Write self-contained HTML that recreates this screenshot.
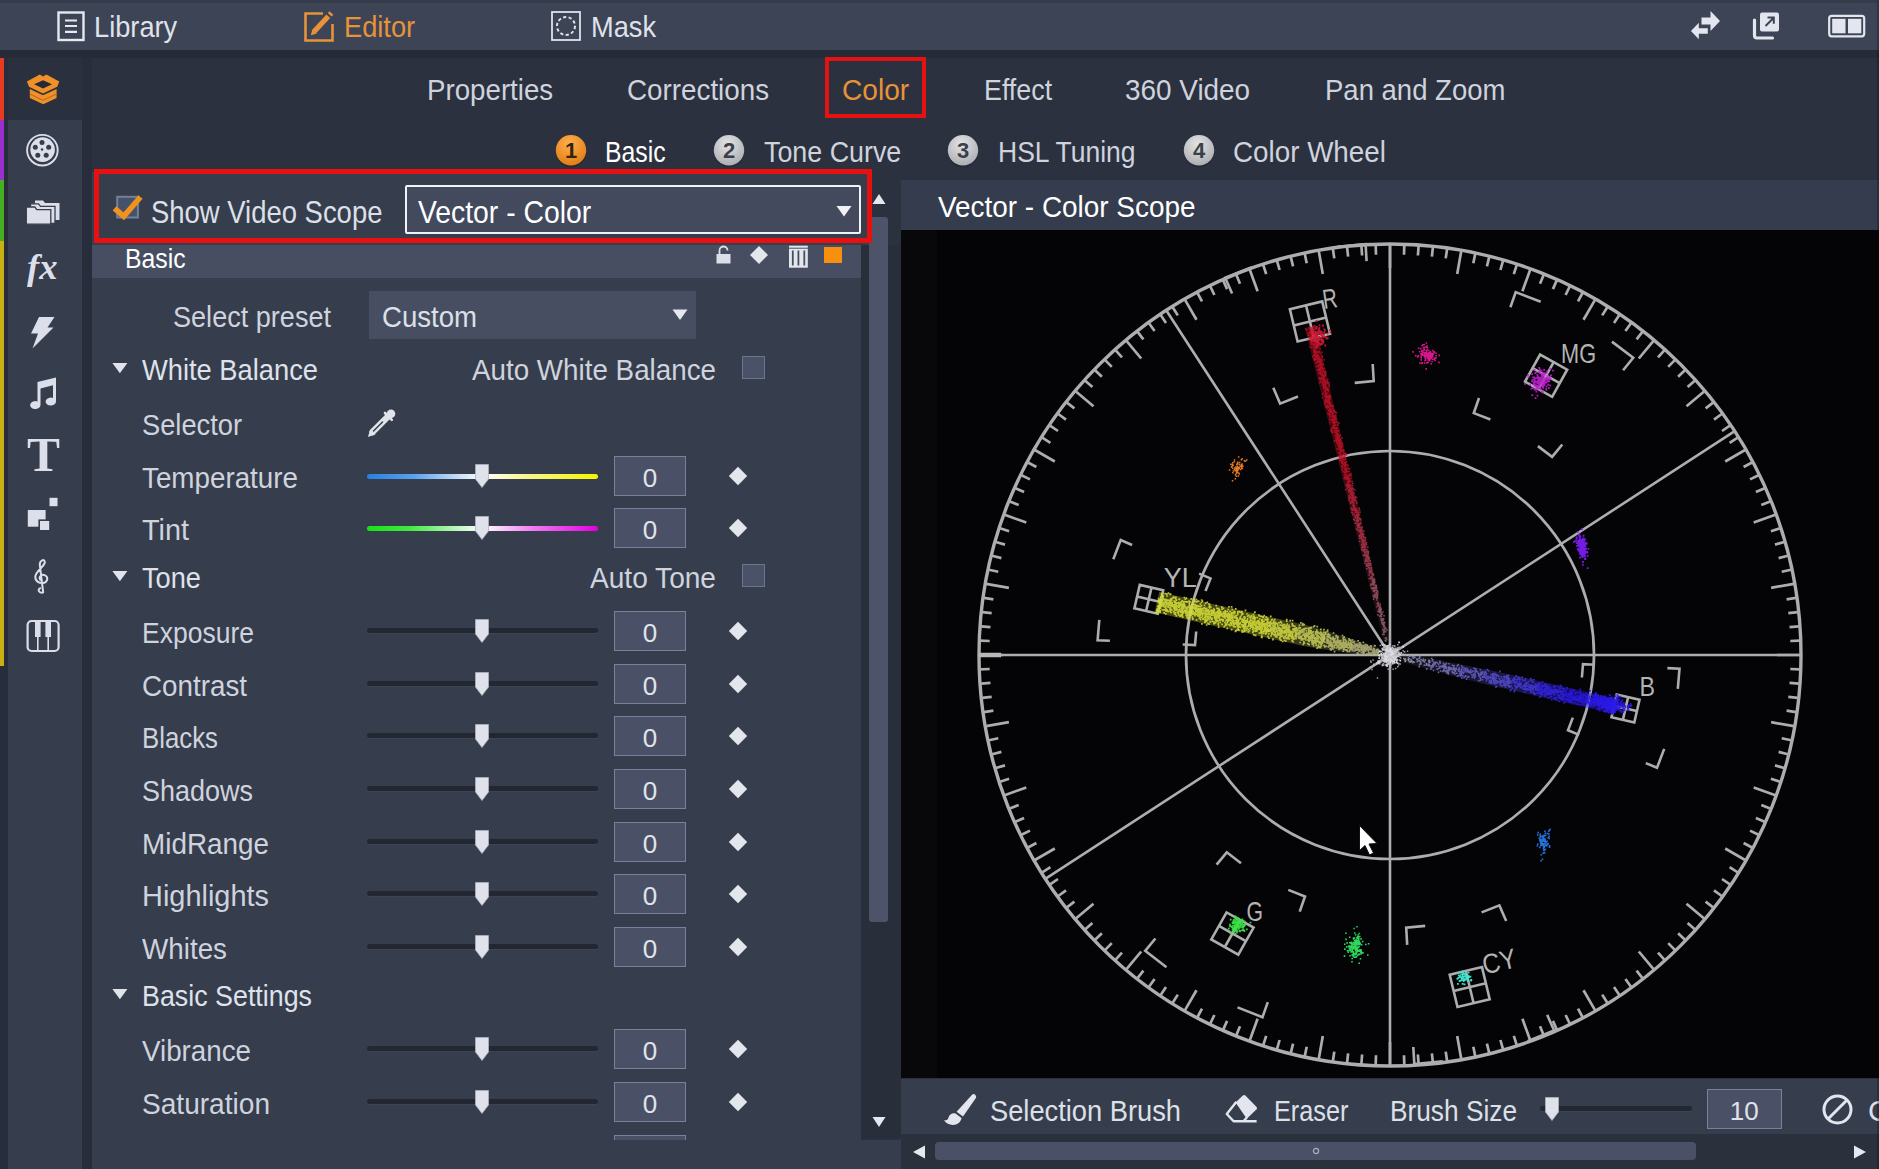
<!DOCTYPE html>
<html><head><meta charset="utf-8"><title>Color - Vector Scope</title>
<style>
html,body{margin:0;padding:0;background:#2b313e;}
#app{position:relative;width:1879px;height:1169px;overflow:hidden;background:#2b313e;font-family:"Liberation Sans",sans-serif;}
#app div,#app span,#app svg{position:absolute;display:block;}
#app span.t{white-space:nowrap;line-height:1;transform-origin:0 0;}
</style></head><body><div id="app">
<div style="left:0px;top:0px;width:1879px;height:50px;background:#3d4455;"></div>
<div style="left:0px;top:0px;width:1879px;height:2.5px;background:#343b4a;"></div>
<div style="left:0px;top:50px;width:1879px;height:8px;background:#252b37;"></div>
<svg style="left:55px;top:9px;" width="32" height="34" viewBox="0 0 32 34"><rect x="3.5" y="3.5" width="25" height="27.5" fill="none" stroke="#e6e9f0" stroke-width="2.4"/><path d="M10 11.5h12M10 17h12M10 22.8h12" stroke="#e6e9f0" stroke-width="2.2"/></svg>
<span class="t" style="left:94.3px;top:11.5px;font-size:30px;color:#dfe2ea;font-family:'Liberation Sans',sans-serif;transform:scaleX(0.9073);">Library</span>
<svg style="left:301px;top:7px;" width="36" height="36" viewBox="0 0 36 36"><path d="M22 6.5H4.5V33.5H31.5V17" fill="none" stroke="#e8923a" stroke-width="2.6"/><path d="M9.800 28.200l1.700-6.200 4.400 4.400z" fill="#e8923a"/><path d="M13.400 24.300L27.300 9.300" stroke="#e8923a" stroke-width="5.200"/><path d="M28.700 7.800l1.700-1.800" stroke="#e8923a" stroke-width="5.200"/></svg>
<span class="t" style="left:344.4px;top:11.5px;font-size:30px;color:#e8923a;font-family:'Liberation Sans',sans-serif;transform:scaleX(0.9072);">Editor</span>
<svg style="left:549px;top:9px;" width="34" height="34" viewBox="0 0 34 34"><rect x="3" y="3" width="28" height="28" fill="none" stroke="#dfe2ea" stroke-width="1.8"/><circle cx="17" cy="17" r="9" fill="none" stroke="#dfe2ea" stroke-width="2" stroke-dasharray="3.2 2.4"/></svg>
<span class="t" style="left:590.5px;top:11.5px;font-size:30px;color:#dfe2ea;font-family:'Liberation Sans',sans-serif;transform:scaleX(0.9069);">Mask</span>
<svg style="left:1686px;top:8px;" width="38" height="36" viewBox="0 0 38 36"><path d="M15.5 9.5h9V3l9.5 10-9.5 10v-6.5h-9z" fill="#e3e6ee"/><path d="M22.5 19.5h-9V13L4 23l9.5 10v-6.5h9z" fill="#e3e6ee" stroke="#3d4455" stroke-width="1.4"/></svg>
<svg style="left:1748px;top:8px;" width="36" height="36" viewBox="0 0 36 36"><path d="M6.5 12v15.5a2.5 2.5 0 0 0 2.5 2.5h15.5" fill="none" stroke="#e3e6ee" stroke-width="3.2" stroke-linecap="round"/><rect x="12" y="4.5" width="19" height="19" rx="2" fill="#e3e6ee"/><path d="M17.5 18l8-8M19.5 9.5h6.3v6.3" fill="none" stroke="#3d4455" stroke-width="2"/></svg>
<svg style="left:1826px;top:12px;" width="42" height="28" viewBox="0 0 42 28"><rect x="3.2" y="3.8" width="35" height="20.5" rx="2.5" fill="none" stroke="#e3e6ee" stroke-width="2.2"/><rect x="6.2" y="6.8" width="13.3" height="14.5" fill="#e3e6ee"/><rect x="22" y="6.8" width="13.3" height="14.5" fill="#e3e6ee"/></svg>
<div style="left:1877px;top:0px;width:2px;height:50px;background:#2f3544;"></div>
<div style="left:0px;top:58px;width:92px;height:1111px;background:#272d3a;"></div>
<div style="left:8px;top:58px;width:74px;height:1111px;background:#363d4d;"></div>
<div style="left:8px;top:58px;width:74px;height:62px;background:#2a303d;"></div>
<div style="left:0px;top:58px;width:4px;height:62px;background:#e63a22;"></div>
<div style="left:0px;top:120px;width:4px;height:60px;background:#9a30cf;"></div>
<div style="left:0px;top:180px;width:4px;height:61px;background:#45b022;"></div>
<div style="left:0px;top:241px;width:4px;height:424.5px;background:#c9b013;"></div>
<svg style="left:24px;top:71px;" width="38" height="36" viewBox="0 0 38 36"><path d="M2.900 10.400L15.800 3.400L19 5.600L22.400 3.400L35.300 10.400L33.200 15.800L19 22.400L5 15.800z" fill="#f09028"/><path d="M10.100 13.200L19 9.200L28 13.200L19 17.400z" fill="#242a36"/><path d="M5.800 18L19 24.300L32.600 18V27L19.200 33.300L5.800 27z" fill="#f09028"/><path d="M5.800 23L19 29.300L32.600 23" stroke="#b86a18" stroke-width="1" fill="none"/></svg>
<svg style="left:24px;top:132px;" width="36" height="36" viewBox="0 0 36 36"><circle cx="18.400" cy="18.200" r="15.300" fill="none" stroke="#dcdfe9" stroke-width="1.900"/><circle cx="18.600" cy="17.600" r="12.300" fill="#dcdfe9"/><g fill="#363d4d"><circle cx="18" cy="10.5" r="2.5"/><circle cx="11.3" cy="15.3" r="2.5"/><circle cx="24.7" cy="15.3" r="2.5"/><circle cx="13.8" cy="23.3" r="2.5"/><circle cx="22.2" cy="23.3" r="2.5"/><circle cx="18" cy="17.5" r="1.2"/></g></svg>
<svg style="left:24px;top:194px;" width="38" height="34" viewBox="0 0 38 34"><path d="M11 6.5h8l2 2.5h14.5v17H11z" fill="#dcdfe9"/><path d="M6.5 9.8h8l2 2.5h14.5v17H6.5z" fill="#dcdfe9" stroke="#363d4d" stroke-width="1.3"/><path d="M2.3 13h8.5l2 2.7h14v14.5H2.3z" fill="#dcdfe9" stroke="#363d4d" stroke-width="1.3"/></svg>
<span class="t" style="left:27.0px;top:248.8px;font-size:36px;color:#dcdfe9;font-family:'Liberation Serif',serif;font-weight:bold;font-style:italic;transform:scaleX(1.0171);">fx</span>
<svg style="left:26px;top:313px;" width="34" height="40" viewBox="0 0 34 40"><path d="M13 4H28.5L21.5 14.5H27.5L6.5 35.5L12 20.5H5z" fill="#dcdfe9"/></svg>
<svg style="left:24px;top:373px;" width="38" height="40" viewBox="0 0 38 40"><path d="M13.5 9L32 4.5V28.5a5.2 4 0 1 1-3-3.6V12.3L16.5 15.5V32a5.2 4 0 1 1-3-3.6z" fill="#dcdfe9"/></svg>
<span class="t" style="left:26.5px;top:430.0px;font-size:49px;color:#dcdfe9;font-family:'Liberation Serif',serif;font-weight:bold;transform:scaleX(1.0097);">T</span>
<svg style="left:24px;top:494px;" width="38" height="40" viewBox="0 0 38 40"><rect x="25.5" y="3.8" width="8" height="8.4" fill="#dcdfe9"/><rect x="3.8" y="16" width="17.8" height="16.7" fill="#dcdfe9"/><rect x="15.2" y="26.2" width="10.8" height="10.6" fill="#dcdfe9" stroke="#363d4d" stroke-width="1.6"/></svg>
<svg style="left:28px;top:556px;" width="30" height="40" viewBox="0 0 30 40"><path d="M14.8 36.5c-4 .8-5.6-3-2.5-4.3M15.2 36.3L11.8 9c-.4-4 4.5-7 5-3 .5 4-9.5 9-9.5 15 0 4.5 4 6.500 8 6 4-.5 5.500-5.500 2-7.500-3.500-2-7 1-5 4.300" fill="none" stroke="#dcdfe9" stroke-width="2" stroke-linecap="round"/></svg>
<svg style="left:24px;top:617px;" width="38" height="38" viewBox="0 0 38 38"><rect x="3.6" y="4" width="31" height="30" rx="4" fill="none" stroke="#dcdfe9" stroke-width="2.2"/><path d="M13.8 4v30M24.200 4v30" stroke="#dcdfe9" stroke-width="1.6"/><rect x="11" y="4.500" width="5.600" height="15.500" fill="#dcdfe9"/><rect x="21.400" y="4.500" width="5.600" height="15.500" fill="#dcdfe9"/></svg>
<span class="t" style="left:427.1px;top:75.3px;font-size:30px;color:#cfd3dd;font-family:'Liberation Sans',sans-serif;transform:scaleX(0.9230);">Properties</span>
<span class="t" style="left:626.7px;top:75.3px;font-size:30px;color:#cfd3dd;font-family:'Liberation Sans',sans-serif;transform:scaleX(0.9264);">Corrections</span>
<span class="t" style="left:842.2px;top:75.3px;font-size:30px;color:#e8923a;font-family:'Liberation Sans',sans-serif;transform:scaleX(0.9360);">Color</span>
<span class="t" style="left:983.7px;top:75.3px;font-size:30px;color:#cfd3dd;font-family:'Liberation Sans',sans-serif;transform:scaleX(0.8942);">Effect</span>
<span class="t" style="left:1125.2px;top:75.3px;font-size:30px;color:#cfd3dd;font-family:'Liberation Sans',sans-serif;transform:scaleX(0.9296);">360 Video</span>
<span class="t" style="left:1324.7px;top:75.3px;font-size:30px;color:#cfd3dd;font-family:'Liberation Sans',sans-serif;transform:scaleX(0.9167);">Pan and Zoom</span>
<div style="left:825px;top:57px;width:93px;height:53px;border:4.5px solid #e61212;"></div>
<svg style="left:553.8px;top:133px;" width="34" height="38" viewBox="0 0 34 38"><defs><radialGradient id="g1" cx="45%" cy="30%" r="75%"><stop offset="0" stop-color="#ffb050"/><stop offset="1" stop-color="#e07a10"/></radialGradient></defs><circle cx="17" cy="18.800" r="15.400" fill="#1f242e" opacity=".6"/><circle cx="17" cy="17.200" r="15.200" fill="url(#g1)"/><text x="17" y="25" text-anchor="middle" font-family="Liberation Sans,sans-serif" font-weight="bold" font-size="22" fill="#33240e">1</text></svg>
<span class="t" style="left:605.3px;top:136.6px;font-size:30px;color:#ffffff;font-family:'Liberation Sans',sans-serif;transform:scaleX(0.8274);">Basic</span>
<svg style="left:711.9px;top:133px;" width="34" height="38" viewBox="0 0 34 38"><defs><radialGradient id="g2" cx="45%" cy="30%" r="75%"><stop offset="0" stop-color="#e4e4e6"/><stop offset="1" stop-color="#a9abb0"/></radialGradient></defs><circle cx="17" cy="18.800" r="15.400" fill="#1f242e" opacity=".6"/><circle cx="17" cy="17.200" r="15.200" fill="url(#g2)"/><text x="17" y="25" text-anchor="middle" font-family="Liberation Sans,sans-serif" font-weight="bold" font-size="22" fill="#3b3f48">2</text></svg>
<span class="t" style="left:764.0px;top:136.6px;font-size:30px;color:#cfd3dd;font-family:'Liberation Sans',sans-serif;transform:scaleX(0.8950);">Tone Curve</span>
<svg style="left:946.4px;top:133px;" width="34" height="38" viewBox="0 0 34 38"><defs><radialGradient id="g3" cx="45%" cy="30%" r="75%"><stop offset="0" stop-color="#e4e4e6"/><stop offset="1" stop-color="#a9abb0"/></radialGradient></defs><circle cx="17" cy="18.800" r="15.400" fill="#1f242e" opacity=".6"/><circle cx="17" cy="17.200" r="15.200" fill="url(#g3)"/><text x="17" y="25" text-anchor="middle" font-family="Liberation Sans,sans-serif" font-weight="bold" font-size="22" fill="#3b3f48">3</text></svg>
<span class="t" style="left:998.1px;top:136.6px;font-size:30px;color:#cfd3dd;font-family:'Liberation Sans',sans-serif;transform:scaleX(0.8840);">HSL Tuning</span>
<svg style="left:1181.6px;top:133px;" width="34" height="38" viewBox="0 0 34 38"><defs><radialGradient id="g4" cx="45%" cy="30%" r="75%"><stop offset="0" stop-color="#e4e4e6"/><stop offset="1" stop-color="#a9abb0"/></radialGradient></defs><circle cx="17" cy="18.800" r="15.400" fill="#1f242e" opacity=".6"/><circle cx="17" cy="17.200" r="15.200" fill="url(#g4)"/><text x="17" y="25" text-anchor="middle" font-family="Liberation Sans,sans-serif" font-weight="bold" font-size="22" fill="#3b3f48">4</text></svg>
<span class="t" style="left:1233.1px;top:136.6px;font-size:30px;color:#cfd3dd;font-family:'Liberation Sans',sans-serif;transform:scaleX(0.9263);">Color Wheel</span>
<div style="left:92px;top:172px;width:777px;height:73px;background:#363d4d;"></div>
<div style="left:92px;top:245px;width:769px;height:924px;background:#363d4d;"></div>
<div style="left:92px;top:245px;width:769px;height:33px;background:#474e62;"></div>
<div style="left:861px;top:245px;width:40.5px;height:893px;background:#292e3b;"></div>
<div style="left:869px;top:172px;width:33px;height:73px;background:#2b313e;"></div>
<div style="left:869px;top:216.5px;width:18.5px;height:705px;background:#4d546a;border-radius:3px;"></div>
<svg style="left:871px;top:190.5px;" width="16" height="16" viewBox="0 0 16 16"><path d="M8 3L14.500 13H1.500z" fill="#e6e8ee"/></svg>
<svg style="left:871px;top:1114px;" width="16" height="16" viewBox="0 0 16 16"><path d="M8 13L14.500 3H1.500z" fill="#e6e8ee"/></svg>
<svg style="left:110px;top:190px;" width="34" height="32" viewBox="0 0 34 32"><rect x="7.200" y="6.800" width="20.700" height="20.700" fill="#46526a" stroke="#72809a" stroke-width="2"/><path d="M4.500 18.300L13.800 26.400L30.500 7" fill="none" stroke="#f0921e" stroke-width="5.600"/></svg>
<span class="t" style="left:150.7px;top:196.7px;font-size:30.5px;color:#dde0e8;font-family:'Liberation Sans',sans-serif;transform:scaleX(0.8998);">Show Video Scope</span>
<div style="left:404.500px;top:185px;width:452px;height:44.500px;border:2.300px solid #f2f3f6;background:#434a5e;border-radius:2px;"></div>
<span class="t" style="left:418.2px;top:196.7px;font-size:30.5px;color:#ffffff;font-family:'Liberation Sans',sans-serif;transform:scaleX(0.9284);">Vector - Color</span>
<svg style="left:834px;top:203px;" width="20" height="16" viewBox="0 0 20 16"><path d="M2.500 3H17.500L10 13.500z" fill="#f0f1f5"/></svg>
<div style="left:94.200px;top:169.200px;width:767.800px;height:64.300px;border:5.800px solid #ea1010;"></div>
<span class="t" style="left:125.1px;top:243.7px;font-size:28.5px;color:#ffffff;font-family:'Liberation Sans',sans-serif;transform:scaleX(0.8710);">Basic</span>
<svg style="left:714px;top:244px;" width="20" height="22" viewBox="0 0 20 22"><path d="M5.500 10V6.500a4 4 0 0 1 8 0" fill="none" stroke="#dcdfe9" stroke-width="1.800"/><rect x="2.500" y="10" width="14" height="9.500" fill="#dcdfe9"/></svg>
<svg style="left:749px;top:244.6px;" width="20" height="20" viewBox="0 0 20 20"><path d="M10 1L19 10L10 19L1 10z" fill="#e4e6ed"/></svg>
<svg style="left:787px;top:244px;" width="24" height="26" viewBox="0 0 24 26"><rect x="2" y="1.700" width="18.800" height="2" fill="#e4e6ed"/><rect x="2" y="4.700" width="18.800" height="19" fill="#e4e6ed"/><path d="M5.800 6.500v15M11.400 6.500v15M17.300 6.500v15" stroke="#474e62" stroke-width="1.800"/></svg>
<div style="left:823.5px;top:246.5px;width:18px;height:16.6px;background:#f6900e;"></div>
<span class="t" style="left:173.0px;top:301.5px;font-size:29.5px;color:#cfd3dd;font-family:'Liberation Sans',sans-serif;transform:scaleX(0.9177);">Select preset</span>
<div style="left:369px;top:291px;width:327px;height:48px;background:#474e61;"></div>
<span class="t" style="left:382.0px;top:301.5px;font-size:29.5px;color:#dde0e8;font-family:'Liberation Sans',sans-serif;transform:scaleX(0.9347);">Custom</span>
<svg style="left:670px;top:307px;" width="20" height="16" viewBox="0 0 20 16"><path d="M2.500 2.500H17.500L10 13z" fill="#e6e8ee"/></svg>
<svg style="left:110px;top:360px;" width="20" height="16" viewBox="0 0 20 16"><path d="M2.400 3H17.400L9.900 13.300z" fill="#e0e3ea"/></svg>
<span class="t" style="left:142.0px;top:354.5px;font-size:29.5px;color:#dfe2ea;font-family:'Liberation Sans',sans-serif;transform:scaleX(0.9253);">White Balance</span>
<span class="t" style="left:472.0px;top:354.5px;font-size:29.5px;color:#cfd3dd;font-family:'Liberation Sans',sans-serif;transform:scaleX(0.9418);">Auto White Balance</span>
<div style="left:742px;top:356.2px;width:20.500px;height:20.500px;border:1.600px solid #6c7590;background:#4a5267;"></div>
<span class="t" style="left:142.0px;top:409.5px;font-size:29.5px;color:#cfd3dd;font-family:'Liberation Sans',sans-serif;transform:scaleX(0.9240);">Selector</span>
<svg style="left:364px;top:406px;" width="36" height="34" viewBox="0 0 36 34"><path d="M3.800 31L6.500 23.500L11.500 28.500z" fill="#e0e3ea"/><path d="M8.500 26L23.500 11" stroke="#e0e3ea" stroke-width="6.400" stroke-linecap="round"/><path d="M9.500 25L18.500 16" stroke="#363d4d" stroke-width="1.500" stroke-linecap="round"/><circle cx="27" cy="7.800" r="4.300" fill="#e0e3ea"/><path d="M21 7L27.800 13.800" stroke="#e0e3ea" stroke-width="2.600" stroke-linecap="round"/></svg>
<span class="t" style="left:142.0px;top:462.5px;font-size:29.5px;color:#cfd3dd;font-family:'Liberation Sans',sans-serif;transform:scaleX(0.9420);">Temperature</span>
<div style="left:367px;top:473.5px;width:231px;height:5px;background:linear-gradient(90deg,#2a7fe0 0%,#5aa0ec 20%,#ffffff 50%,#f6f68a 70%,#f4f400 100%);border-radius:2.500px;"></div>
<svg style="left:474.2px;top:462px;" width="16" height="28" viewBox="0 0 16 28"><path d="M1.500 2.500H14.500V17L8 25.500L1.500 17z" fill="#dfe2ea" stroke="#aeb3c0" stroke-width=".8"/></svg>
<div style="left:614px;top:455.5px;width:70px;height:38.5px;border:1.800px solid #78809a;background:#4a5166;"></div>
<span class="t" style="left:642.8px;top:465.0px;font-size:26px;color:#e0e3ea;font-family:'Liberation Sans',sans-serif;transform:scaleX(1.0000);">0</span>
<svg style="left:728px;top:466px;" width="20" height="20" viewBox="0 0 20 20"><path d="M10 .8L19.200 10L10 19.200L.8 10z" fill="#e4e6ed"/></svg>
<span class="t" style="left:142.0px;top:514.5px;font-size:29.5px;color:#cfd3dd;font-family:'Liberation Sans',sans-serif;transform:scaleX(0.9775);">Tint</span>
<div style="left:367px;top:525.5px;width:231px;height:5px;background:linear-gradient(90deg,#18e018 0%,#40e840 18%,#ffffff 50%,#f27af2 72%,#e000e0 100%);border-radius:2.500px;"></div>
<svg style="left:474.2px;top:514px;" width="16" height="28" viewBox="0 0 16 28"><path d="M1.500 2.500H14.500V17L8 25.500L1.500 17z" fill="#dfe2ea" stroke="#aeb3c0" stroke-width=".8"/></svg>
<div style="left:614px;top:507.5px;width:70px;height:38.5px;border:1.800px solid #78809a;background:#4a5166;"></div>
<span class="t" style="left:642.8px;top:517.0px;font-size:26px;color:#e0e3ea;font-family:'Liberation Sans',sans-serif;transform:scaleX(1.0000);">0</span>
<svg style="left:728px;top:518px;" width="20" height="20" viewBox="0 0 20 20"><path d="M10 .8L19.200 10L10 19.200L.8 10z" fill="#e4e6ed"/></svg>
<svg style="left:110px;top:568px;" width="20" height="16" viewBox="0 0 20 16"><path d="M2.400 3H17.400L9.900 13.300z" fill="#e0e3ea"/></svg>
<span class="t" style="left:142.0px;top:562.5px;font-size:29.5px;color:#dfe2ea;font-family:'Liberation Sans',sans-serif;transform:scaleX(0.9223);">Tone</span>
<span class="t" style="left:590.0px;top:562.5px;font-size:29.5px;color:#cfd3dd;font-family:'Liberation Sans',sans-serif;transform:scaleX(0.9522);">Auto Tone</span>
<div style="left:742px;top:564.2px;width:20.500px;height:20.500px;border:1.600px solid #6c7590;background:#4a5267;"></div>
<span class="t" style="left:142.0px;top:617.5px;font-size:29.5px;color:#cfd3dd;font-family:'Liberation Sans',sans-serif;transform:scaleX(0.8987);">Exposure</span>
<div style="left:367px;top:628px;width:231px;height:5.2px;background:#222732;border-radius:2.500px;box-shadow:0 1px 0 #3d4456;"></div>
<svg style="left:474.2px;top:617px;" width="16" height="28" viewBox="0 0 16 28"><path d="M1.500 2.500H14.500V17L8 25.500L1.500 17z" fill="#dfe2ea" stroke="#aeb3c0" stroke-width=".8"/></svg>
<div style="left:614px;top:610.5px;width:70px;height:38.5px;border:1.800px solid #78809a;background:#4a5166;"></div>
<span class="t" style="left:642.8px;top:620.0px;font-size:26px;color:#e0e3ea;font-family:'Liberation Sans',sans-serif;transform:scaleX(1.0000);">0</span>
<svg style="left:728px;top:621px;" width="20" height="20" viewBox="0 0 20 20"><path d="M10 .8L19.200 10L10 19.200L.8 10z" fill="#e4e6ed"/></svg>
<span class="t" style="left:142.0px;top:670.5px;font-size:29.5px;color:#cfd3dd;font-family:'Liberation Sans',sans-serif;transform:scaleX(0.9418);">Contrast</span>
<div style="left:367px;top:681px;width:231px;height:5.2px;background:#222732;border-radius:2.500px;box-shadow:0 1px 0 #3d4456;"></div>
<svg style="left:474.2px;top:670px;" width="16" height="28" viewBox="0 0 16 28"><path d="M1.500 2.500H14.500V17L8 25.500L1.500 17z" fill="#dfe2ea" stroke="#aeb3c0" stroke-width=".8"/></svg>
<div style="left:614px;top:663.5px;width:70px;height:38.5px;border:1.800px solid #78809a;background:#4a5166;"></div>
<span class="t" style="left:642.8px;top:673.0px;font-size:26px;color:#e0e3ea;font-family:'Liberation Sans',sans-serif;transform:scaleX(1.0000);">0</span>
<svg style="left:728px;top:674px;" width="20" height="20" viewBox="0 0 20 20"><path d="M10 .8L19.200 10L10 19.200L.8 10z" fill="#e4e6ed"/></svg>
<span class="t" style="left:142.0px;top:722.5px;font-size:29.5px;color:#cfd3dd;font-family:'Liberation Sans',sans-serif;transform:scaleX(0.8747);">Blacks</span>
<div style="left:367px;top:733px;width:231px;height:5.2px;background:#222732;border-radius:2.500px;box-shadow:0 1px 0 #3d4456;"></div>
<svg style="left:474.2px;top:722px;" width="16" height="28" viewBox="0 0 16 28"><path d="M1.500 2.500H14.500V17L8 25.500L1.500 17z" fill="#dfe2ea" stroke="#aeb3c0" stroke-width=".8"/></svg>
<div style="left:614px;top:715.5px;width:70px;height:38.5px;border:1.800px solid #78809a;background:#4a5166;"></div>
<span class="t" style="left:642.8px;top:725.0px;font-size:26px;color:#e0e3ea;font-family:'Liberation Sans',sans-serif;transform:scaleX(1.0000);">0</span>
<svg style="left:728px;top:726px;" width="20" height="20" viewBox="0 0 20 20"><path d="M10 .8L19.200 10L10 19.200L.8 10z" fill="#e4e6ed"/></svg>
<span class="t" style="left:142.0px;top:775.5px;font-size:29.5px;color:#cfd3dd;font-family:'Liberation Sans',sans-serif;transform:scaleX(0.9147);">Shadows</span>
<div style="left:367px;top:786px;width:231px;height:5.2px;background:#222732;border-radius:2.500px;box-shadow:0 1px 0 #3d4456;"></div>
<svg style="left:474.2px;top:775px;" width="16" height="28" viewBox="0 0 16 28"><path d="M1.500 2.500H14.500V17L8 25.500L1.500 17z" fill="#dfe2ea" stroke="#aeb3c0" stroke-width=".8"/></svg>
<div style="left:614px;top:768.5px;width:70px;height:38.5px;border:1.800px solid #78809a;background:#4a5166;"></div>
<span class="t" style="left:642.8px;top:778.0px;font-size:26px;color:#e0e3ea;font-family:'Liberation Sans',sans-serif;transform:scaleX(1.0000);">0</span>
<svg style="left:728px;top:779px;" width="20" height="20" viewBox="0 0 20 20"><path d="M10 .8L19.200 10L10 19.200L.8 10z" fill="#e4e6ed"/></svg>
<span class="t" style="left:142.0px;top:828.5px;font-size:29.5px;color:#cfd3dd;font-family:'Liberation Sans',sans-serif;transform:scaleX(0.9445);">MidRange</span>
<div style="left:367px;top:839px;width:231px;height:5.2px;background:#222732;border-radius:2.500px;box-shadow:0 1px 0 #3d4456;"></div>
<svg style="left:474.2px;top:828px;" width="16" height="28" viewBox="0 0 16 28"><path d="M1.500 2.500H14.500V17L8 25.500L1.500 17z" fill="#dfe2ea" stroke="#aeb3c0" stroke-width=".8"/></svg>
<div style="left:614px;top:821.5px;width:70px;height:38.5px;border:1.800px solid #78809a;background:#4a5166;"></div>
<span class="t" style="left:642.8px;top:831.0px;font-size:26px;color:#e0e3ea;font-family:'Liberation Sans',sans-serif;transform:scaleX(1.0000);">0</span>
<svg style="left:728px;top:832px;" width="20" height="20" viewBox="0 0 20 20"><path d="M10 .8L19.200 10L10 19.200L.8 10z" fill="#e4e6ed"/></svg>
<span class="t" style="left:142.0px;top:880.5px;font-size:29.5px;color:#cfd3dd;font-family:'Liberation Sans',sans-serif;transform:scaleX(0.9804);">Highlights</span>
<div style="left:367px;top:891px;width:231px;height:5.2px;background:#222732;border-radius:2.500px;box-shadow:0 1px 0 #3d4456;"></div>
<svg style="left:474.2px;top:880px;" width="16" height="28" viewBox="0 0 16 28"><path d="M1.500 2.500H14.500V17L8 25.500L1.500 17z" fill="#dfe2ea" stroke="#aeb3c0" stroke-width=".8"/></svg>
<div style="left:614px;top:873.5px;width:70px;height:38.5px;border:1.800px solid #78809a;background:#4a5166;"></div>
<span class="t" style="left:642.8px;top:883.0px;font-size:26px;color:#e0e3ea;font-family:'Liberation Sans',sans-serif;transform:scaleX(1.0000);">0</span>
<svg style="left:728px;top:884px;" width="20" height="20" viewBox="0 0 20 20"><path d="M10 .8L19.200 10L10 19.200L.8 10z" fill="#e4e6ed"/></svg>
<span class="t" style="left:142.0px;top:933.5px;font-size:29.5px;color:#cfd3dd;font-family:'Liberation Sans',sans-serif;transform:scaleX(0.9428);">Whites</span>
<div style="left:367px;top:944px;width:231px;height:5.2px;background:#222732;border-radius:2.500px;box-shadow:0 1px 0 #3d4456;"></div>
<svg style="left:474.2px;top:933px;" width="16" height="28" viewBox="0 0 16 28"><path d="M1.500 2.500H14.500V17L8 25.500L1.500 17z" fill="#dfe2ea" stroke="#aeb3c0" stroke-width=".8"/></svg>
<div style="left:614px;top:926.5px;width:70px;height:38.5px;border:1.800px solid #78809a;background:#4a5166;"></div>
<span class="t" style="left:642.8px;top:936.0px;font-size:26px;color:#e0e3ea;font-family:'Liberation Sans',sans-serif;transform:scaleX(1.0000);">0</span>
<svg style="left:728px;top:937px;" width="20" height="20" viewBox="0 0 20 20"><path d="M10 .8L19.200 10L10 19.200L.8 10z" fill="#e4e6ed"/></svg>
<svg style="left:110px;top:986px;" width="20" height="16" viewBox="0 0 20 16"><path d="M2.400 3H17.400L9.900 13.300z" fill="#e0e3ea"/></svg>
<span class="t" style="left:142.0px;top:980.5px;font-size:29.5px;color:#dfe2ea;font-family:'Liberation Sans',sans-serif;transform:scaleX(0.9095);">Basic Settings</span>
<span class="t" style="left:142.0px;top:1035.5px;font-size:29.5px;color:#cfd3dd;font-family:'Liberation Sans',sans-serif;transform:scaleX(0.9405);">Vibrance</span>
<div style="left:367px;top:1046px;width:231px;height:5.2px;background:#222732;border-radius:2.500px;box-shadow:0 1px 0 #3d4456;"></div>
<svg style="left:474.2px;top:1035px;" width="16" height="28" viewBox="0 0 16 28"><path d="M1.500 2.500H14.500V17L8 25.500L1.500 17z" fill="#dfe2ea" stroke="#aeb3c0" stroke-width=".8"/></svg>
<div style="left:614px;top:1028.5px;width:70px;height:38.5px;border:1.800px solid #78809a;background:#4a5166;"></div>
<span class="t" style="left:642.8px;top:1038.0px;font-size:26px;color:#e0e3ea;font-family:'Liberation Sans',sans-serif;transform:scaleX(1.0000);">0</span>
<svg style="left:728px;top:1039px;" width="20" height="20" viewBox="0 0 20 20"><path d="M10 .8L19.200 10L10 19.200L.8 10z" fill="#e4e6ed"/></svg>
<span class="t" style="left:142.0px;top:1088.5px;font-size:29.5px;color:#cfd3dd;font-family:'Liberation Sans',sans-serif;transform:scaleX(0.9518);">Saturation</span>
<div style="left:367px;top:1099px;width:231px;height:5.2px;background:#222732;border-radius:2.500px;box-shadow:0 1px 0 #3d4456;"></div>
<svg style="left:474.2px;top:1088px;" width="16" height="28" viewBox="0 0 16 28"><path d="M1.500 2.500H14.500V17L8 25.500L1.500 17z" fill="#dfe2ea" stroke="#aeb3c0" stroke-width=".8"/></svg>
<div style="left:614px;top:1081.5px;width:70px;height:38.5px;border:1.800px solid #78809a;background:#4a5166;"></div>
<span class="t" style="left:642.8px;top:1091.0px;font-size:26px;color:#e0e3ea;font-family:'Liberation Sans',sans-serif;transform:scaleX(1.0000);">0</span>
<svg style="left:728px;top:1092px;" width="20" height="20" viewBox="0 0 20 20"><path d="M10 .8L19.200 10L10 19.200L.8 10z" fill="#e4e6ed"/></svg>
<div style="left:614px;top:1134.800px;width:69.800px;height:20px;border:1.800px solid #78809a;background:#4a5166;"></div>
<div style="left:92px;top:1139.8px;width:809px;height:30px;background:#363d4d;"></div>
<div style="left:901px;top:180px;width:978px;height:50px;background:#353c4d;"></div>
<span class="t" style="left:938.0px;top:191.5px;font-size:29.5px;color:#ffffff;font-family:'Liberation Sans',sans-serif;transform:scaleX(0.9460);">Vector - Color Scope</span>
<div style="left:901px;top:230px;width:978px;height:848px;background:#040406;"></div>
<div style="left:901px;top:1079px;width:978px;height:55px;background:#363d4d;"></div>
<div style="left:901px;top:1134px;width:978px;height:35px;background:#2a303c;"></div>
<svg style="left:942px;top:1092px;" width="36" height="36" viewBox="0 0 36 36"><path d="M30.300 2.400a2.700 2.700 0 0 1 3.600 3.600L21 24.400l-6.400-4.600z" fill="#e3e6ee"/><path d="M13.200 21.300l6.300 4.700c-.6 4-4 6.900-8.700 6.900-3.600 0-6.800-1.500-8.800-4.600 2.600.3 4-.8 4.500-2.900.8-3 3.600-4.700 6.700-4.100z" fill="#e3e6ee"/></svg>
<span class="t" style="left:990.0px;top:1096.0px;font-size:29.5px;color:#dde0e8;font-family:'Liberation Sans',sans-serif;transform:scaleX(0.9244);">Selection Brush</span>
<svg style="left:1224px;top:1092px;" width="38" height="36" viewBox="0 0 38 36"><path d="M12.400 9.700L2.800 22L9.600 29.300H32.600" fill="none" stroke="#e3e6ee" stroke-width="2.400" stroke-linejoin="round"/><path d="M11.600 10.400L18.800 3.600Q20.100 2.600 21.400 3.600L32.600 14.900Q33.500 16.100 32.600 17.300L22.800 26.700z" fill="#e3e6ee"/><path d="M22.800 25.500L19.500 29.300" stroke="#e3e6ee" stroke-width="2.400"/></svg>
<span class="t" style="left:1273.5px;top:1096.3px;font-size:29.5px;color:#dde0e8;font-family:'Liberation Sans',sans-serif;transform:scaleX(0.8574);">Eraser</span>
<span class="t" style="left:1390.0px;top:1096.0px;font-size:29.5px;color:#dde0e8;font-family:'Liberation Sans',sans-serif;transform:scaleX(0.8903);">Brush Size</span>
<div style="left:1540px;top:1106.2px;width:152px;height:5.2px;background:#222732;border-radius:2.500px;box-shadow:0 1px 0 #3d4456;"></div>
<svg style="left:1543.5px;top:1095.2px;" width="16" height="28" viewBox="0 0 16 28"><path d="M1.500 2.500H14.500V17L8 25.500L1.500 17z" fill="#dfe2ea" stroke="#aeb3c0" stroke-width=".8"/></svg>
<div style="left:1707px;top:1088.95px;width:72.5px;height:38.0px;border:1.800px solid #78809a;background:#4a5166;"></div>
<span class="t" style="left:1729.8px;top:1098.2px;font-size:26px;color:#e0e3ea;font-family:'Liberation Sans',sans-serif;transform:scaleX(1.0000);">10</span>
<svg style="left:1820px;top:1092px;" width="36" height="36" viewBox="0 0 36 36"><circle cx="17.500" cy="17.500" r="13.500" fill="none" stroke="#e3e6ee" stroke-width="3"/><path d="M8 27L27 8" stroke="#e3e6ee" stroke-width="3"/></svg>
<span class="t" style="left:1868.0px;top:1096.0px;font-size:29.5px;color:#dde0e8;font-family:'Liberation Sans',sans-serif;transform:scaleX(1.0000);">C</span>
<div style="left:935px;top:1142px;width:761px;height:18px;background:#4a5167;border-radius:4px;"></div>
<svg style="left:910px;top:1143px;" width="18" height="18" viewBox="0 0 18 18"><path d="M15 2.500V15.500L3 9z" fill="#e6e8ee"/></svg>
<svg style="left:1851px;top:1143px;" width="18" height="18" viewBox="0 0 18 18"><path d="M3 2.500V15.500L15 9z" fill="#e6e8ee"/></svg>
<svg style="left:1311px;top:1146px;" width="10" height="10" viewBox="0 0 10 10"><circle cx="5" cy="5" r="2.600" fill="none" stroke="#aab0c0" stroke-width="1.200"/></svg>
<div style="left:1877px;top:50px;width:2px;height:1119px;background:rgba(0,0,0,0.22);"></div>
<svg style="left:901px;top:230px;" width="978" height="848" viewBox="901 230 978 848"><rect x="901" y="230" width="36" height="848" fill="#08080b"/><circle cx="1390.0" cy="655.0" r="411.0" fill="none" stroke="#adadad" stroke-width="3.400"/><circle cx="1390.0" cy="655.0" r="204" fill="none" stroke="#adadad" stroke-width="2.700"/><path d="M1390.0 245.0V1065.0M980.0 655.0H1800.0" stroke="#adadad" stroke-width="2.600" fill="none"/><path d="M1734.7 431.2L1045.3 878.8M1390.0 655.0L1166.2 310.3" stroke="#adadad" stroke-width="2.600" fill="none"/><path d="M1800.0 655.0L1777.0 655.0M1799.8 640.7L1790.3 641.0M1799.0 626.4L1789.5 627.1M1797.8 612.1L1788.3 613.1M1796.0 597.9L1786.6 599.3M1793.8 583.8L1771.1 587.8M1791.0 569.8L1781.7 571.7M1787.8 555.8L1778.6 558.1M1784.1 542.0L1775.0 544.6M1779.9 528.3L1770.9 531.2M1775.3 514.8L1753.7 522.6M1770.1 501.4L1761.3 505.0M1764.6 488.2L1755.9 492.1M1758.5 475.3L1750.0 479.4M1752.0 462.5L1743.6 467.0M1745.1 450.0L1725.2 461.5M1737.7 437.7L1729.6 442.8M1729.9 425.7L1722.0 431.0M1721.7 414.0L1714.0 419.6M1713.1 402.6L1705.6 408.4M1704.1 391.5L1686.5 406.2M1694.7 380.7L1687.6 387.0M1684.9 370.2L1678.1 376.8M1674.8 360.1L1668.2 366.9M1664.3 350.3L1658.0 357.4M1653.5 340.9L1638.8 358.5M1642.4 331.9L1636.6 339.4M1631.0 323.3L1625.4 331.0M1619.3 315.1L1614.0 323.0M1607.3 307.3L1602.2 315.4M1595.0 299.9L1583.5 319.8M1582.5 293.0L1578.0 301.4M1569.7 286.5L1565.6 295.0M1556.8 280.4L1552.9 289.1M1543.6 274.9L1540.0 283.7M1530.2 269.7L1522.4 291.3M1516.7 265.1L1513.8 274.1M1503.0 260.9L1500.4 270.0M1489.2 257.2L1486.9 266.4M1475.2 254.0L1473.3 263.3M1461.2 251.2L1457.2 273.9M1447.1 249.0L1445.7 258.4M1432.9 247.2L1431.9 256.7M1418.6 246.0L1417.9 255.5M1404.3 245.2L1404.0 254.7M1390.0 245.0L1390.0 268.0M1375.7 245.2L1376.0 254.7M1361.4 246.0L1362.1 255.5M1347.1 247.2L1348.1 256.7M1332.9 249.0L1334.3 258.4M1318.8 251.2L1322.8 273.9M1304.8 254.0L1306.7 263.3M1290.8 257.2L1293.1 266.4M1277.0 260.9L1279.6 270.0M1263.3 265.1L1266.2 274.1M1249.8 269.7L1257.6 291.3M1236.4 274.9L1240.0 283.7M1223.2 280.4L1227.1 289.1M1210.3 286.5L1214.4 295.0M1197.5 293.0L1202.0 301.4M1185.0 299.9L1196.5 319.8M1172.7 307.3L1177.8 315.4M1160.7 315.1L1166.0 323.0M1149.0 323.3L1154.6 331.0M1137.6 331.9L1143.4 339.4M1126.5 340.9L1141.2 358.5M1115.7 350.3L1122.0 357.4M1105.2 360.1L1111.8 366.9M1095.1 370.2L1101.9 376.8M1085.3 380.7L1092.4 387.0M1075.9 391.5L1093.5 406.2M1066.9 402.6L1074.4 408.4M1058.3 414.0L1066.0 419.6M1050.1 425.7L1058.0 431.0M1042.3 437.7L1050.4 442.8M1034.9 450.0L1054.8 461.5M1028.0 462.5L1036.4 467.0M1021.5 475.3L1030.0 479.4M1015.4 488.2L1024.1 492.1M1009.9 501.4L1018.7 505.0M1004.7 514.8L1026.3 522.6M1000.1 528.3L1009.1 531.2M995.9 542.0L1005.0 544.6M992.2 555.8L1001.4 558.1M989.0 569.8L998.3 571.7M986.2 583.8L1008.9 587.8M984.0 597.9L993.4 599.3M982.2 612.1L991.7 613.1M981.0 626.4L990.5 627.1M980.2 640.7L989.7 641.0M980.0 655.0L1003.0 655.0M980.2 669.3L989.7 669.0M981.0 683.6L990.5 682.9M982.2 697.9L991.7 696.9M984.0 712.1L993.4 710.7M986.2 726.2L1008.9 722.2M989.0 740.2L998.3 738.3M992.2 754.2L1001.4 751.9M995.9 768.0L1005.0 765.4M1000.1 781.7L1009.1 778.8M1004.7 795.2L1026.3 787.4M1009.9 808.6L1018.7 805.0M1015.4 821.8L1024.1 817.9M1021.5 834.7L1030.0 830.6M1028.0 847.5L1036.4 843.0M1034.9 860.0L1054.8 848.5M1042.3 872.3L1050.4 867.2M1050.1 884.3L1058.0 879.0M1058.3 896.0L1066.0 890.4M1066.9 907.4L1074.4 901.6M1075.9 918.5L1093.5 903.8M1085.3 929.3L1092.4 923.0M1095.1 939.8L1101.9 933.2M1105.2 949.9L1111.8 943.1M1115.7 959.7L1122.0 952.6M1126.5 969.1L1141.2 951.5M1137.6 978.1L1143.4 970.6M1149.0 986.7L1154.6 979.0M1160.7 994.9L1166.0 987.0M1172.7 1002.7L1177.8 994.6M1185.0 1010.1L1196.5 990.2M1197.5 1017.0L1202.0 1008.6M1210.3 1023.5L1214.4 1015.0M1223.2 1029.6L1227.1 1020.9M1236.4 1035.1L1240.0 1026.3M1249.8 1040.3L1257.6 1018.7M1263.3 1044.9L1266.2 1035.9M1277.0 1049.1L1279.6 1040.0M1290.8 1052.8L1293.1 1043.6M1304.8 1056.0L1306.7 1046.7M1318.8 1058.8L1322.8 1036.1M1332.9 1061.0L1334.3 1051.6M1347.1 1062.8L1348.1 1053.3M1361.4 1064.0L1362.1 1054.5M1375.7 1064.8L1376.0 1055.3M1390.0 1065.0L1390.0 1042.0M1404.3 1064.8L1404.0 1055.3M1418.6 1064.0L1417.9 1054.5M1432.9 1062.8L1431.9 1053.3M1447.1 1061.0L1445.7 1051.6M1461.2 1058.8L1457.2 1036.1M1475.2 1056.0L1473.3 1046.7M1489.2 1052.8L1486.9 1043.6M1503.0 1049.1L1500.4 1040.0M1516.7 1044.9L1513.8 1035.9M1530.2 1040.3L1522.4 1018.7M1543.6 1035.1L1540.0 1026.3M1556.8 1029.6L1552.9 1020.9M1569.7 1023.5L1565.6 1015.0M1582.5 1017.0L1578.0 1008.6M1595.0 1010.1L1583.5 990.2M1607.3 1002.7L1602.2 994.6M1619.3 994.9L1614.0 987.0M1631.0 986.7L1625.4 979.0M1642.4 978.1L1636.6 970.6M1653.5 969.1L1638.8 951.5M1664.3 959.7L1658.0 952.6M1674.8 949.9L1668.2 943.1M1684.9 939.8L1678.1 933.2M1694.7 929.3L1687.6 923.0M1704.1 918.5L1686.5 903.8M1713.1 907.4L1705.6 901.6M1721.7 896.0L1714.0 890.4M1729.9 884.3L1722.0 879.0M1737.7 872.3L1729.6 867.2M1745.1 860.0L1725.2 848.5M1752.0 847.5L1743.6 843.0M1758.5 834.7L1750.0 830.6M1764.6 821.8L1755.9 817.9M1770.1 808.6L1761.3 805.0M1775.3 795.2L1753.7 787.4M1779.9 781.7L1770.9 778.8M1784.1 768.0L1775.0 765.4M1787.8 754.2L1778.6 751.9M1791.0 740.2L1781.7 738.3M1793.8 726.2L1771.1 722.2M1796.0 712.1L1786.6 710.7M1797.8 697.9L1788.3 696.9M1799.0 683.6L1789.5 682.9M1799.8 669.3L1790.3 669.0" stroke="#adadad" stroke-width="2.700" fill="none"/><path d="M979.0 655.0L1001.0 655.0" stroke="#b8b8b8" stroke-width="4.500"/><path d="M1330.0 333.8L1322.2 301.4L1289.9 309.2L1297.6 341.5zM1313.8 337.7L1306.0 305.3M1326.1 317.6L1293.8 325.4M1372.7 364.0L1373.7 381.1L1354.7 382.9M1273.3 387.8L1280.1 403.6L1298.0 396.5M1366.6 261.2L1365.6 244.1L1337.0 246.8M1232.1 293.5L1225.2 277.8L1251.9 267.2M1552.1 396.8L1567.2 369.7L1540.1 354.5L1525.0 381.6zM1538.5 389.2L1553.7 362.1M1559.7 383.2L1532.6 368.1M1562.3 444.5L1552.1 456.9L1537.9 446.1M1479.0 398.0L1473.8 413.1L1490.4 419.5M1623.1 370.2L1633.2 357.8L1611.9 341.6M1510.4 307.3L1515.7 292.1L1540.7 301.8M1611.5 717.3L1634.3 722.5L1639.5 699.7L1616.7 694.5zM1614.1 705.9L1636.9 711.1M1622.9 719.9L1628.1 697.1M1579.1 734.9L1568.0 730.2L1572.8 717.6M1595.0 664.7L1583.0 664.1L1581.9 677.5M1645.8 763.1L1657.0 767.8L1664.2 748.9M1667.4 668.1L1679.5 668.7L1677.8 688.8M1449.7 974.8L1457.5 1007.0L1489.7 999.3L1482.0 967.1zM1465.9 971.0L1473.6 1003.2M1453.6 990.9L1485.8 983.2M1407.2 944.8L1406.2 927.7L1425.2 925.9M1506.2 921.0L1499.4 905.4L1481.6 912.4M1413.3 1047.0L1414.3 1064.1L1442.8 1061.4M1547.2 1014.9L1554.1 1030.5L1527.5 1041.1M1226.6 912.4L1211.3 939.4L1238.3 954.7L1253.6 927.6zM1240.1 920.0L1224.8 947.0M1218.9 925.9L1245.9 941.2M1216.6 864.6L1226.8 852.3L1241.0 863.2M1299.7 911.6L1305.0 896.5L1288.3 889.9M1155.4 938.5L1145.2 950.9L1166.5 967.2M1267.8 1002.1L1262.5 1017.2L1237.5 1007.4M1163.2 590.3L1139.8 584.9L1134.4 608.3L1157.8 613.7zM1160.5 602.0L1137.1 596.6M1151.5 587.6L1146.1 611.0M1199.1 573.6L1210.5 578.4L1205.5 591.1M1182.7 644.5L1195.0 645.1L1196.2 631.5M1132.1 545.0L1120.7 540.1L1113.3 559.2M1109.9 640.8L1097.6 640.2L1099.3 619.8" stroke="#adadad" stroke-width="2.600" fill="none" stroke-linejoin="miter"/><text x="1323.9" y="309.0" font-family="Liberation Sans,sans-serif" font-size="27.500" fill="#b4b4b4" textLength="14.5" lengthAdjust="spacingAndGlyphs" transform="rotate(-8 1323.9 309.0)">R</text><text x="1561.1" y="363.2" font-family="Liberation Sans,sans-serif" font-size="27.500" fill="#b4b4b4" textLength="35" lengthAdjust="spacingAndGlyphs">MG</text><text x="1639.5" y="696.0" font-family="Liberation Sans,sans-serif" font-size="27.500" fill="#b4b4b4" textLength="15.5" lengthAdjust="spacingAndGlyphs">B</text><text x="1484.7" y="974.6" font-family="Liberation Sans,sans-serif" font-size="27.500" fill="#b4b4b4" textLength="34" lengthAdjust="spacingAndGlyphs" transform="rotate(-13 1484.7 974.6)">CY</text><text x="1246.4" y="921.0" font-family="Liberation Sans,sans-serif" font-size="27.500" fill="#b4b4b4" textLength="16.5" lengthAdjust="spacingAndGlyphs">G</text><text x="1163.8" y="586.8" font-family="Liberation Sans,sans-serif" font-size="27.500" fill="#b4b4b4" textLength="33" lengthAdjust="spacingAndGlyphs">YL</text><defs><linearGradient id="tg167" gradientUnits="userSpaceOnUse" x1="1378.3" y1="652.3" x2="1267.6" y2="627.2"><stop offset="0" stop-color="#aaaa82" stop-opacity="0.45"/><stop offset="1" stop-color="#d4dc38"/></linearGradient></defs><path d="M1379.3 648.0L1361.2 642.1L1343.1 636.3L1325.1 630.5L1306.8 625.3L1288.4 621.1L1269.9 617.0L1251.5 612.8L1233.1 608.6L1214.6 604.4L1196.2 600.2L1177.7 596.0L1159.3 591.8L1154.6 612.3L1173.1 616.5L1191.5 620.7L1210.0 624.9L1228.4 629.1L1246.8 633.2L1265.3 637.4L1283.7 641.6L1302.2 645.8L1320.9 649.0L1339.7 651.6L1358.5 654.2L1377.3 656.7z" fill="url(#tg167)" opacity="0.32"/><path d="M1353.7 650.6h1.7M1364.9 648.3h1.7M1364.7 646.9h1.7M1353.1 642.6h1.7M1360.4 645.2h1.7M1357.0 649.4h1.7M1368.6 653.2h1.7M1367.4 649.6h1.7M1367.8 649.6h1.7M1352.0 642.4h1.7M1372.4 650.6h1.7M1376.2 652.3h1.7M1354.9 644.3h1.7M1369.7 654.1h1.7M1364.0 649.5h1.7M1353.6 651.0h1.7M1351.2 647.0h1.7M1370.5 652.7h1.7M1355.0 646.9h1.7M1350.4 649.7h1.7M1375.9 651.7h1.7M1362.9 651.3h1.7M1362.1 651.8h1.7M1377.1 649.7h1.7M1354.1 646.3h1.7M1372.3 654.0h1.7M1358.0 647.2h1.7M1369.1 648.4h1.7M1377.0 649.6h1.7M1377.3 652.1h1.7M1361.2 649.5h1.7M1361.7 646.7h1.7M1357.8 646.3h1.7M1370.6 646.3h1.7M1366.7 648.2h1.7M1373.0 654.4h1.7M1370.2 648.4h1.7M1366.0 648.6h1.7M1360.5 648.0h1.7M1359.1 642.8h1.7M1366.8 648.0h1.7M1361.8 645.8h1.7M1366.0 653.9h1.7M1364.7 644.8h1.7M1364.3 654.9h1.7M1369.9 645.8h1.7M1351.7 650.7h1.7M1357.2 645.2h1.7M1366.3 647.3h1.7M1351.4 646.0h1.7M1363.9 648.7h1.7M1373.7 649.6h1.7M1356.6 649.9h1.7M1360.1 647.7h1.7M1364.6 644.8h1.7M1364.9 647.5h1.7M1369.7 648.2h1.7M1363.5 650.2h1.7M1364.8 650.0h1.7M1368.8 653.9h1.7M1377.0 651.4h1.7M1373.7 649.4h1.7M1374.2 645.9h1.7M1360.5 652.3h1.7M1374.8 653.7h1.7M1363.3 649.5h1.7M1356.9 645.0h1.7M1367.3 647.4h1.7M1377.3 653.2h1.7M1376.7 649.3h1.7M1351.9 647.6h1.7M1368.0 652.8h1.7M1373.1 648.9h1.7M1374.9 653.0h1.7M1368.2 646.9h1.7M1374.9 653.5h1.7M1364.6 650.3h1.7M1363.3 652.7h1.7M1352.2 642.1h1.7M1373.5 650.4h1.7M1372.7 648.4h1.7M1353.6 641.7h1.7M1377.4 651.9h1.7M1362.6 648.6h1.7M1364.7 648.8h1.7M1360.4 649.4h1.7M1362.5 645.6h1.7M1358.6 651.0h1.7M1364.8 651.0h1.7M1358.6 649.6h1.7M1358.2 651.4h1.7M1357.4 653.9h1.7M1377.0 653.1h1.7M1351.8 650.2h1.7M1356.6 646.4h1.7M1358.8 650.6h1.7M1376.5 649.5h1.7M1356.5 652.8h1.7M1370.2 649.9h1.7M1354.8 650.0h1.7M1366.5 645.9h1.7M1358.0 645.2h1.7M1361.8 648.4h1.7M1373.1 650.4h1.7M1358.9 651.0h1.7M1363.1 647.4h1.7M1350.1 649.1h1.7M1364.1 648.3h1.7M1364.5 647.7h1.7M1378.1 650.4h1.7M1363.6 646.7h1.7M1359.9 647.1h1.7M1362.1 652.2h1.7M1358.7 645.9h1.7M1358.0 647.3h1.7M1373.4 652.0h1.7M1373.9 654.1h1.7M1367.6 650.7h1.7M1364.0 648.9h1.7M1376.1 655.2h1.7M1350.7 647.9h1.7M1367.4 651.4h1.7M1351.4 644.5h1.7M1353.9 648.4h1.7M1372.3 649.6h1.7M1363.2 647.4h1.7M1373.7 645.7h1.7M1353.8 645.7h1.7M1375.8 649.9h1.7M1370.4 649.4h1.7M1374.6 653.3h1.7M1355.8 649.1h1.7M1352.0 648.3h1.7M1357.3 640.8h1.7M1352.8 645.5h1.7M1359.0 647.1h1.7M1374.3 651.0h1.7M1367.6 650.5h1.7M1373.8 652.5h1.7M1355.0 649.3h1.7M1363.6 646.1h1.7M1362.5 642.4h1.7M1363.7 645.5h1.7M1370.7 652.7h1.7M1355.5 644.7h1.7M1353.1 647.2h1.7M1375.0 653.5h1.7M1360.9 646.9h1.7M1359.6 644.1h1.7M1360.9 650.1h1.7M1363.1 650.1h1.7M1366.2 649.3h1.7M1361.3 647.0h1.7M1355.9 644.6h1.7M1367.3 647.3h1.7M1358.5 643.0h1.7M1364.6 644.5h1.7M1373.3 652.5h1.7M1376.1 651.4h1.7M1354.1 644.3h1.7M1366.4 645.1h1.7M1362.4 646.7h1.7M1362.5 653.6h1.7M1376.7 651.1h1.7M1359.1 644.3h1.7M1363.9 649.7h1.7M1368.2 647.2h1.7M1357.2 647.4h1.7M1357.2 647.7h1.7M1362.4 650.0h1.7M1355.4 645.1h1.7M1356.6 644.1h1.7M1361.5 647.8h1.7M1360.0 647.0h1.7M1374.3 653.7h1.7M1372.6 650.8h1.7M1367.9 649.3h1.7M1357.5 645.1h1.7M1355.4 650.1h1.7M1373.5 653.2h1.7M1356.9 646.5h1.7M1372.0 651.7h1.7M1351.7 645.6h1.7M1373.5 651.4h1.7M1365.0 650.3h1.7M1372.6 652.7h1.7M1369.6 649.3h1.7M1378.5 651.0h1.7" stroke="#afb079" stroke-width="1.7" opacity="0.88" fill="none"/><path d="M1349.4 646.3h1.7M1335.0 645.1h1.7M1327.8 635.3h1.7M1329.4 642.4h1.7M1339.4 643.6h1.7M1335.4 635.7h1.7M1327.6 641.2h1.7M1330.8 642.8h1.7M1333.8 642.3h1.7M1346.8 644.6h1.7M1346.4 645.3h1.7M1329.6 649.3h1.7M1335.3 641.1h1.7M1329.8 642.1h1.7M1329.7 639.0h1.7M1338.9 648.3h1.7M1334.0 647.6h1.7M1325.9 641.0h1.7M1338.0 640.5h1.7M1341.7 642.6h1.7M1333.3 640.8h1.7M1337.2 637.2h1.7M1332.3 637.2h1.7M1323.6 636.8h1.7M1340.0 640.6h1.7M1333.3 646.8h1.7M1348.8 650.6h1.7M1344.4 645.3h1.7M1326.8 630.1h1.7M1345.1 646.1h1.7M1339.0 644.5h1.7M1331.6 638.4h1.7M1333.0 638.9h1.7M1345.2 647.2h1.7M1338.9 641.9h1.7M1336.9 641.0h1.7M1343.4 637.1h1.7M1346.3 646.6h1.7M1323.2 645.3h1.7M1329.5 642.8h1.7M1349.1 647.5h1.7M1344.1 647.1h1.7M1339.8 643.5h1.7M1342.9 648.4h1.7M1323.9 646.9h1.7M1328.6 644.6h1.7M1325.0 633.8h1.7M1349.2 640.2h1.7M1342.5 639.6h1.7M1332.4 646.0h1.7M1324.0 642.2h1.7M1324.2 646.1h1.7M1340.2 643.2h1.7M1327.5 633.9h1.7M1341.0 644.0h1.7M1327.9 636.0h1.7M1350.1 642.0h1.7M1331.0 639.0h1.7M1344.2 639.4h1.7M1344.7 649.8h1.7M1328.6 636.3h1.7M1334.3 642.4h1.7M1338.5 644.1h1.7M1336.8 639.9h1.7M1345.5 645.6h1.7M1335.1 644.4h1.7M1342.4 651.2h1.7M1346.0 649.9h1.7M1328.2 645.3h1.7M1326.6 636.4h1.7M1333.1 640.0h1.7M1330.5 646.1h1.7M1346.2 646.7h1.7M1336.9 639.7h1.7M1348.8 640.2h1.7M1327.0 636.3h1.7M1331.0 643.6h1.7M1347.6 641.4h1.7M1335.6 644.5h1.7M1334.3 638.6h1.7M1336.2 645.7h1.7M1335.2 644.2h1.7M1333.6 642.6h1.7M1341.0 645.5h1.7M1338.1 649.4h1.7M1349.9 647.9h1.7M1324.1 638.4h1.7M1326.9 639.4h1.7M1341.2 646.8h1.7M1345.9 643.7h1.7M1340.1 646.3h1.7M1335.3 645.2h1.7M1323.0 640.4h1.7M1346.5 651.3h1.7M1348.1 643.6h1.7M1336.1 647.9h1.7M1326.5 641.5h1.7M1341.9 642.5h1.7M1345.8 647.2h1.7M1348.1 644.7h1.7M1346.4 644.3h1.7M1341.2 642.8h1.7M1341.3 643.9h1.7M1336.2 636.7h1.7M1331.3 638.5h1.7M1336.8 642.9h1.7M1338.5 644.9h1.7M1351.7 640.0h1.7M1330.3 649.3h1.7M1344.3 646.1h1.7M1333.5 640.1h1.7M1341.7 635.7h1.7M1325.9 639.6h1.7M1347.9 642.9h1.7M1345.1 640.9h1.7M1326.2 640.4h1.7M1340.6 647.4h1.7M1344.2 649.7h1.7M1346.6 647.2h1.7M1329.4 641.0h1.7M1329.0 638.0h1.7M1332.8 641.5h1.7M1338.1 647.5h1.7M1327.0 643.0h1.7M1345.4 641.6h1.7M1340.4 643.1h1.7M1338.7 643.2h1.7M1330.9 642.7h1.7M1325.6 646.3h1.7M1343.9 645.2h1.7M1350.3 643.5h1.7M1336.9 639.6h1.7M1343.4 643.5h1.7M1336.4 645.8h1.7M1326.6 634.9h1.7M1329.2 643.0h1.7M1330.1 644.6h1.7M1342.6 647.5h1.7M1343.4 646.3h1.7M1348.8 643.6h1.7M1346.1 646.8h1.7M1329.7 637.5h1.7M1338.1 640.5h1.7M1329.7 641.2h1.7M1342.5 649.2h1.7M1325.4 632.0h1.7M1343.1 646.1h1.7M1326.2 637.0h1.7M1331.5 644.7h1.7M1335.2 642.5h1.7M1337.0 646.6h1.7M1338.1 640.6h1.7M1326.7 631.6h1.7M1335.7 644.0h1.7M1348.5 651.3h1.7M1333.7 645.2h1.7M1329.6 648.6h1.7M1345.0 644.6h1.7M1331.3 647.2h1.7M1347.1 647.9h1.7M1348.7 650.2h1.7M1338.2 641.0h1.7M1334.8 642.1h1.7M1344.7 640.3h1.7M1342.2 646.6h1.7M1328.2 643.1h1.7M1342.3 638.0h1.7M1333.2 642.1h1.7M1350.4 645.5h1.7M1335.6 636.0h1.7M1327.3 640.1h1.7M1350.5 644.6h1.7M1326.2 643.1h1.7M1345.7 650.1h1.7M1332.1 646.7h1.7M1332.1 649.0h1.7M1349.9 640.4h1.7M1340.2 648.4h1.7M1336.8 642.5h1.7M1326.9 641.5h1.7M1348.0 644.3h1.7M1329.7 645.8h1.7M1328.5 644.7h1.7M1348.6 645.8h1.7M1342.9 642.1h1.7M1349.8 647.7h1.7M1335.2 636.3h1.7M1344.2 644.6h1.7M1341.7 643.6h1.7M1326.1 639.0h1.7M1329.5 648.7h1.7M1348.2 638.8h1.7M1336.5 638.3h1.7M1327.7 646.9h1.7M1344.9 644.5h1.7M1344.5 642.8h1.7M1338.5 642.5h1.7M1339.3 641.7h1.7M1348.2 647.9h1.7M1337.8 645.1h1.7M1323.4 639.4h1.7M1332.7 633.0h1.7M1345.2 645.3h1.7M1333.0 642.9h1.7M1338.8 647.3h1.7M1337.6 645.8h1.7M1339.9 644.9h1.7M1348.9 644.7h1.7M1331.8 648.8h1.7M1345.9 645.7h1.7M1331.4 639.7h1.7M1343.4 644.5h1.7M1345.4 646.3h1.7M1332.0 639.2h1.7M1349.7 646.5h1.7M1329.0 634.9h1.7M1336.0 643.1h1.7M1347.5 643.1h1.7M1330.3 650.0h1.7M1327.4 637.3h1.7M1333.7 651.7h1.7M1343.3 647.7h1.7M1342.7 645.0h1.7M1342.7 642.6h1.7M1341.5 647.3h1.7M1342.5 641.1h1.7" stroke="#babd66" stroke-width="1.7" opacity="0.88" fill="none"/><path d="M1316.9 636.1h1.7M1300.5 637.6h1.7M1320.4 639.8h1.7M1312.7 631.9h1.7M1302.3 634.7h1.7M1316.6 633.7h1.7M1315.0 640.6h1.7M1322.3 641.5h1.7M1320.7 632.8h1.7M1310.0 635.8h1.7M1308.5 634.1h1.7M1310.8 635.5h1.7M1309.8 628.2h1.7M1312.2 638.0h1.7M1306.7 635.6h1.7M1309.3 631.6h1.7M1305.1 640.0h1.7M1311.9 641.8h1.7M1321.2 640.7h1.7M1296.7 630.9h1.7M1299.3 642.5h1.7M1308.3 644.7h1.7M1302.8 635.4h1.7M1296.6 633.6h1.7M1314.0 638.3h1.7M1314.3 640.4h1.7M1308.9 640.0h1.7M1319.0 646.5h1.7M1309.0 637.9h1.7M1320.7 646.0h1.7M1306.1 634.8h1.7M1318.9 642.0h1.7M1313.5 642.3h1.7M1298.2 634.4h1.7M1303.4 624.6h1.7M1310.5 636.3h1.7M1299.5 633.5h1.7M1307.8 638.4h1.7M1319.7 632.0h1.7M1305.3 635.8h1.7M1312.9 626.7h1.7M1312.9 643.8h1.7M1298.7 630.7h1.7M1310.7 637.6h1.7M1309.5 632.0h1.7M1321.7 642.9h1.7M1321.9 633.9h1.7M1312.8 646.0h1.7M1316.8 638.6h1.7M1318.3 641.3h1.7M1318.3 647.3h1.7M1307.6 640.7h1.7M1305.6 633.1h1.7M1322.6 639.7h1.7M1315.2 631.9h1.7M1310.5 640.6h1.7M1314.6 637.6h1.7M1318.1 636.8h1.7M1320.6 641.1h1.7M1310.3 630.9h1.7M1322.0 635.5h1.7M1295.4 636.2h1.7M1296.9 629.4h1.7M1322.6 639.6h1.7M1302.5 635.1h1.7M1315.1 645.3h1.7M1318.7 634.0h1.7M1314.5 633.9h1.7M1302.4 644.3h1.7M1320.0 638.6h1.7M1308.7 639.4h1.7M1295.6 634.9h1.7M1317.4 632.8h1.7M1321.6 636.3h1.7M1311.4 638.5h1.7M1308.0 631.3h1.7M1310.2 638.1h1.7M1323.0 635.4h1.7M1297.8 638.0h1.7M1313.3 642.0h1.7M1307.9 629.7h1.7M1308.4 628.1h1.7M1320.0 629.3h1.7M1313.3 638.0h1.7M1298.4 627.6h1.7M1319.4 637.6h1.7M1320.7 638.5h1.7M1303.0 628.8h1.7M1319.8 643.6h1.7M1308.5 637.0h1.7M1302.9 634.2h1.7M1319.2 633.1h1.7M1306.9 640.0h1.7M1318.7 637.4h1.7M1320.7 638.4h1.7M1297.7 637.4h1.7M1311.4 634.2h1.7M1323.2 638.4h1.7M1320.8 637.5h1.7M1314.8 642.4h1.7M1301.2 629.5h1.7M1308.3 641.4h1.7M1303.0 635.4h1.7M1313.8 638.5h1.7M1301.0 631.6h1.7M1304.4 639.0h1.7M1298.8 633.8h1.7M1309.7 630.3h1.7M1299.1 630.4h1.7M1318.1 642.8h1.7M1311.8 638.1h1.7M1307.5 644.2h1.7M1296.3 633.3h1.7M1298.1 628.1h1.7M1303.7 629.8h1.7M1305.7 630.9h1.7M1321.8 639.5h1.7M1316.4 626.6h1.7M1321.4 634.6h1.7M1309.1 636.7h1.7M1315.9 630.1h1.7M1307.4 636.8h1.7M1321.5 640.3h1.7M1316.0 641.8h1.7M1306.9 633.6h1.7M1305.0 637.3h1.7M1320.2 634.8h1.7M1320.8 642.8h1.7M1324.3 632.8h1.7M1304.3 637.4h1.7M1309.9 637.3h1.7M1303.1 642.9h1.7M1310.7 633.7h1.7M1300.5 639.8h1.7M1297.9 632.5h1.7M1301.0 631.2h1.7M1311.2 639.4h1.7M1296.3 633.9h1.7M1301.3 639.1h1.7M1299.9 636.7h1.7M1323.1 629.6h1.7M1300.7 636.1h1.7M1297.3 633.8h1.7M1297.8 633.6h1.7M1323.5 636.3h1.7M1301.7 638.3h1.7M1311.6 644.5h1.7M1306.1 633.8h1.7M1317.5 645.1h1.7M1305.3 636.4h1.7M1298.6 638.3h1.7M1315.3 639.8h1.7M1309.8 633.3h1.7M1311.7 636.2h1.7M1311.3 632.2h1.7M1320.8 643.0h1.7M1295.2 638.7h1.7M1312.9 637.8h1.7M1319.5 643.3h1.7M1301.7 625.2h1.7M1311.3 643.5h1.7M1298.8 634.3h1.7M1303.2 632.0h1.7M1301.9 623.6h1.7M1316.1 636.0h1.7M1299.2 632.4h1.7M1309.9 633.3h1.7M1308.6 630.8h1.7M1311.6 637.6h1.7M1299.1 631.4h1.7M1304.0 636.5h1.7M1307.8 639.4h1.7M1305.9 636.3h1.7M1320.9 643.9h1.7M1323.8 634.9h1.7M1308.5 636.7h1.7M1306.8 643.5h1.7M1298.6 625.4h1.7M1303.8 634.6h1.7M1311.5 638.8h1.7M1316.2 638.2h1.7M1314.0 640.2h1.7M1298.3 637.8h1.7M1307.9 628.5h1.7M1318.9 642.2h1.7M1298.8 636.7h1.7M1314.1 639.2h1.7M1316.2 648.1h1.7M1304.5 637.3h1.7M1315.0 632.3h1.7M1317.0 635.5h1.7M1315.4 645.1h1.7M1313.2 635.9h1.7M1312.1 641.9h1.7M1322.0 638.1h1.7M1311.1 641.6h1.7M1323.1 632.4h1.7M1317.5 636.1h1.7M1307.4 635.9h1.7M1295.9 633.3h1.7M1297.6 634.8h1.7M1310.6 627.4h1.7M1320.3 644.7h1.7M1301.1 632.5h1.7M1320.1 635.5h1.7M1318.5 647.2h1.7M1315.0 634.4h1.7M1301.9 630.1h1.7M1303.6 643.1h1.7M1316.8 632.4h1.7M1320.6 641.7h1.7M1315.0 638.0h1.7M1307.5 633.3h1.7M1299.7 638.3h1.7M1313.2 640.9h1.7M1313.7 625.8h1.7M1311.5 636.4h1.7M1316.7 640.9h1.7M1309.3 638.6h1.7M1323.0 636.9h1.7M1304.9 637.8h1.7M1315.1 643.2h1.7M1304.7 628.3h1.7M1303.1 638.8h1.7M1295.2 637.5h1.7M1296.8 633.0h1.7M1294.4 638.2h1.7M1306.0 628.4h1.7M1302.0 631.9h1.7M1306.6 636.1h1.7M1303.0 641.6h1.7M1304.7 636.5h1.7M1304.8 633.6h1.7M1316.6 636.2h1.7M1317.5 639.4h1.7M1301.6 639.8h1.7M1322.7 638.8h1.7M1307.3 633.0h1.7M1300.0 622.9h1.7M1319.7 639.0h1.7M1312.3 634.7h1.7M1316.6 631.5h1.7M1311.7 640.5h1.7M1309.1 627.8h1.7M1319.2 643.7h1.7M1297.5 636.9h1.7M1299.4 630.7h1.7M1304.7 635.3h1.7M1310.4 636.0h1.7M1314.5 638.4h1.7M1309.4 632.8h1.7M1308.7 633.2h1.7M1304.7 636.0h1.7M1299.5 627.8h1.7M1315.3 639.8h1.7M1305.4 628.5h1.7M1310.7 632.8h1.7M1310.3 638.1h1.7M1316.7 641.5h1.7M1312.6 642.7h1.7M1316.8 637.7h1.7M1311.5 642.0h1.7M1317.2 646.9h1.7M1321.2 637.0h1.7M1319.6 647.7h1.7" stroke="#c4c954" stroke-width="1.7" opacity="0.88" fill="none"/><path d="M1292.5 637.2h1.7M1271.2 629.2h1.7M1277.9 627.4h1.7M1283.5 627.2h1.7M1272.8 628.5h1.7M1279.9 629.5h1.7M1274.1 625.5h1.7M1283.6 640.5h1.7M1272.5 628.8h1.7M1285.9 619.7h1.7M1278.8 627.8h1.7M1289.8 632.3h1.7M1287.5 634.9h1.7M1283.0 637.8h1.7M1289.4 631.3h1.7M1284.8 627.3h1.7M1291.8 634.3h1.7M1290.5 636.7h1.7M1274.7 636.6h1.7M1288.1 629.3h1.7M1268.0 633.9h1.7M1288.2 625.3h1.7M1271.1 633.3h1.7M1289.5 634.7h1.7M1291.6 633.0h1.7M1270.2 635.8h1.7M1270.7 630.7h1.7M1279.9 622.2h1.7M1288.4 635.9h1.7M1275.9 628.1h1.7M1280.6 630.3h1.7M1276.3 631.4h1.7M1293.7 629.6h1.7M1285.1 631.7h1.7M1280.7 629.3h1.7M1286.1 627.7h1.7M1280.3 640.3h1.7M1288.1 636.0h1.7M1276.6 635.4h1.7M1288.7 635.2h1.7M1275.2 623.4h1.7M1274.8 623.9h1.7M1290.4 631.6h1.7M1279.0 630.9h1.7M1291.7 625.9h1.7M1272.3 631.6h1.7M1278.3 628.7h1.7M1292.2 632.6h1.7M1290.9 635.9h1.7M1287.3 631.7h1.7M1285.3 635.3h1.7M1271.6 619.5h1.7M1273.7 631.9h1.7M1295.1 633.4h1.7M1279.6 629.9h1.7M1294.0 626.3h1.7M1295.6 627.8h1.7M1281.2 636.7h1.7M1293.8 628.7h1.7M1276.2 635.2h1.7M1284.0 625.0h1.7M1274.8 627.9h1.7M1273.6 626.6h1.7M1271.1 630.2h1.7M1283.7 628.0h1.7M1274.6 634.3h1.7M1279.5 633.5h1.7M1271.8 625.1h1.7M1269.5 622.9h1.7M1269.8 629.4h1.7M1281.1 632.3h1.7M1287.6 630.9h1.7M1293.2 639.1h1.7M1285.8 629.9h1.7M1278.0 629.2h1.7M1285.2 631.7h1.7M1285.6 633.2h1.7M1288.7 626.8h1.7M1275.4 629.1h1.7M1293.4 630.2h1.7M1269.0 626.4h1.7M1288.6 632.7h1.7M1294.7 632.4h1.7M1295.1 628.6h1.7M1288.7 630.2h1.7M1277.0 633.4h1.7M1280.6 632.9h1.7M1288.2 630.5h1.7M1269.1 624.4h1.7M1291.3 637.8h1.7M1280.2 629.5h1.7M1270.9 619.9h1.7M1278.1 634.6h1.7M1271.9 629.3h1.7M1280.7 622.8h1.7M1273.8 631.9h1.7M1278.3 629.8h1.7M1285.6 635.1h1.7M1276.5 630.6h1.7M1287.2 631.3h1.7M1278.3 630.3h1.7M1285.1 638.0h1.7M1271.1 628.1h1.7M1271.6 623.2h1.7M1286.1 625.7h1.7M1273.6 624.4h1.7M1290.6 638.5h1.7M1289.4 635.3h1.7M1269.9 624.2h1.7M1273.9 619.6h1.7M1292.2 631.0h1.7M1284.3 627.1h1.7M1269.7 629.8h1.7M1279.4 630.2h1.7M1272.8 634.3h1.7M1268.7 626.2h1.7M1285.7 626.9h1.7M1274.1 623.0h1.7M1279.2 632.6h1.7M1269.8 631.5h1.7M1287.1 637.2h1.7M1276.8 626.4h1.7M1287.5 637.5h1.7M1276.7 632.0h1.7M1278.6 627.6h1.7M1287.0 632.5h1.7M1294.2 635.3h1.7M1269.3 627.0h1.7M1283.3 633.3h1.7M1294.3 632.0h1.7M1274.5 633.2h1.7M1272.7 626.4h1.7M1290.2 635.6h1.7M1267.1 636.3h1.7M1272.3 626.7h1.7M1269.8 626.7h1.7M1280.5 629.4h1.7M1287.1 631.2h1.7M1267.2 631.3h1.7M1273.2 626.9h1.7M1282.2 625.5h1.7M1279.7 625.2h1.7M1294.2 631.5h1.7M1292.1 638.8h1.7M1270.9 628.6h1.7M1285.8 638.6h1.7M1291.7 620.6h1.7M1295.3 630.6h1.7M1274.3 628.6h1.7M1285.2 638.5h1.7M1278.8 634.3h1.7M1268.8 624.6h1.7M1279.2 628.6h1.7M1284.6 636.4h1.7M1278.9 633.9h1.7M1275.5 631.4h1.7M1287.3 631.8h1.7M1289.1 633.7h1.7M1281.0 633.6h1.7M1283.6 631.0h1.7M1276.9 625.2h1.7M1285.0 641.1h1.7M1280.0 634.1h1.7M1269.6 625.7h1.7M1277.2 633.4h1.7M1284.5 632.0h1.7M1268.9 629.8h1.7M1291.9 636.6h1.7M1292.3 641.6h1.7M1284.6 626.4h1.7M1267.6 630.2h1.7M1272.8 621.3h1.7M1273.3 623.2h1.7M1291.6 625.6h1.7M1274.6 622.3h1.7M1277.8 628.3h1.7M1267.3 631.4h1.7M1282.4 631.9h1.7M1283.1 628.4h1.7M1279.5 636.3h1.7M1288.5 635.5h1.7M1285.0 632.0h1.7M1287.3 629.3h1.7M1285.2 629.4h1.7M1287.6 631.3h1.7M1290.2 633.3h1.7M1292.3 638.7h1.7M1283.9 630.5h1.7M1285.9 632.2h1.7M1289.4 636.5h1.7M1292.5 625.9h1.7M1291.7 635.2h1.7M1270.6 632.9h1.7M1286.4 624.1h1.7M1281.8 641.5h1.7M1288.9 632.1h1.7M1276.1 630.3h1.7M1272.2 639.0h1.7M1268.6 631.4h1.7M1292.5 629.1h1.7M1288.4 639.0h1.7M1270.0 628.5h1.7M1294.6 635.2h1.7M1289.3 620.6h1.7M1287.7 632.0h1.7M1283.2 638.5h1.7M1295.7 628.5h1.7M1271.5 633.1h1.7M1280.1 629.2h1.7M1272.1 639.6h1.7M1281.7 630.6h1.7M1295.2 633.7h1.7M1282.6 624.5h1.7M1279.8 634.6h1.7M1285.6 633.7h1.7M1276.0 637.0h1.7M1283.6 628.1h1.7M1281.7 635.7h1.7M1283.5 632.3h1.7M1283.2 628.4h1.7M1273.0 630.7h1.7M1274.7 636.3h1.7M1281.9 632.5h1.7M1284.1 631.4h1.7M1273.5 634.4h1.7M1274.0 626.5h1.7M1281.5 628.1h1.7M1269.9 629.5h1.7M1287.3 638.7h1.7M1292.1 629.1h1.7M1288.1 626.5h1.7M1275.4 631.5h1.7M1291.3 623.8h1.7M1288.4 634.1h1.7M1286.3 638.4h1.7M1274.0 635.0h1.7M1291.7 624.6h1.7M1290.6 633.5h1.7M1287.9 628.2h1.7M1279.7 639.7h1.7M1285.8 627.5h1.7M1283.3 624.6h1.7M1284.2 632.7h1.7M1291.3 640.8h1.7M1278.4 629.5h1.7M1270.9 634.2h1.7M1279.2 637.7h1.7M1280.1 631.5h1.7M1267.6 631.5h1.7M1278.7 634.8h1.7M1283.6 636.3h1.7M1279.7 621.7h1.7M1279.3 625.2h1.7M1273.5 630.1h1.7M1276.7 625.6h1.7M1285.8 629.9h1.7M1292.2 637.1h1.7M1278.1 622.9h1.7M1289.0 634.0h1.7M1269.8 621.5h1.7M1287.1 628.7h1.7M1269.9 622.9h1.7M1279.2 639.5h1.7M1276.2 631.1h1.7M1268.1 638.1h1.7M1285.6 638.2h1.7M1276.3 623.5h1.7M1269.6 630.0h1.7M1268.0 626.2h1.7M1288.2 630.8h1.7M1273.6 635.3h1.7M1287.9 638.5h1.7M1278.6 638.1h1.7M1284.7 630.6h1.7M1281.7 626.4h1.7M1281.2 625.4h1.7M1267.4 630.4h1.7M1294.2 635.8h1.7M1285.9 621.2h1.7M1267.9 629.4h1.7M1294.7 629.4h1.7" stroke="#cfd641" stroke-width="1.7" opacity="0.88" fill="none"/><path d="M1248.3 621.6h1.7M1253.7 625.3h1.7M1245.2 623.8h1.7M1265.9 624.0h1.7M1258.4 622.2h1.7M1242.0 613.8h1.7M1261.1 624.8h1.7M1263.7 625.4h1.7M1257.8 628.7h1.7M1253.5 618.3h1.7M1263.1 624.0h1.7M1245.2 628.3h1.7M1249.5 620.1h1.7M1249.4 628.5h1.7M1261.7 622.8h1.7M1252.0 622.1h1.7M1243.9 622.3h1.7M1243.5 619.3h1.7M1252.0 632.3h1.7M1242.6 622.2h1.7M1269.9 616.4h1.7M1266.7 621.3h1.7M1241.2 630.4h1.7M1244.5 621.0h1.7M1266.0 623.4h1.7M1255.0 626.4h1.7M1244.7 622.8h1.7M1263.1 630.4h1.7M1261.5 622.4h1.7M1254.5 624.2h1.7M1251.1 620.8h1.7M1253.6 628.7h1.7M1249.5 617.0h1.7M1260.7 622.1h1.7M1261.6 631.8h1.7M1260.8 633.6h1.7M1264.2 626.0h1.7M1246.7 616.1h1.7M1265.3 629.2h1.7M1255.7 626.6h1.7M1265.6 628.9h1.7M1239.7 627.3h1.7M1256.3 617.6h1.7M1265.8 632.0h1.7M1263.4 615.7h1.7M1264.8 625.2h1.7M1256.4 622.2h1.7M1256.1 626.0h1.7M1255.7 629.9h1.7M1266.6 627.1h1.7M1259.9 629.6h1.7M1243.6 630.5h1.7M1244.4 625.0h1.7M1263.6 626.7h1.7M1244.6 622.7h1.7M1250.6 625.5h1.7M1257.7 623.8h1.7M1244.1 626.5h1.7M1260.7 627.7h1.7M1251.9 629.3h1.7M1254.8 635.3h1.7M1249.1 622.1h1.7M1264.3 619.4h1.7M1246.1 614.0h1.7M1249.9 626.7h1.7M1261.0 629.9h1.7M1252.9 634.8h1.7M1264.2 623.9h1.7M1248.9 623.2h1.7M1263.7 625.0h1.7M1263.2 626.2h1.7M1263.7 631.7h1.7M1257.3 626.3h1.7M1246.5 622.2h1.7M1254.1 612.2h1.7M1254.3 618.0h1.7M1252.6 616.4h1.7M1243.6 617.4h1.7M1244.0 628.7h1.7M1258.8 629.5h1.7M1249.2 622.7h1.7M1244.2 621.5h1.7M1255.8 629.9h1.7M1258.7 618.8h1.7M1243.6 616.9h1.7M1258.9 624.5h1.7M1261.6 622.1h1.7M1250.1 623.7h1.7M1252.6 631.2h1.7M1262.7 633.5h1.7M1241.7 620.6h1.7M1261.8 620.4h1.7M1257.4 629.4h1.7M1239.6 622.6h1.7M1241.8 620.8h1.7M1265.9 617.7h1.7M1252.3 617.3h1.7M1261.0 622.9h1.7M1243.2 617.0h1.7M1251.2 624.8h1.7M1242.8 625.5h1.7M1242.4 620.5h1.7M1264.8 633.7h1.7M1259.0 627.1h1.7M1267.0 625.2h1.7M1266.6 621.9h1.7M1258.5 633.2h1.7M1256.8 627.4h1.7M1260.4 624.7h1.7M1255.6 628.1h1.7M1254.5 635.4h1.7M1260.2 626.6h1.7M1252.4 623.0h1.7M1258.5 616.0h1.7M1254.1 617.9h1.7M1257.7 620.8h1.7M1252.2 622.3h1.7M1245.4 628.5h1.7M1253.8 612.5h1.7M1262.6 625.7h1.7M1248.1 624.3h1.7M1241.4 619.2h1.7M1265.2 619.9h1.7M1262.5 623.9h1.7M1252.1 627.3h1.7M1255.9 631.1h1.7M1253.5 616.3h1.7M1262.5 617.4h1.7M1254.5 630.7h1.7M1267.2 619.2h1.7M1268.3 622.5h1.7M1244.6 610.4h1.7M1246.2 628.5h1.7M1251.9 623.6h1.7M1250.8 620.9h1.7M1242.0 625.1h1.7M1238.1 630.1h1.7M1260.2 616.4h1.7M1249.0 624.2h1.7M1253.8 620.7h1.7M1256.8 620.9h1.7M1247.5 629.3h1.7M1255.6 628.1h1.7M1258.5 626.1h1.7M1241.7 626.1h1.7M1254.3 625.0h1.7M1245.7 626.5h1.7M1241.9 619.5h1.7M1255.8 622.7h1.7M1266.8 620.7h1.7M1254.1 619.0h1.7M1246.7 618.7h1.7M1265.7 632.9h1.7M1245.4 622.4h1.7M1265.7 630.2h1.7M1261.4 628.7h1.7M1258.0 624.1h1.7M1257.3 621.9h1.7M1267.0 629.2h1.7M1266.7 630.7h1.7M1242.8 619.6h1.7M1260.7 620.1h1.7M1265.0 633.8h1.7M1243.4 631.5h1.7M1249.1 622.9h1.7M1243.0 627.6h1.7M1253.0 622.8h1.7M1245.7 630.5h1.7M1263.2 621.7h1.7M1263.7 627.9h1.7M1254.6 628.3h1.7M1245.3 620.6h1.7M1267.8 623.2h1.7M1241.5 620.3h1.7M1243.2 629.4h1.7M1260.7 637.3h1.7M1242.0 622.4h1.7M1248.7 617.3h1.7M1250.1 625.8h1.7M1261.6 620.9h1.7M1254.8 625.6h1.7M1243.0 626.6h1.7M1242.5 620.1h1.7M1241.1 621.1h1.7M1258.0 627.4h1.7M1258.5 623.3h1.7M1243.8 621.5h1.7M1248.0 615.3h1.7M1243.9 628.4h1.7M1245.2 628.6h1.7M1261.3 624.7h1.7M1261.7 619.7h1.7M1247.5 631.8h1.7M1252.5 614.5h1.7M1266.2 626.7h1.7M1259.5 627.9h1.7M1255.3 628.7h1.7M1265.4 617.2h1.7M1260.1 629.7h1.7M1258.1 621.5h1.7M1252.3 627.2h1.7M1243.9 623.8h1.7M1250.9 627.1h1.7M1241.8 631.5h1.7M1253.5 622.5h1.7M1264.5 619.7h1.7M1241.5 632.2h1.7M1242.5 619.7h1.7M1263.9 631.5h1.7M1256.6 621.2h1.7M1246.6 619.6h1.7M1250.1 622.9h1.7M1254.7 631.2h1.7M1242.1 626.8h1.7M1252.6 624.1h1.7M1247.1 626.6h1.7M1248.0 623.4h1.7M1254.6 622.0h1.7M1255.0 625.0h1.7M1257.6 626.6h1.7M1261.7 616.9h1.7M1264.2 626.9h1.7M1263.7 629.7h1.7M1254.1 624.1h1.7M1249.1 626.2h1.7M1264.7 628.0h1.7M1253.3 620.6h1.7M1252.0 618.7h1.7M1258.0 615.0h1.7M1251.7 625.9h1.7M1265.1 630.4h1.7M1260.2 632.6h1.7M1244.2 617.8h1.7M1245.0 624.0h1.7M1250.5 615.7h1.7M1254.1 628.7h1.7M1240.5 624.9h1.7M1253.6 620.9h1.7M1265.9 623.5h1.7M1266.6 619.6h1.7M1243.9 617.7h1.7M1252.9 628.0h1.7M1260.9 636.0h1.7M1247.8 625.6h1.7M1259.2 623.1h1.7M1243.3 624.3h1.7M1246.3 621.0h1.7M1263.2 631.5h1.7M1244.0 630.8h1.7M1265.6 623.1h1.7M1267.1 629.1h1.7M1250.1 617.4h1.7M1249.9 619.4h1.7M1266.2 631.1h1.7M1260.2 631.0h1.7M1264.0 625.8h1.7M1259.4 627.0h1.7M1261.5 627.8h1.7M1248.6 630.7h1.7M1261.2 637.3h1.7M1261.7 625.8h1.7M1255.9 623.7h1.7M1260.6 624.4h1.7M1251.8 629.3h1.7M1265.7 624.3h1.7" stroke="#d4dc38" stroke-width="1.7" opacity="0.88" fill="none"/><path d="M1228.0 624.6h1.7M1219.6 612.3h1.7M1237.4 622.3h1.7M1213.2 623.5h1.7M1234.5 626.9h1.7M1241.0 611.7h1.7M1214.9 613.7h1.7M1223.3 626.7h1.7M1237.1 620.2h1.7M1217.8 610.7h1.7M1227.7 619.5h1.7M1231.6 621.3h1.7M1215.5 619.3h1.7M1236.9 623.9h1.7M1233.7 613.3h1.7M1216.3 615.3h1.7M1213.1 623.5h1.7M1230.5 616.9h1.7M1215.4 612.1h1.7M1229.1 611.5h1.7M1222.6 608.3h1.7M1239.7 612.4h1.7M1223.6 615.6h1.7M1224.7 624.1h1.7M1231.4 609.7h1.7M1236.8 626.3h1.7M1217.2 610.9h1.7M1230.5 613.1h1.7M1230.1 616.2h1.7M1221.3 624.3h1.7M1233.2 611.4h1.7M1225.7 620.2h1.7M1214.7 622.8h1.7M1220.0 614.8h1.7M1238.9 619.5h1.7M1214.3 614.5h1.7M1234.6 631.4h1.7M1226.4 628.3h1.7M1224.1 615.2h1.7M1236.4 625.2h1.7M1217.3 620.9h1.7M1213.5 622.2h1.7M1237.8 623.1h1.7M1225.2 620.7h1.7M1220.6 619.8h1.7M1221.2 619.4h1.7M1222.7 613.4h1.7M1219.2 619.8h1.7M1229.9 622.9h1.7M1226.4 620.4h1.7M1215.4 617.0h1.7M1226.3 619.7h1.7M1230.7 617.6h1.7M1229.2 625.7h1.7M1229.8 616.8h1.7M1237.4 625.3h1.7M1226.0 625.0h1.7M1218.3 618.5h1.7M1225.5 624.4h1.7M1222.2 616.2h1.7M1232.9 613.7h1.7M1230.6 616.1h1.7M1226.8 619.8h1.7M1228.1 606.9h1.7M1227.3 614.2h1.7M1214.8 619.8h1.7M1229.3 615.8h1.7M1217.4 610.5h1.7M1227.3 621.3h1.7M1231.3 618.7h1.7M1215.5 612.9h1.7M1227.5 618.1h1.7M1229.9 615.4h1.7M1227.4 609.5h1.7M1222.4 616.8h1.7M1213.8 616.6h1.7M1217.7 608.6h1.7M1221.0 607.1h1.7M1227.4 613.8h1.7M1228.9 619.7h1.7M1228.9 618.4h1.7M1231.9 612.6h1.7M1218.2 614.8h1.7M1214.6 617.8h1.7M1227.3 617.0h1.7M1228.0 619.0h1.7M1223.6 617.2h1.7M1232.9 620.8h1.7M1216.9 612.8h1.7M1221.2 619.3h1.7M1226.9 621.3h1.7M1229.4 620.2h1.7M1236.8 624.1h1.7M1227.8 618.5h1.7M1230.8 629.6h1.7M1222.6 619.7h1.7M1234.9 608.8h1.7M1232.7 613.7h1.7M1236.9 614.6h1.7M1218.2 617.8h1.7M1226.1 619.3h1.7M1238.6 626.9h1.7M1218.0 616.0h1.7M1229.4 617.1h1.7M1213.7 617.1h1.7M1234.6 615.6h1.7M1218.5 612.8h1.7M1232.9 626.7h1.7M1236.5 625.5h1.7M1234.1 617.1h1.7M1237.2 628.8h1.7M1227.9 619.9h1.7M1225.1 624.9h1.7M1219.9 614.3h1.7M1217.5 623.9h1.7M1230.1 614.4h1.7M1228.7 620.6h1.7M1211.8 621.3h1.7M1235.0 624.0h1.7M1215.0 615.6h1.7M1234.8 620.7h1.7M1241.4 613.3h1.7M1229.2 614.3h1.7M1230.8 606.9h1.7M1226.7 617.1h1.7M1236.5 618.1h1.7M1233.5 616.6h1.7M1213.4 612.1h1.7M1218.9 620.2h1.7M1230.4 624.3h1.7M1237.7 620.6h1.7M1239.3 623.5h1.7M1236.5 629.9h1.7M1218.6 612.3h1.7M1235.3 622.9h1.7M1229.6 614.8h1.7M1226.4 622.9h1.7M1225.7 616.4h1.7M1232.1 619.8h1.7M1239.2 617.5h1.7M1213.7 614.2h1.7M1235.1 630.8h1.7M1224.4 612.4h1.7M1223.0 613.4h1.7M1218.6 617.3h1.7M1222.8 613.9h1.7M1222.1 621.1h1.7M1215.0 615.3h1.7M1228.8 619.4h1.7M1215.3 620.8h1.7M1214.0 616.4h1.7M1219.4 622.3h1.7M1222.2 613.8h1.7M1237.0 611.8h1.7M1213.8 618.3h1.7M1224.3 617.3h1.7M1228.8 620.1h1.7M1237.3 627.2h1.7M1231.3 616.9h1.7M1232.4 622.0h1.7M1225.7 616.2h1.7M1239.7 616.7h1.7M1236.3 624.7h1.7M1215.4 605.7h1.7M1229.6 623.4h1.7M1218.4 617.2h1.7M1233.0 624.6h1.7M1238.0 623.7h1.7M1217.7 614.4h1.7M1215.9 619.9h1.7M1219.9 611.8h1.7M1231.3 625.4h1.7M1236.4 623.1h1.7M1220.7 616.0h1.7M1229.5 611.3h1.7M1236.2 629.8h1.7M1213.7 616.0h1.7M1233.3 624.3h1.7M1227.4 615.6h1.7M1226.4 611.4h1.7M1229.4 619.3h1.7M1224.1 613.9h1.7M1235.5 615.8h1.7M1212.4 615.4h1.7M1226.1 615.9h1.7M1230.7 612.8h1.7M1224.5 625.7h1.7M1218.7 614.1h1.7M1236.8 613.7h1.7M1215.6 621.3h1.7M1217.4 617.2h1.7M1224.1 617.8h1.7M1232.6 622.7h1.7M1233.1 617.6h1.7M1216.7 612.3h1.7M1213.5 610.0h1.7M1231.5 622.9h1.7M1220.1 613.2h1.7M1227.8 613.0h1.7M1219.7 612.1h1.7M1230.4 623.0h1.7M1212.7 613.2h1.7M1224.1 622.3h1.7M1238.4 624.6h1.7M1236.6 619.0h1.7M1218.8 615.4h1.7M1213.0 613.1h1.7M1216.6 615.8h1.7M1238.4 611.6h1.7M1220.5 614.5h1.7M1217.4 616.8h1.7M1215.4 616.8h1.7M1239.2 618.0h1.7M1217.5 623.0h1.7M1235.8 617.8h1.7M1236.1 618.7h1.7M1239.9 618.7h1.7M1218.4 609.6h1.7M1235.5 621.6h1.7M1231.9 615.7h1.7M1230.4 616.2h1.7M1217.8 627.2h1.7M1238.8 611.8h1.7M1218.0 614.7h1.7M1231.1 618.3h1.7M1216.1 608.4h1.7M1222.6 612.2h1.7M1219.2 611.0h1.7M1221.1 609.2h1.7M1217.1 613.8h1.7M1228.9 617.9h1.7M1228.7 615.2h1.7M1240.7 615.0h1.7M1221.0 614.1h1.7M1234.1 611.9h1.7M1217.6 625.0h1.7M1213.0 623.6h1.7M1229.5 616.1h1.7M1229.1 617.4h1.7M1237.8 620.7h1.7M1236.3 621.7h1.7M1236.7 625.6h1.7M1227.9 616.7h1.7M1220.4 615.6h1.7M1225.7 614.0h1.7M1217.0 612.9h1.7M1234.3 623.1h1.7M1228.1 618.1h1.7M1220.8 615.0h1.7M1232.1 613.7h1.7M1235.9 620.6h1.7M1217.4 610.7h1.7M1230.3 614.8h1.7M1216.1 618.4h1.7M1224.7 612.1h1.7M1235.7 618.5h1.7M1217.2 616.3h1.7M1224.3 610.9h1.7M1225.1 614.2h1.7M1224.5 616.3h1.7M1234.3 617.9h1.7M1234.6 623.0h1.7M1237.3 625.1h1.7M1219.4 614.3h1.7M1230.2 620.7h1.7M1220.5 619.1h1.7" stroke="#d4dc38" stroke-width="1.7" opacity="0.88" fill="none"/><path d="M1191.4 612.9h1.7M1209.7 610.7h1.7M1201.1 613.3h1.7M1190.9 612.5h1.7M1197.8 601.1h1.7M1200.6 605.7h1.7M1184.3 611.5h1.7M1208.9 605.0h1.7M1188.9 601.9h1.7M1195.0 611.7h1.7M1200.7 602.5h1.7M1205.6 609.9h1.7M1197.2 611.6h1.7M1192.0 619.1h1.7M1210.8 610.0h1.7M1188.6 610.5h1.7M1196.9 613.5h1.7M1195.5 608.1h1.7M1192.7 604.7h1.7M1187.9 611.6h1.7M1210.9 618.0h1.7M1207.9 614.7h1.7M1191.8 602.0h1.7M1195.6 610.8h1.7M1205.7 619.0h1.7M1206.8 611.1h1.7M1190.1 615.1h1.7M1193.6 599.7h1.7M1186.6 612.5h1.7M1193.5 607.5h1.7M1209.2 621.9h1.7M1205.0 610.4h1.7M1188.4 617.6h1.7M1203.6 605.4h1.7M1198.7 611.1h1.7M1195.8 610.5h1.7M1205.8 625.0h1.7M1204.7 616.6h1.7M1212.1 611.9h1.7M1203.8 613.1h1.7M1205.4 621.5h1.7M1190.5 610.7h1.7M1204.4 617.2h1.7M1187.7 607.2h1.7M1207.0 614.6h1.7M1195.5 601.8h1.7M1199.2 612.9h1.7M1209.2 614.1h1.7M1193.5 613.7h1.7M1189.4 614.2h1.7M1186.7 613.9h1.7M1202.1 613.4h1.7M1198.7 615.6h1.7M1208.2 615.0h1.7M1197.1 612.9h1.7M1202.5 618.3h1.7M1191.3 613.6h1.7M1198.5 609.6h1.7M1195.9 609.5h1.7M1204.3 621.9h1.7M1207.3 617.7h1.7M1198.9 613.4h1.7M1192.1 612.1h1.7M1213.0 609.1h1.7M1207.3 610.0h1.7M1204.8 614.0h1.7M1204.4 620.8h1.7M1208.8 607.9h1.7M1192.3 607.5h1.7M1191.1 611.3h1.7M1192.4 612.2h1.7M1199.8 614.7h1.7M1195.7 611.2h1.7M1189.0 609.5h1.7M1199.4 604.0h1.7M1186.3 611.4h1.7M1200.9 609.7h1.7M1196.7 612.2h1.7M1207.4 610.4h1.7M1204.5 615.7h1.7M1200.9 608.9h1.7M1211.3 618.7h1.7M1212.0 611.7h1.7M1205.8 616.8h1.7M1195.0 610.1h1.7M1199.2 614.3h1.7M1194.2 606.7h1.7M1191.0 612.1h1.7M1185.5 608.0h1.7M1210.4 614.6h1.7M1190.1 608.2h1.7M1189.7 606.7h1.7M1197.1 613.0h1.7M1190.9 604.8h1.7M1197.0 610.0h1.7M1210.7 612.8h1.7M1201.9 614.9h1.7M1198.8 618.0h1.7M1190.5 611.2h1.7M1208.1 614.3h1.7M1199.9 613.3h1.7M1211.0 619.4h1.7M1196.3 608.4h1.7M1200.8 600.0h1.7M1191.8 611.1h1.7M1188.9 608.3h1.7M1191.9 614.5h1.7M1184.7 611.1h1.7M1195.0 614.0h1.7M1196.8 615.0h1.7M1201.6 601.1h1.7M1200.4 617.5h1.7M1190.7 613.5h1.7M1198.2 609.6h1.7M1202.0 618.8h1.7M1212.7 612.0h1.7M1187.9 607.5h1.7M1210.4 610.4h1.7M1194.1 609.0h1.7M1189.6 606.2h1.7M1193.6 607.4h1.7M1209.8 607.2h1.7M1194.2 605.5h1.7M1188.3 612.5h1.7M1205.8 608.3h1.7M1189.1 614.1h1.7M1188.6 604.2h1.7M1200.1 609.9h1.7M1192.0 611.0h1.7M1191.7 617.9h1.7M1200.7 611.7h1.7M1207.1 617.0h1.7M1207.2 613.1h1.7M1198.8 608.6h1.7M1197.3 616.1h1.7M1196.9 614.7h1.7M1185.3 615.3h1.7M1200.3 612.1h1.7M1197.3 612.6h1.7M1188.4 602.7h1.7M1189.5 614.9h1.7M1201.7 608.6h1.7M1192.6 607.8h1.7M1211.0 615.1h1.7M1189.9 610.6h1.7M1187.6 612.9h1.7M1187.3 612.9h1.7M1193.7 613.0h1.7M1209.5 618.0h1.7M1208.2 613.3h1.7M1189.1 602.0h1.7M1188.4 609.9h1.7M1185.0 607.2h1.7M1203.6 619.4h1.7M1205.0 614.9h1.7M1206.4 616.8h1.7M1192.6 608.4h1.7M1188.7 611.4h1.7M1211.9 612.4h1.7M1208.5 604.3h1.7M1189.4 607.9h1.7M1192.0 607.0h1.7M1186.1 614.2h1.7M1189.5 612.3h1.7M1191.5 617.1h1.7M1213.0 609.9h1.7M1201.1 623.9h1.7M1208.3 624.1h1.7M1199.1 615.1h1.7M1203.3 607.9h1.7M1205.8 620.9h1.7M1193.8 614.2h1.7M1195.0 611.0h1.7M1194.4 613.7h1.7M1191.5 610.6h1.7M1188.2 601.0h1.7M1200.6 613.4h1.7M1203.2 608.6h1.7M1208.6 606.5h1.7M1206.7 620.1h1.7M1192.6 613.5h1.7M1204.1 617.2h1.7M1209.5 616.4h1.7M1199.9 619.7h1.7M1199.3 617.3h1.7M1196.0 606.5h1.7M1204.3 614.6h1.7M1199.8 608.6h1.7M1208.0 612.1h1.7M1196.6 611.8h1.7M1209.1 611.7h1.7M1186.3 611.1h1.7M1205.7 613.1h1.7M1186.3 601.9h1.7M1188.1 617.2h1.7M1195.8 605.3h1.7M1211.4 613.7h1.7M1187.2 615.1h1.7M1193.7 607.4h1.7M1204.8 608.4h1.7M1208.3 606.9h1.7M1201.1 612.4h1.7M1204.7 611.3h1.7M1193.9 601.3h1.7M1194.1 614.0h1.7M1195.2 614.4h1.7M1186.2 615.7h1.7M1194.2 615.6h1.7M1206.2 614.4h1.7M1196.7 614.8h1.7M1187.3 607.3h1.7M1195.6 599.6h1.7M1197.4 608.6h1.7M1205.2 610.8h1.7M1186.2 609.2h1.7M1211.8 612.3h1.7M1204.5 619.2h1.7M1196.9 601.4h1.7M1197.4 615.0h1.7M1195.7 619.8h1.7M1199.4 606.7h1.7M1197.5 606.3h1.7M1192.6 599.0h1.7M1187.3 612.8h1.7M1197.7 605.8h1.7M1194.1 604.4h1.7M1185.5 613.2h1.7M1193.2 613.0h1.7M1191.0 608.4h1.7M1188.5 609.0h1.7M1205.2 611.0h1.7M1202.9 610.8h1.7M1188.9 615.0h1.7M1196.8 609.5h1.7M1200.7 605.8h1.7M1191.0 605.4h1.7M1204.7 610.6h1.7M1194.7 605.9h1.7M1194.5 608.7h1.7M1186.9 607.0h1.7M1197.1 612.7h1.7M1206.5 602.4h1.7M1205.6 616.3h1.7M1189.9 612.4h1.7M1193.3 612.5h1.7M1188.3 605.8h1.7M1193.8 609.2h1.7M1199.5 611.4h1.7M1211.8 610.6h1.7M1211.1 611.6h1.7M1194.8 608.4h1.7M1192.1 604.4h1.7M1209.9 607.1h1.7M1185.8 614.8h1.7M1197.8 611.9h1.7M1208.8 619.3h1.7M1189.3 615.1h1.7M1194.5 607.4h1.7M1197.8 611.1h1.7M1185.3 608.3h1.7M1203.9 622.3h1.7M1192.6 611.6h1.7M1184.6 612.9h1.7M1185.0 612.4h1.7M1201.6 616.4h1.7M1200.8 614.0h1.7M1207.7 616.8h1.7M1190.3 598.8h1.7M1209.9 621.7h1.7M1185.2 609.9h1.7M1204.7 603.1h1.7M1186.2 617.3h1.7M1201.4 610.0h1.7M1198.5 618.5h1.7M1205.7 613.2h1.7M1207.1 623.3h1.7M1186.9 618.3h1.7M1198.1 608.6h1.7M1201.9 612.8h1.7M1187.6 611.4h1.7M1208.2 604.1h1.7M1207.5 618.6h1.7M1207.6 609.9h1.7M1195.0 608.4h1.7M1204.6 615.5h1.7M1189.3 611.6h1.7" stroke="#d4dc38" stroke-width="1.7" opacity="0.88" fill="none"/><path d="M1159.3 612.3h1.7M1181.3 604.8h1.7M1181.3 604.5h1.7M1166.8 607.0h1.7M1180.3 612.5h1.7M1178.6 609.0h1.7M1175.6 608.2h1.7M1180.6 608.3h1.7M1156.7 609.0h1.7M1160.8 604.0h1.7M1183.2 606.7h1.7M1157.8 611.5h1.7M1167.6 593.1h1.7M1158.3 606.3h1.7M1166.0 601.7h1.7M1174.4 612.9h1.7M1163.2 599.8h1.7M1170.6 600.1h1.7M1173.7 607.2h1.7M1174.7 607.8h1.7M1168.3 603.4h1.7M1178.2 599.0h1.7M1178.4 610.5h1.7M1166.1 603.4h1.7M1159.8 602.6h1.7M1183.4 606.6h1.7M1169.6 610.4h1.7M1160.3 602.5h1.7M1163.9 605.0h1.7M1162.9 599.7h1.7M1163.7 602.5h1.7M1158.8 607.3h1.7M1160.9 603.8h1.7M1171.4 602.8h1.7M1169.9 601.4h1.7M1169.9 609.0h1.7M1174.1 608.9h1.7M1155.2 612.6h1.7M1164.3 609.8h1.7M1170.8 605.2h1.7M1168.3 603.3h1.7M1179.8 603.5h1.7M1164.6 602.6h1.7M1163.4 599.9h1.7M1166.9 600.0h1.7M1177.6 613.5h1.7M1163.3 612.9h1.7M1172.0 606.3h1.7M1165.6 601.0h1.7M1174.5 597.9h1.7M1165.2 605.9h1.7M1169.7 608.7h1.7M1161.0 601.5h1.7M1178.2 610.9h1.7M1175.1 597.3h1.7M1164.3 593.5h1.7M1183.2 604.2h1.7M1166.0 609.5h1.7M1164.8 608.1h1.7M1181.7 612.6h1.7M1175.5 606.8h1.7M1180.2 602.6h1.7M1166.4 610.0h1.7M1172.7 597.2h1.7M1174.6 614.3h1.7M1164.8 610.5h1.7M1156.0 609.5h1.7M1161.0 599.9h1.7M1171.1 610.0h1.7M1168.4 607.4h1.7M1182.5 601.5h1.7M1179.7 604.9h1.7M1176.2 609.0h1.7M1168.8 605.2h1.7M1181.2 608.6h1.7M1178.9 611.0h1.7M1180.1 605.5h1.7M1173.7 609.2h1.7M1162.4 596.2h1.7M1185.5 601.8h1.7M1174.2 604.5h1.7M1170.3 605.5h1.7M1182.3 606.6h1.7M1172.7 607.9h1.7M1165.9 594.1h1.7M1181.4 615.6h1.7M1159.3 610.9h1.7M1175.7 615.5h1.7M1178.7 607.2h1.7M1159.5 604.9h1.7M1175.7 600.2h1.7M1178.0 615.0h1.7M1169.2 609.0h1.7M1160.4 600.2h1.7M1169.1 601.3h1.7M1170.2 606.1h1.7M1174.7 606.7h1.7M1166.0 604.2h1.7M1174.9 606.9h1.7M1178.2 603.9h1.7M1178.7 599.5h1.7M1180.4 601.9h1.7M1183.0 608.0h1.7M1163.0 609.9h1.7M1171.0 600.3h1.7M1174.6 614.0h1.7M1179.0 605.5h1.7M1172.5 604.8h1.7M1181.8 607.2h1.7M1170.9 599.7h1.7M1184.0 605.1h1.7M1161.5 604.8h1.7M1160.5 606.2h1.7M1174.9 598.8h1.7M1157.8 600.5h1.7M1158.7 602.6h1.7M1183.8 601.5h1.7M1167.8 600.4h1.7M1172.6 612.0h1.7M1156.1 613.1h1.7M1173.6 613.9h1.7M1161.2 595.9h1.7M1166.9 611.1h1.7M1169.8 603.4h1.7M1181.8 609.9h1.7M1181.7 606.7h1.7M1161.3 601.6h1.7M1171.3 604.3h1.7M1173.3 607.1h1.7M1180.9 616.0h1.7M1181.3 607.3h1.7M1184.5 599.1h1.7M1163.0 604.0h1.7M1181.8 607.4h1.7M1182.2 613.0h1.7M1168.2 603.8h1.7M1173.7 604.8h1.7M1164.1 607.2h1.7M1162.2 605.3h1.7M1166.1 600.1h1.7M1183.1 608.5h1.7M1179.6 615.9h1.7M1160.4 605.7h1.7M1177.7 603.3h1.7M1160.7 594.1h1.7M1178.7 604.4h1.7M1158.7 599.6h1.7M1174.7 608.4h1.7M1165.5 599.7h1.7M1169.4 607.6h1.7M1176.9 603.1h1.7M1163.1 610.0h1.7M1179.7 611.6h1.7M1166.4 603.3h1.7M1180.2 611.8h1.7M1173.8 607.5h1.7M1185.6 598.1h1.7M1173.0 608.0h1.7M1173.9 602.5h1.7M1169.3 594.4h1.7M1169.2 610.9h1.7M1163.6 599.4h1.7M1169.6 602.4h1.7M1178.1 610.3h1.7M1158.4 602.4h1.7M1161.2 600.7h1.7M1173.1 601.3h1.7M1170.4 599.4h1.7M1172.4 598.0h1.7M1169.7 594.2h1.7M1174.7 608.3h1.7M1173.5 609.2h1.7M1177.8 611.3h1.7M1166.2 596.0h1.7M1183.5 597.5h1.7M1182.5 603.4h1.7M1180.0 612.2h1.7M1176.4 609.6h1.7M1165.6 601.4h1.7M1157.0 608.5h1.7M1181.0 608.6h1.7M1179.2 616.1h1.7M1168.9 602.9h1.7M1170.1 598.8h1.7M1158.0 608.4h1.7M1183.1 602.6h1.7M1171.3 606.4h1.7M1157.9 608.9h1.7M1158.7 603.6h1.7M1170.2 612.6h1.7M1161.8 595.9h1.7M1175.0 607.3h1.7M1178.8 609.0h1.7M1182.0 612.0h1.7M1155.9 611.1h1.7M1161.7 603.5h1.7M1180.2 603.4h1.7M1160.0 606.4h1.7M1158.5 603.0h1.7M1160.8 600.6h1.7M1181.1 606.5h1.7M1158.0 601.9h1.7M1174.8 603.5h1.7M1182.9 611.9h1.7M1170.1 609.9h1.7M1175.6 606.4h1.7M1180.7 610.3h1.7M1181.6 610.9h1.7M1180.6 605.2h1.7M1181.7 613.9h1.7M1173.5 597.3h1.7M1165.1 609.0h1.7M1175.5 602.9h1.7M1174.6 601.6h1.7M1169.1 609.7h1.7M1182.1 611.0h1.7M1169.7 611.7h1.7M1162.8 604.8h1.7M1181.6 604.8h1.7M1178.9 611.5h1.7M1180.8 610.2h1.7M1167.8 603.9h1.7M1176.5 612.3h1.7M1169.2 600.4h1.7M1174.3 606.1h1.7M1167.3 611.6h1.7M1175.1 605.9h1.7M1182.3 603.9h1.7M1165.0 613.9h1.7M1173.1 611.7h1.7M1178.0 602.4h1.7M1158.3 606.0h1.7M1167.3 604.4h1.7M1165.7 600.1h1.7M1177.8 605.7h1.7M1175.5 615.9h1.7M1162.2 597.8h1.7M1179.3 611.5h1.7M1162.5 606.5h1.7M1167.3 605.9h1.7M1163.9 603.3h1.7M1173.5 609.3h1.7M1168.7 602.8h1.7M1161.6 610.0h1.7M1168.3 604.4h1.7M1180.8 610.1h1.7M1175.8 605.3h1.7M1176.1 606.4h1.7M1181.4 600.9h1.7M1182.5 605.9h1.7M1156.8 606.4h1.7M1158.4 607.6h1.7M1165.2 611.1h1.7M1182.7 608.7h1.7M1175.2 610.5h1.7M1159.9 597.0h1.7M1173.3 607.4h1.7M1174.0 607.0h1.7M1177.3 613.1h1.7M1175.2 604.4h1.7M1174.1 606.4h1.7M1159.1 604.0h1.7M1161.3 603.5h1.7M1171.7 598.0h1.7M1162.2 602.4h1.7M1177.8 607.1h1.7M1159.8 608.3h1.7M1173.8 601.1h1.7M1168.2 602.4h1.7M1162.0 596.5h1.7M1177.7 610.8h1.7M1169.8 599.8h1.7M1164.0 599.6h1.7M1173.8 610.0h1.7M1157.1 610.2h1.7M1164.6 599.5h1.7M1184.0 610.7h1.7M1164.4 601.6h1.7M1180.2 614.5h1.7M1169.3 603.0h1.7M1164.9 599.9h1.7M1181.9 617.2h1.7M1160.6 599.7h1.7M1167.4 603.8h1.7M1175.1 607.7h1.7M1174.9 609.3h1.7M1158.9 600.6h1.7M1157.8 598.7h1.7M1164.0 604.7h1.7" stroke="#d4dc38" stroke-width="1.7" opacity="0.88" fill="none"/><defs><linearGradient id="tg103" gradientUnits="userSpaceOnUse" x1="1386.7" y1="641.4" x2="1344.5" y2="468.3"><stop offset="0" stop-color="#a06e80" stop-opacity="0.25"/><stop offset="1" stop-color="#c41228"/></linearGradient></defs><path d="M1389.6 640.7L1383.4 614.4L1377.2 588.1L1371.0 561.9L1364.7 535.6L1358.5 509.3L1352.3 483.0L1346.1 456.8L1339.9 430.5L1333.7 404.2L1327.5 377.9L1321.3 351.6L1315.0 325.4L1304.8 327.9L1311.4 354.0L1318.0 380.2L1324.6 406.4L1331.2 432.6L1337.7 458.8L1344.3 485.0L1350.9 511.2L1357.5 537.4L1364.0 563.5L1370.6 589.7L1377.2 615.9L1383.8 642.1z" fill="url(#tg103)" opacity="0.34"/><path d="M1378.9 612.2h1.5M1384.0 628.9h1.5M1382.2 629.3h1.5M1386.3 629.9h1.5M1385.6 637.7h1.5M1378.4 610.7h1.5M1379.6 610.1h1.5M1380.2 613.1h1.5M1380.2 612.0h1.5M1381.8 624.6h1.5M1383.3 625.7h1.5M1383.2 623.8h1.5M1380.4 618.5h1.5M1382.8 626.7h1.5M1377.5 611.6h1.5M1382.3 620.6h1.5M1382.0 623.1h1.5M1383.2 634.6h1.5M1384.0 631.7h1.5M1382.6 630.7h1.5M1378.4 611.2h1.5M1384.6 638.2h1.5M1384.2 627.2h1.5M1381.8 619.0h1.5M1380.0 610.6h1.5M1381.5 623.2h1.5M1382.8 624.3h1.5M1382.4 624.1h1.5M1385.9 639.4h1.5M1382.2 611.9h1.5M1381.2 619.1h1.5M1383.4 615.7h1.5M1382.1 620.3h1.5M1377.2 614.9h1.5M1383.0 632.5h1.5M1385.1 628.5h1.5M1383.2 632.5h1.5M1380.4 614.7h1.5M1384.0 622.4h1.5M1381.0 622.1h1.5M1384.6 640.6h1.5M1378.5 611.2h1.5M1381.7 620.2h1.5M1381.9 634.2h1.5M1382.9 618.7h1.5M1385.0 641.0h1.5M1384.9 631.4h1.5M1381.9 620.5h1.5M1379.1 616.2h1.5M1383.2 624.7h1.5M1383.2 622.5h1.5M1380.4 620.3h1.5M1384.0 629.3h1.5M1383.2 630.4h1.5M1379.7 615.4h1.5M1381.5 614.3h1.5M1380.5 616.5h1.5" stroke="#a36678" stroke-width="1.5" opacity="0.8" fill="none"/><path d="M1371.7 583.7h1.5M1380.5 609.2h1.5M1377.3 602.4h1.5M1376.6 604.1h1.5M1374.9 595.1h1.5M1371.8 588.9h1.5M1373.9 579.7h1.5M1377.7 604.5h1.5M1376.5 597.2h1.5M1373.0 589.1h1.5M1373.3 588.9h1.5M1372.3 587.8h1.5M1377.2 605.0h1.5M1375.4 588.8h1.5M1371.8 581.9h1.5M1376.9 594.2h1.5M1373.4 597.6h1.5M1378.4 608.5h1.5M1379.1 609.3h1.5M1374.1 596.1h1.5M1376.4 594.0h1.5M1372.8 599.3h1.5M1372.8 590.7h1.5M1377.2 591.9h1.5M1373.3 584.1h1.5M1372.2 579.3h1.5M1370.4 584.2h1.5M1376.2 606.8h1.5M1373.2 591.1h1.5M1373.5 587.4h1.5M1376.8 594.1h1.5M1376.6 595.8h1.5M1372.0 582.8h1.5M1380.1 608.6h1.5M1374.3 590.5h1.5M1374.4 595.2h1.5M1376.3 591.1h1.5M1379.6 607.6h1.5M1371.3 584.3h1.5M1372.1 582.9h1.5M1375.4 595.1h1.5M1376.5 597.7h1.5M1375.9 588.4h1.5M1376.8 603.1h1.5M1373.6 595.4h1.5M1375.4 593.7h1.5M1373.4 581.3h1.5M1372.7 591.5h1.5M1375.3 597.2h1.5M1375.6 585.4h1.5M1373.7 588.3h1.5M1372.7 580.4h1.5M1377.4 604.8h1.5M1374.9 587.4h1.5M1372.3 588.2h1.5M1372.3 581.1h1.5M1378.7 606.4h1.5M1375.4 597.5h1.5M1374.9 585.2h1.5M1375.9 600.0h1.5M1375.3 593.0h1.5M1372.0 582.0h1.5M1375.5 590.4h1.5M1375.7 587.1h1.5M1373.6 594.4h1.5M1379.2 606.1h1.5M1376.9 592.0h1.5M1375.8 588.5h1.5M1377.2 602.4h1.5M1376.1 598.2h1.5M1374.0 581.9h1.5M1374.9 588.3h1.5M1379.6 603.9h1.5M1378.0 605.5h1.5M1372.9 584.9h1.5M1375.7 592.7h1.5M1371.6 584.1h1.5M1371.7 584.8h1.5M1371.5 581.3h1.5M1376.6 591.0h1.5M1373.4 579.0h1.5M1378.2 609.7h1.5M1373.2 589.1h1.5M1372.5 596.1h1.5M1378.6 608.0h1.5M1373.6 582.7h1.5M1371.9 582.1h1.5M1371.2 579.3h1.5M1377.7 604.3h1.5M1374.7 585.8h1.5M1369.8 585.5h1.5M1373.6 591.4h1.5M1375.4 597.0h1.5M1370.6 587.9h1.5M1373.5 579.9h1.5M1375.6 587.7h1.5M1374.2 596.8h1.5M1372.9 584.6h1.5M1373.4 591.4h1.5" stroke="#aa5568" stroke-width="1.5" opacity="0.8" fill="none"/><path d="M1371.3 577.1h1.5M1369.5 560.9h1.5M1364.3 549.4h1.5M1370.7 577.7h1.5M1367.2 554.7h1.5M1364.9 559.0h1.5M1369.7 570.9h1.5M1367.0 557.4h1.5M1370.2 576.9h1.5M1364.4 547.2h1.5M1361.1 547.6h1.5M1368.6 578.6h1.5M1369.0 573.2h1.5M1366.5 551.4h1.5M1367.0 547.2h1.5M1368.0 560.1h1.5M1371.3 574.5h1.5M1367.6 553.3h1.5M1372.8 574.8h1.5M1366.9 554.6h1.5M1370.8 567.8h1.5M1368.7 568.1h1.5M1365.4 557.1h1.5M1368.3 574.9h1.5M1365.9 566.0h1.5M1364.4 561.3h1.5M1369.1 568.6h1.5M1366.4 556.8h1.5M1366.9 556.8h1.5M1369.4 567.9h1.5M1369.1 560.8h1.5M1368.8 571.8h1.5M1368.0 563.2h1.5M1364.2 549.6h1.5M1364.8 560.2h1.5M1368.2 559.1h1.5M1368.6 567.4h1.5M1369.8 568.4h1.5M1367.1 566.2h1.5M1364.9 552.6h1.5M1371.3 572.8h1.5M1370.5 567.9h1.5M1369.2 572.8h1.5M1366.5 561.4h1.5M1369.9 570.6h1.5M1370.2 565.3h1.5M1363.5 555.6h1.5M1370.9 569.9h1.5M1366.0 556.6h1.5M1372.3 575.2h1.5M1365.6 559.9h1.5M1365.9 549.7h1.5M1367.6 551.3h1.5M1366.2 560.5h1.5M1368.6 558.1h1.5M1363.2 555.0h1.5M1363.7 550.4h1.5M1368.6 565.3h1.5M1363.6 551.5h1.5M1365.7 555.4h1.5M1369.4 563.7h1.5M1366.2 565.0h1.5M1369.5 578.8h1.5M1364.3 563.3h1.5M1363.3 548.8h1.5M1368.4 571.2h1.5M1366.0 555.2h1.5M1368.4 557.5h1.5M1362.8 555.5h1.5M1364.2 553.7h1.5M1370.9 571.1h1.5M1369.7 572.0h1.5M1365.6 556.5h1.5M1367.3 552.6h1.5M1366.7 557.5h1.5M1366.9 565.3h1.5M1362.7 550.8h1.5M1370.7 570.5h1.5M1366.8 557.4h1.5M1371.7 577.6h1.5M1370.0 563.3h1.5M1361.2 549.5h1.5M1369.1 578.4h1.5M1368.4 569.0h1.5M1366.1 568.7h1.5M1361.6 550.3h1.5M1370.3 576.6h1.5M1361.2 547.8h1.5M1365.9 565.0h1.5M1365.2 552.0h1.5M1366.0 561.3h1.5M1367.5 551.9h1.5M1367.3 554.9h1.5M1364.3 555.4h1.5M1363.3 550.6h1.5M1367.2 561.7h1.5M1367.4 556.9h1.5M1366.7 558.8h1.5M1366.1 563.9h1.5M1366.2 554.3h1.5M1370.6 577.5h1.5M1371.3 573.4h1.5M1367.1 551.9h1.5M1370.0 565.5h1.5M1372.0 573.8h1.5M1366.7 557.1h1.5M1364.3 552.3h1.5M1367.6 563.7h1.5M1372.7 574.4h1.5M1371.0 570.1h1.5M1367.8 567.2h1.5" stroke="#b04458" stroke-width="1.5" opacity="0.8" fill="none"/><path d="M1363.1 540.5h1.5M1361.5 543.1h1.5M1359.3 524.3h1.5M1361.9 539.6h1.5M1358.5 536.3h1.5M1363.9 541.7h1.5M1364.5 546.6h1.5M1357.5 521.0h1.5M1360.2 530.0h1.5M1359.7 535.0h1.5M1361.3 544.9h1.5M1360.8 544.4h1.5M1357.2 517.5h1.5M1362.3 545.8h1.5M1356.9 521.4h1.5M1361.2 540.1h1.5M1363.0 537.9h1.5M1361.8 545.6h1.5M1360.2 538.1h1.5M1354.9 518.0h1.5M1363.7 546.8h1.5M1357.8 520.6h1.5M1360.9 534.5h1.5M1362.2 535.4h1.5M1355.8 520.6h1.5M1357.3 515.9h1.5M1362.5 533.6h1.5M1364.1 544.7h1.5M1360.6 536.6h1.5M1358.3 531.7h1.5M1361.2 533.3h1.5M1356.5 529.5h1.5M1360.9 537.6h1.5M1365.4 542.9h1.5M1361.4 531.3h1.5M1354.8 517.2h1.5M1357.8 526.5h1.5M1356.1 521.5h1.5M1360.3 536.0h1.5M1361.8 542.1h1.5M1358.9 541.2h1.5M1358.2 518.2h1.5M1358.7 519.1h1.5M1361.1 547.4h1.5M1357.9 523.9h1.5M1356.4 519.3h1.5M1362.2 543.1h1.5M1363.7 544.3h1.5M1360.1 522.7h1.5M1365.7 542.4h1.5M1361.4 541.0h1.5M1359.5 531.3h1.5M1357.4 524.9h1.5M1362.8 534.2h1.5M1357.4 518.3h1.5M1357.3 523.8h1.5M1355.7 528.9h1.5M1357.7 527.7h1.5M1365.8 544.4h1.5M1359.0 527.3h1.5M1364.8 537.5h1.5M1353.8 520.0h1.5M1360.4 538.4h1.5M1362.0 546.8h1.5M1357.2 521.2h1.5M1353.9 520.2h1.5M1355.9 521.6h1.5M1361.9 545.2h1.5M1364.0 541.1h1.5M1357.4 520.7h1.5M1363.0 547.0h1.5M1361.0 537.0h1.5M1360.6 528.1h1.5M1357.1 527.6h1.5M1365.0 544.2h1.5M1357.5 530.2h1.5M1359.8 535.4h1.5M1361.5 534.3h1.5M1363.1 531.0h1.5M1362.7 546.6h1.5M1357.4 520.4h1.5M1363.1 544.8h1.5M1360.3 536.8h1.5M1358.5 525.5h1.5M1355.3 515.8h1.5M1363.7 537.6h1.5M1363.0 541.5h1.5M1360.3 533.7h1.5M1363.9 545.3h1.5M1359.8 530.7h1.5M1356.3 520.3h1.5M1364.2 544.3h1.5M1357.5 516.7h1.5M1364.8 539.5h1.5M1358.1 527.3h1.5M1361.4 540.4h1.5M1358.5 523.4h1.5M1362.3 535.1h1.5M1359.0 535.1h1.5M1356.4 525.7h1.5M1361.5 527.4h1.5M1362.8 544.1h1.5M1360.1 520.1h1.5M1363.2 543.4h1.5M1362.1 534.2h1.5M1357.0 517.7h1.5M1362.6 536.7h1.5M1352.9 519.3h1.5M1359.3 530.3h1.5M1360.1 518.9h1.5M1359.9 529.5h1.5M1356.8 515.5h1.5M1359.9 532.3h1.5M1355.0 517.4h1.5M1362.2 540.5h1.5M1358.9 538.3h1.5M1364.3 544.3h1.5M1359.1 529.2h1.5M1361.4 533.3h1.5M1359.2 537.9h1.5M1356.9 524.4h1.5M1360.7 527.2h1.5M1362.9 540.0h1.5M1354.7 522.9h1.5M1360.9 529.8h1.5M1360.3 538.6h1.5M1356.3 515.4h1.5M1356.2 523.5h1.5M1354.2 516.2h1.5" stroke="#b73348" stroke-width="1.5" opacity="0.8" fill="none"/><path d="M1347.0 488.0h1.5M1352.0 483.2h1.5M1349.8 503.2h1.5M1350.0 488.1h1.5M1357.6 514.4h1.5M1350.3 494.2h1.5M1358.8 514.8h1.5M1355.9 497.8h1.5M1353.5 508.3h1.5M1357.9 512.0h1.5M1353.7 500.3h1.5M1352.8 497.6h1.5M1348.5 496.7h1.5M1352.9 510.1h1.5M1355.2 508.2h1.5M1347.7 490.1h1.5M1346.6 485.7h1.5M1355.7 500.9h1.5M1356.0 502.7h1.5M1351.3 496.0h1.5M1355.3 512.0h1.5M1351.5 502.1h1.5M1354.2 508.6h1.5M1354.5 509.9h1.5M1350.8 488.8h1.5M1351.9 505.2h1.5M1356.1 503.4h1.5M1352.8 488.9h1.5M1352.7 500.5h1.5M1352.1 509.1h1.5M1350.4 489.2h1.5M1351.2 501.7h1.5M1356.5 510.5h1.5M1353.3 493.4h1.5M1353.4 498.8h1.5M1350.8 502.7h1.5M1350.8 492.9h1.5M1353.5 505.2h1.5M1358.0 508.7h1.5M1351.1 495.2h1.5M1350.0 485.6h1.5M1347.7 490.3h1.5M1351.6 488.1h1.5M1348.9 500.8h1.5M1350.1 502.3h1.5M1346.6 485.9h1.5M1345.0 489.7h1.5M1354.9 500.5h1.5M1354.4 510.1h1.5M1354.6 511.3h1.5M1349.9 490.7h1.5M1355.0 510.1h1.5M1350.5 489.7h1.5M1352.6 500.2h1.5M1348.6 489.8h1.5M1352.7 502.6h1.5M1352.0 510.2h1.5M1348.7 498.6h1.5M1351.2 490.6h1.5M1350.2 493.3h1.5M1349.6 496.9h1.5M1355.9 510.5h1.5M1356.9 512.8h1.5M1347.0 485.6h1.5M1351.8 501.6h1.5M1348.3 497.9h1.5M1352.7 493.6h1.5M1354.1 499.1h1.5M1355.8 509.7h1.5M1358.4 508.1h1.5M1350.4 502.7h1.5M1348.2 489.9h1.5M1350.7 509.9h1.5M1352.6 503.4h1.5M1352.7 496.9h1.5M1348.1 486.8h1.5M1350.0 494.0h1.5M1352.6 498.6h1.5M1351.2 499.0h1.5M1350.7 492.4h1.5M1349.2 488.3h1.5M1356.8 513.0h1.5M1351.3 499.9h1.5M1347.1 486.1h1.5M1350.3 492.2h1.5M1352.0 497.5h1.5M1345.9 485.7h1.5M1346.6 488.3h1.5M1355.1 497.3h1.5M1350.5 498.2h1.5M1352.4 488.8h1.5M1351.9 499.8h1.5M1353.7 509.9h1.5M1350.2 490.3h1.5M1348.2 499.9h1.5M1346.9 486.5h1.5M1348.1 492.2h1.5M1350.7 497.8h1.5M1352.3 496.4h1.5M1359.0 510.2h1.5M1355.9 514.7h1.5M1352.5 495.6h1.5M1359.3 512.2h1.5M1348.6 495.1h1.5M1353.5 506.8h1.5M1354.2 490.0h1.5M1354.6 512.0h1.5M1349.6 487.3h1.5M1354.1 508.4h1.5M1351.9 494.5h1.5M1356.2 513.0h1.5M1349.0 496.0h1.5M1354.9 496.6h1.5M1351.8 485.4h1.5M1351.1 498.2h1.5M1353.8 497.2h1.5M1347.6 484.9h1.5M1352.9 506.4h1.5M1351.9 492.0h1.5M1355.4 510.2h1.5M1353.4 505.5h1.5M1350.2 493.8h1.5M1353.0 506.1h1.5M1351.2 508.2h1.5M1350.2 508.3h1.5M1348.7 486.2h1.5M1348.5 484.4h1.5M1345.5 484.9h1.5M1354.9 512.3h1.5M1351.1 492.7h1.5M1352.0 514.5h1.5M1353.5 513.9h1.5M1350.8 512.6h1.5M1356.8 512.2h1.5M1348.5 492.0h1.5M1348.9 491.5h1.5M1351.3 495.8h1.5M1353.5 502.4h1.5M1352.8 505.7h1.5M1348.3 489.7h1.5M1351.8 512.6h1.5M1357.6 513.8h1.5M1352.5 498.7h1.5" stroke="#bd2338" stroke-width="1.5" opacity="0.8" fill="none"/><path d="M1344.7 453.3h1.5M1343.8 475.0h1.5M1347.4 468.2h1.5M1344.6 467.7h1.5M1348.9 480.6h1.5M1346.1 479.2h1.5M1339.6 454.5h1.5M1346.6 483.5h1.5M1339.0 457.3h1.5M1345.0 471.8h1.5M1341.2 458.9h1.5M1343.2 454.0h1.5M1343.8 465.4h1.5M1350.4 478.2h1.5M1348.4 482.3h1.5M1345.8 464.7h1.5M1347.9 480.3h1.5M1339.4 454.2h1.5M1343.1 460.4h1.5M1339.0 460.7h1.5M1339.5 458.1h1.5M1339.6 457.3h1.5M1344.7 469.9h1.5M1340.2 456.1h1.5M1345.2 477.8h1.5M1344.1 466.5h1.5M1344.7 478.8h1.5M1343.8 469.1h1.5M1348.2 480.2h1.5M1340.9 462.3h1.5M1344.1 463.7h1.5M1349.2 481.6h1.5M1344.2 478.3h1.5M1344.3 469.7h1.5M1343.0 471.8h1.5M1341.4 463.0h1.5M1339.3 459.1h1.5M1347.9 482.2h1.5M1343.8 455.5h1.5M1343.5 459.5h1.5M1350.4 473.4h1.5M1340.4 457.4h1.5M1347.4 481.6h1.5M1341.7 465.9h1.5M1346.2 479.0h1.5M1341.8 455.1h1.5M1344.8 465.3h1.5M1340.2 458.0h1.5M1340.8 460.2h1.5M1344.9 458.9h1.5M1343.0 457.2h1.5M1339.8 453.7h1.5M1344.5 463.9h1.5M1342.4 464.6h1.5M1348.4 478.0h1.5M1346.7 482.3h1.5M1344.0 457.2h1.5M1346.0 478.3h1.5M1345.4 471.7h1.5M1343.8 457.1h1.5M1347.6 476.0h1.5M1344.7 473.3h1.5M1342.9 457.6h1.5M1344.6 465.2h1.5M1348.1 475.2h1.5M1345.5 478.5h1.5M1342.8 471.7h1.5M1340.8 460.7h1.5M1341.1 466.4h1.5M1347.7 478.8h1.5M1341.1 458.0h1.5M1346.5 478.4h1.5M1342.2 459.6h1.5M1343.4 463.7h1.5M1343.7 472.2h1.5M1343.8 456.6h1.5M1346.7 471.6h1.5M1347.1 477.6h1.5M1340.7 460.7h1.5M1346.7 478.1h1.5M1345.5 454.0h1.5M1345.2 477.2h1.5M1338.9 456.1h1.5M1342.0 461.7h1.5M1345.1 467.5h1.5M1347.4 479.4h1.5M1349.7 475.8h1.5M1345.5 462.0h1.5M1345.8 476.7h1.5M1345.3 474.6h1.5M1343.9 462.7h1.5M1348.4 471.6h1.5M1342.0 462.9h1.5M1339.8 459.1h1.5M1347.2 465.4h1.5M1349.7 474.5h1.5M1341.5 466.7h1.5M1350.6 475.4h1.5M1345.9 469.5h1.5M1346.7 476.0h1.5M1347.9 482.4h1.5M1341.3 462.9h1.5M1344.0 476.9h1.5M1343.4 478.5h1.5M1342.9 464.5h1.5M1346.4 476.5h1.5M1346.8 476.7h1.5M1347.0 477.1h1.5M1347.3 481.2h1.5M1343.9 477.0h1.5M1344.8 467.6h1.5M1341.5 470.1h1.5M1344.0 469.0h1.5M1346.6 478.7h1.5M1344.2 462.4h1.5M1341.7 457.1h1.5M1343.2 456.6h1.5M1345.7 455.0h1.5M1346.8 484.1h1.5M1349.1 480.1h1.5M1351.4 481.2h1.5M1348.2 475.1h1.5M1345.7 470.6h1.5M1345.8 469.2h1.5M1346.8 484.2h1.5M1346.5 478.4h1.5M1346.0 478.8h1.5M1342.9 452.4h1.5M1347.3 480.2h1.5M1340.1 458.0h1.5M1341.9 468.0h1.5M1349.0 468.8h1.5" stroke="#c41228" stroke-width="1.5" opacity="0.8" fill="none"/><path d="M1338.6 442.9h1.5M1336.4 440.9h1.5M1336.5 437.2h1.5M1336.0 422.0h1.5M1331.8 432.8h1.5M1334.6 425.4h1.5M1337.5 435.9h1.5M1336.4 442.4h1.5M1333.3 422.8h1.5M1340.4 451.1h1.5M1333.5 428.4h1.5M1338.1 452.8h1.5M1332.6 427.4h1.5M1331.8 422.4h1.5M1339.9 451.6h1.5M1336.0 430.9h1.5M1331.1 431.4h1.5M1334.4 422.0h1.5M1341.1 446.5h1.5M1334.0 423.1h1.5M1335.3 436.0h1.5M1336.6 434.7h1.5M1340.6 446.9h1.5M1332.9 423.8h1.5M1337.6 431.1h1.5M1333.6 440.9h1.5M1341.5 451.1h1.5M1340.2 449.4h1.5M1341.2 451.7h1.5M1341.4 438.0h1.5M1334.3 432.2h1.5M1335.5 427.8h1.5M1335.2 440.2h1.5M1337.6 440.1h1.5M1334.3 421.7h1.5M1330.3 429.7h1.5M1343.1 450.4h1.5M1334.2 435.7h1.5M1337.0 437.1h1.5M1338.4 422.9h1.5M1340.5 448.0h1.5M1337.1 430.5h1.5M1336.1 435.5h1.5M1339.4 438.9h1.5M1340.3 447.9h1.5M1335.5 431.1h1.5M1335.0 425.0h1.5M1336.6 438.5h1.5M1337.2 436.9h1.5M1336.2 435.6h1.5M1340.9 451.3h1.5M1333.9 422.3h1.5M1336.0 433.5h1.5M1338.3 435.7h1.5M1337.8 435.5h1.5M1333.0 425.5h1.5M1336.3 427.7h1.5M1341.2 451.2h1.5M1337.3 440.3h1.5M1337.9 441.6h1.5M1330.1 430.1h1.5M1343.0 450.5h1.5M1333.2 425.7h1.5M1336.1 428.5h1.5M1341.3 445.1h1.5M1336.2 438.8h1.5M1336.9 440.8h1.5M1339.2 449.9h1.5M1336.8 443.9h1.5M1339.3 444.0h1.5M1333.3 423.4h1.5M1339.0 447.5h1.5M1337.5 435.9h1.5M1335.2 433.0h1.5M1337.2 436.1h1.5M1341.5 443.3h1.5M1333.8 427.9h1.5M1339.1 440.4h1.5M1338.5 436.9h1.5M1337.6 423.4h1.5M1340.1 441.0h1.5M1339.5 435.3h1.5M1335.3 430.3h1.5M1337.5 436.0h1.5M1335.0 438.2h1.5M1331.9 427.0h1.5M1336.3 432.3h1.5M1338.2 438.4h1.5M1331.2 428.4h1.5M1339.2 441.2h1.5M1337.1 425.0h1.5M1339.9 451.1h1.5M1337.8 430.1h1.5M1339.7 443.6h1.5M1338.2 441.4h1.5M1338.1 448.7h1.5M1340.7 451.4h1.5M1329.0 422.6h1.5M1340.6 448.1h1.5M1340.6 449.7h1.5M1338.2 445.5h1.5M1336.3 443.4h1.5M1340.9 451.1h1.5M1339.0 446.2h1.5M1336.3 421.4h1.5M1342.8 449.9h1.5M1338.5 443.1h1.5M1340.1 442.5h1.5M1331.3 430.8h1.5M1341.5 450.0h1.5M1338.5 447.7h1.5M1341.0 447.3h1.5M1330.6 431.7h1.5M1335.4 433.8h1.5M1335.9 441.1h1.5M1336.1 440.3h1.5M1337.3 434.2h1.5M1336.9 433.8h1.5M1332.3 428.1h1.5M1333.6 430.9h1.5M1332.7 426.1h1.5M1333.4 421.6h1.5M1337.6 443.5h1.5M1332.9 427.5h1.5M1336.8 436.1h1.5M1336.4 448.9h1.5M1339.8 446.1h1.5M1339.3 452.8h1.5M1334.9 428.7h1.5M1339.5 445.1h1.5M1337.6 446.2h1.5M1342.0 444.9h1.5M1338.4 439.7h1.5" stroke="#c41228" stroke-width="1.5" opacity="0.8" fill="none"/><path d="M1333.1 417.2h1.5M1335.1 415.4h1.5M1328.5 411.4h1.5M1330.8 412.4h1.5M1331.2 410.6h1.5M1331.3 414.8h1.5M1329.7 403.3h1.5M1329.5 411.5h1.5M1327.3 403.8h1.5M1329.2 405.9h1.5M1326.6 402.2h1.5M1328.5 396.7h1.5M1332.1 406.1h1.5M1327.9 398.1h1.5M1326.6 407.9h1.5M1331.6 414.9h1.5M1325.8 399.5h1.5M1325.2 394.1h1.5M1325.6 401.0h1.5M1325.8 395.9h1.5M1324.8 393.0h1.5M1325.6 390.0h1.5M1322.1 393.8h1.5M1330.9 410.9h1.5M1325.5 393.9h1.5M1325.9 395.9h1.5M1325.1 406.9h1.5M1327.0 402.4h1.5M1327.9 400.2h1.5M1327.6 391.1h1.5M1328.6 401.4h1.5M1328.9 411.2h1.5M1330.6 407.0h1.5M1327.0 397.1h1.5M1328.9 415.5h1.5M1325.5 395.6h1.5M1333.3 410.3h1.5M1324.1 400.2h1.5M1324.5 392.2h1.5M1329.2 402.3h1.5M1328.0 403.3h1.5M1328.0 410.5h1.5M1329.6 396.5h1.5M1327.4 397.6h1.5M1329.0 419.6h1.5M1332.4 417.1h1.5M1323.7 392.1h1.5M1328.0 399.7h1.5M1332.0 408.2h1.5M1328.3 413.8h1.5M1333.4 409.9h1.5M1327.4 401.4h1.5M1325.4 406.4h1.5M1329.2 397.3h1.5M1324.3 404.1h1.5M1326.8 393.2h1.5M1333.9 412.3h1.5M1334.9 412.0h1.5M1326.8 406.0h1.5M1328.1 400.6h1.5M1331.3 405.5h1.5M1327.3 397.7h1.5M1326.3 400.6h1.5M1329.5 412.8h1.5M1335.7 419.3h1.5M1325.1 404.7h1.5M1327.4 402.7h1.5M1329.2 395.8h1.5M1333.6 410.5h1.5M1327.2 413.8h1.5M1324.1 395.4h1.5M1324.8 402.3h1.5M1324.5 390.9h1.5M1331.1 416.8h1.5M1328.6 415.0h1.5M1328.7 395.3h1.5M1333.0 410.8h1.5M1330.8 420.3h1.5M1333.3 409.9h1.5M1327.6 397.1h1.5M1330.6 405.8h1.5M1324.9 396.6h1.5M1333.9 415.7h1.5M1329.5 410.9h1.5M1332.9 411.5h1.5M1326.8 397.6h1.5M1329.7 419.5h1.5M1332.7 420.2h1.5M1328.0 407.5h1.5M1324.5 396.4h1.5M1327.8 405.9h1.5M1328.4 401.3h1.5M1334.2 420.1h1.5M1332.1 416.5h1.5M1331.8 412.6h1.5M1328.0 396.1h1.5M1327.6 398.2h1.5M1323.8 403.1h1.5M1321.9 394.5h1.5M1332.4 405.8h1.5M1331.2 420.8h1.5M1327.9 399.5h1.5M1325.8 401.6h1.5M1332.6 418.5h1.5M1329.4 405.7h1.5M1324.4 401.6h1.5M1334.5 412.2h1.5M1327.1 400.3h1.5M1328.2 402.2h1.5M1328.6 401.7h1.5M1335.2 418.9h1.5M1329.2 409.4h1.5M1334.5 419.1h1.5M1325.1 406.4h1.5M1326.4 396.4h1.5M1328.3 403.5h1.5M1332.0 419.0h1.5M1329.9 404.3h1.5M1329.7 405.4h1.5M1332.1 413.3h1.5M1332.6 415.4h1.5M1326.9 390.3h1.5M1321.8 397.7h1.5M1331.9 413.4h1.5M1331.9 417.2h1.5M1329.3 398.1h1.5M1328.3 396.5h1.5M1327.6 396.1h1.5M1325.8 406.8h1.5M1328.0 398.1h1.5M1329.3 414.7h1.5M1325.2 399.1h1.5M1327.8 390.6h1.5M1325.5 397.8h1.5M1329.9 405.8h1.5M1330.1 419.6h1.5M1328.7 405.5h1.5M1326.9 396.7h1.5M1328.9 396.5h1.5M1327.5 398.3h1.5M1334.3 418.4h1.5M1334.0 416.2h1.5M1335.7 413.0h1.5M1329.0 399.0h1.5M1330.6 409.6h1.5M1328.5 410.2h1.5M1326.8 405.8h1.5M1334.9 416.9h1.5M1333.5 420.1h1.5M1329.3 417.1h1.5M1329.3 408.6h1.5M1332.2 415.8h1.5M1327.5 403.5h1.5M1326.5 407.3h1.5" stroke="#c41228" stroke-width="1.5" opacity="0.8" fill="none"/><path d="M1320.9 361.8h1.5M1322.9 376.0h1.5M1323.0 387.3h1.5M1325.0 386.9h1.5M1317.2 365.6h1.5M1324.7 379.9h1.5M1322.4 378.9h1.5M1327.0 379.4h1.5M1322.7 386.1h1.5M1323.6 379.4h1.5M1323.4 384.7h1.5M1323.9 386.0h1.5M1319.7 369.6h1.5M1323.6 387.6h1.5M1319.6 363.7h1.5M1318.9 372.9h1.5M1318.8 361.5h1.5M1325.0 387.7h1.5M1318.6 365.6h1.5M1318.6 377.9h1.5M1321.7 374.6h1.5M1318.1 368.1h1.5M1323.6 372.1h1.5M1315.8 366.4h1.5M1318.6 359.6h1.5M1323.0 382.7h1.5M1322.6 383.0h1.5M1322.6 379.0h1.5M1320.5 377.9h1.5M1319.4 359.9h1.5M1321.8 367.6h1.5M1317.6 361.5h1.5M1318.4 364.8h1.5M1319.3 378.7h1.5M1319.1 372.9h1.5M1317.8 359.1h1.5M1322.6 380.6h1.5M1315.3 363.4h1.5M1322.6 377.5h1.5M1323.6 381.7h1.5M1322.6 378.6h1.5M1325.0 371.6h1.5M1327.0 388.9h1.5M1319.7 362.8h1.5M1326.3 388.1h1.5M1321.8 375.9h1.5M1321.0 360.8h1.5M1320.3 374.4h1.5M1319.1 364.7h1.5M1320.0 363.5h1.5M1323.7 376.2h1.5M1322.9 388.7h1.5M1319.6 361.5h1.5M1322.7 371.3h1.5M1319.1 369.9h1.5M1325.1 389.6h1.5M1324.2 387.4h1.5M1316.9 369.8h1.5M1320.3 365.5h1.5M1320.9 378.2h1.5M1319.3 361.0h1.5M1318.9 359.0h1.5M1317.2 358.7h1.5M1318.9 382.8h1.5M1323.5 359.8h1.5M1325.4 382.7h1.5M1320.9 359.7h1.5M1321.3 363.7h1.5M1324.8 388.4h1.5M1320.9 375.6h1.5M1322.4 384.3h1.5M1321.1 378.5h1.5M1318.5 362.1h1.5M1317.8 366.7h1.5M1322.2 380.9h1.5M1324.7 383.2h1.5M1318.1 370.8h1.5M1321.1 370.7h1.5M1317.1 362.1h1.5M1320.5 359.2h1.5M1316.3 362.4h1.5M1324.8 381.4h1.5M1321.5 357.3h1.5M1322.9 381.6h1.5M1323.8 374.3h1.5M1322.2 369.6h1.5M1325.1 383.8h1.5M1319.0 382.7h1.5M1316.9 361.0h1.5M1323.6 386.6h1.5M1321.9 369.6h1.5M1316.4 361.6h1.5M1320.9 366.5h1.5M1317.4 370.3h1.5M1319.8 367.9h1.5M1325.2 380.9h1.5M1320.2 379.0h1.5M1321.1 364.9h1.5M1318.3 362.1h1.5M1322.8 375.3h1.5M1324.4 374.0h1.5M1326.7 382.9h1.5M1324.7 374.1h1.5M1328.4 382.8h1.5M1319.3 368.7h1.5M1323.4 377.8h1.5M1314.1 360.5h1.5M1319.5 371.6h1.5M1313.8 359.1h1.5M1326.7 382.9h1.5M1323.8 385.0h1.5M1320.4 367.3h1.5M1323.0 377.6h1.5M1317.9 373.4h1.5M1324.2 387.1h1.5M1323.6 368.8h1.5M1322.6 364.5h1.5M1324.9 383.5h1.5M1325.0 386.9h1.5M1328.3 384.6h1.5M1314.4 359.7h1.5M1326.9 381.4h1.5M1322.9 386.8h1.5M1320.6 373.1h1.5M1321.7 378.3h1.5M1321.9 383.1h1.5M1321.5 372.8h1.5M1324.9 373.1h1.5M1324.8 375.6h1.5M1317.4 360.4h1.5M1324.5 373.3h1.5M1325.0 385.9h1.5M1322.1 382.6h1.5M1323.8 385.8h1.5M1320.5 368.6h1.5M1321.9 368.7h1.5M1320.2 380.1h1.5M1316.8 362.6h1.5M1319.8 365.2h1.5M1324.2 384.9h1.5M1323.2 377.0h1.5M1318.7 362.6h1.5M1319.9 367.3h1.5M1319.2 378.3h1.5M1325.1 384.3h1.5M1318.7 377.7h1.5M1327.0 382.7h1.5M1326.7 389.2h1.5M1316.0 359.2h1.5M1318.4 368.9h1.5M1319.2 379.8h1.5M1321.5 378.8h1.5M1317.7 361.7h1.5M1322.8 375.5h1.5M1327.2 388.3h1.5M1322.2 385.4h1.5M1319.5 372.5h1.5M1320.0 381.9h1.5M1323.2 371.8h1.5M1328.6 386.3h1.5M1316.7 358.7h1.5M1319.4 370.0h1.5" stroke="#c41228" stroke-width="1.5" opacity="0.8" fill="none"/><path d="M1313.3 337.3h1.5M1318.4 351.8h1.5M1311.9 336.2h1.5M1315.4 352.9h1.5M1312.1 337.2h1.5M1311.9 337.4h1.5M1309.9 336.9h1.5M1315.7 352.1h1.5M1315.5 340.7h1.5M1310.3 336.6h1.5M1309.6 330.1h1.5M1313.8 343.2h1.5M1310.5 334.5h1.5M1315.1 344.5h1.5M1315.9 336.2h1.5M1313.2 359.0h1.5M1312.3 343.8h1.5M1314.0 350.0h1.5M1311.5 336.0h1.5M1310.3 334.1h1.5M1314.5 354.7h1.5M1314.2 337.3h1.5M1311.4 337.5h1.5M1316.9 355.3h1.5M1316.7 346.6h1.5M1314.0 358.4h1.5M1321.4 352.2h1.5M1314.7 357.0h1.5M1313.8 337.3h1.5M1314.0 325.6h1.5M1319.3 348.5h1.5M1315.8 337.3h1.5M1313.0 351.7h1.5M1309.2 346.9h1.5M1309.2 327.4h1.5M1313.8 340.5h1.5M1310.3 335.4h1.5M1316.0 344.1h1.5M1313.9 349.1h1.5M1312.7 350.1h1.5M1315.8 346.2h1.5M1314.6 331.7h1.5M1314.1 333.8h1.5M1316.4 348.0h1.5M1315.8 344.3h1.5M1314.8 351.4h1.5M1311.3 328.7h1.5M1314.2 344.3h1.5M1310.6 344.4h1.5M1312.7 347.5h1.5M1311.0 341.6h1.5M1314.5 328.6h1.5M1314.0 354.4h1.5M1316.3 343.1h1.5M1318.4 343.4h1.5M1314.4 349.0h1.5M1311.3 334.0h1.5M1314.9 348.6h1.5M1320.1 344.8h1.5M1311.1 337.1h1.5M1314.3 334.4h1.5M1312.0 333.4h1.5M1313.1 334.1h1.5M1318.1 356.9h1.5M1309.2 331.8h1.5M1315.4 326.9h1.5M1312.9 327.6h1.5M1316.8 351.9h1.5M1314.3 351.8h1.5M1308.4 328.6h1.5M1316.8 346.5h1.5M1313.0 343.6h1.5M1313.2 331.7h1.5M1312.4 327.0h1.5M1314.6 339.5h1.5M1314.7 345.4h1.5M1310.5 333.4h1.5M1313.2 346.8h1.5M1312.8 355.4h1.5M1311.5 329.9h1.5M1313.5 329.2h1.5M1313.5 337.7h1.5M1310.3 334.6h1.5M1310.5 334.0h1.5M1316.8 354.6h1.5M1314.6 328.2h1.5M1313.1 345.6h1.5M1312.2 337.8h1.5M1314.7 337.8h1.5M1317.8 346.6h1.5M1312.4 338.7h1.5M1314.7 344.3h1.5M1316.6 343.5h1.5M1312.3 340.0h1.5M1319.6 353.6h1.5M1316.3 357.3h1.5M1307.9 332.9h1.5M1313.9 334.4h1.5M1313.4 334.1h1.5M1313.8 353.3h1.5M1318.0 339.9h1.5M1312.8 326.6h1.5M1314.4 336.2h1.5M1313.2 339.4h1.5M1310.8 335.8h1.5M1311.3 342.8h1.5M1316.8 332.9h1.5M1311.9 356.7h1.5M1311.0 344.8h1.5M1305.0 328.7h1.5M1311.2 333.8h1.5M1312.5 338.2h1.5M1309.5 327.6h1.5M1318.5 357.4h1.5M1316.5 346.5h1.5M1313.1 334.2h1.5M1312.9 338.8h1.5M1313.0 329.9h1.5M1310.9 347.6h1.5M1310.0 342.9h1.5M1317.6 345.4h1.5M1314.7 350.8h1.5M1317.9 345.9h1.5M1305.9 330.0h1.5M1315.2 354.9h1.5M1314.9 340.1h1.5M1313.0 330.6h1.5M1316.5 354.9h1.5M1317.1 346.6h1.5M1316.0 329.0h1.5M1314.7 358.6h1.5M1317.3 356.1h1.5M1314.6 342.0h1.5M1316.0 356.1h1.5M1313.9 356.1h1.5M1312.8 330.6h1.5M1315.4 343.5h1.5M1310.5 337.9h1.5M1309.2 338.0h1.5M1310.3 340.8h1.5M1309.4 338.4h1.5M1314.8 346.0h1.5M1310.4 327.9h1.5M1317.9 352.3h1.5M1312.8 338.3h1.5M1310.5 329.4h1.5M1319.7 345.5h1.5M1310.1 332.5h1.5M1311.4 330.2h1.5M1313.3 343.9h1.5M1317.9 351.4h1.5M1316.2 346.3h1.5M1315.8 356.1h1.5M1311.0 331.2h1.5M1311.2 331.1h1.5M1307.1 333.0h1.5M1311.9 344.7h1.5M1316.8 346.3h1.5M1321.3 356.0h1.5" stroke="#c41228" stroke-width="1.5" opacity="0.8" fill="none"/><defs><linearGradient id="tg347" gradientUnits="userSpaceOnUse" x1="1403.7" y1="658.1" x2="1563.1" y2="694.3"><stop offset="0" stop-color="#9696ba" stop-opacity="0.2"/><stop offset="1" stop-color="#2c1aec"/></linearGradient></defs><path d="M1402.7 662.5L1420.2 667.1L1437.8 671.8L1455.4 676.4L1473.0 681.0L1490.6 685.5L1508.3 689.6L1526.0 693.6L1543.7 697.6L1561.4 701.6L1579.1 705.7L1596.9 709.7L1614.6 713.7L1617.9 699.1L1600.2 695.1L1582.5 691.0L1564.8 687.0L1547.0 683.0L1529.3 679.0L1511.6 674.9L1493.9 670.9L1476.1 667.4L1458.2 664.0L1440.4 660.5L1422.5 657.1L1404.6 653.7z" fill="url(#tg347)" opacity="0.42"/><path d="M1422.5 660.6h1.6M1411.2 661.1h1.6M1418.4 666.6h1.6M1409.1 656.3h1.6M1428.3 664.3h1.6M1427.9 665.7h1.6M1427.5 664.9h1.6M1419.9 663.3h1.6M1407.6 657.6h1.6M1404.9 660.5h1.6M1420.1 662.9h1.6M1420.4 659.8h1.6M1408.5 658.7h1.6M1424.4 660.1h1.6M1423.6 661.9h1.6M1428.8 660.7h1.6M1428.1 660.4h1.6M1410.9 661.0h1.6M1420.0 664.0h1.6M1425.6 665.2h1.6M1407.4 659.9h1.6M1411.9 662.7h1.6M1430.9 658.5h1.6M1416.0 659.0h1.6M1429.1 662.2h1.6M1427.6 664.0h1.6M1412.8 656.9h1.6M1418.9 657.7h1.6M1414.1 657.4h1.6M1418.3 658.6h1.6M1410.3 659.8h1.6M1412.5 658.1h1.6M1428.9 665.8h1.6M1422.5 659.3h1.6M1425.5 663.6h1.6M1418.2 660.9h1.6M1428.0 662.0h1.6M1416.5 661.7h1.6M1416.5 659.9h1.6M1419.8 661.6h1.6M1412.4 661.7h1.6M1418.8 664.4h1.6M1423.5 665.2h1.6M1411.6 656.6h1.6M1422.2 660.9h1.6M1408.0 661.0h1.6M1411.6 662.1h1.6M1404.8 658.7h1.6M1419.1 656.3h1.6M1425.9 668.9h1.6M1410.2 659.6h1.6M1414.1 657.3h1.6M1413.6 662.3h1.6M1429.1 662.3h1.6" stroke="#8d8cbe" stroke-width="1.6" opacity="0.82" fill="none"/><path d="M1448.4 667.0h1.6M1443.1 669.4h1.6M1455.3 668.3h1.6M1452.3 669.9h1.6M1442.7 663.4h1.6M1444.4 666.1h1.6M1443.1 667.3h1.6M1441.8 666.9h1.6M1453.2 672.9h1.6M1454.6 670.5h1.6M1449.1 668.1h1.6M1450.2 669.2h1.6M1454.5 671.2h1.6M1443.0 670.6h1.6M1447.5 667.3h1.6M1445.0 667.2h1.6M1452.7 669.8h1.6M1440.2 666.5h1.6M1442.2 671.2h1.6M1434.5 662.5h1.6M1453.7 669.1h1.6M1434.4 663.9h1.6M1451.9 672.6h1.6M1433.3 663.9h1.6M1455.6 669.1h1.6M1445.6 663.5h1.6M1453.3 669.4h1.6M1441.7 667.2h1.6M1448.2 663.7h1.6M1446.2 673.0h1.6M1437.7 672.4h1.6M1433.0 662.3h1.6M1443.8 664.8h1.6M1440.3 666.0h1.6M1444.1 665.8h1.6M1453.4 665.8h1.6M1435.7 662.3h1.6M1440.0 671.0h1.6M1438.3 666.5h1.6M1437.8 664.5h1.6M1431.9 665.4h1.6M1446.2 670.3h1.6M1455.2 668.6h1.6M1447.6 672.8h1.6M1444.1 670.8h1.6M1445.4 668.1h1.6M1450.6 668.1h1.6M1450.4 669.5h1.6M1447.6 674.0h1.6M1430.2 666.7h1.6M1454.2 674.0h1.6M1447.6 668.6h1.6M1446.7 670.3h1.6M1442.6 666.3h1.6M1454.7 671.5h1.6M1444.7 664.3h1.6M1453.2 668.3h1.6M1431.9 664.4h1.6M1440.2 666.4h1.6M1452.6 667.3h1.6M1429.9 669.3h1.6M1432.2 666.9h1.6M1449.3 669.5h1.6M1438.9 662.5h1.6M1444.7 664.4h1.6M1445.3 666.9h1.6M1451.6 665.3h1.6M1431.5 661.0h1.6M1430.8 665.9h1.6M1448.2 669.3h1.6M1447.9 668.1h1.6M1457.5 664.6h1.6M1456.5 666.0h1.6M1454.1 671.0h1.6M1448.2 670.9h1.6M1448.8 667.6h1.6M1445.1 671.5h1.6M1443.1 666.8h1.6M1439.4 662.9h1.6M1432.0 659.8h1.6M1451.3 671.8h1.6M1432.7 670.5h1.6M1452.5 668.2h1.6M1444.2 668.5h1.6M1437.2 668.7h1.6M1436.3 669.0h1.6M1435.5 666.2h1.6M1442.2 665.5h1.6M1438.9 667.9h1.6M1455.9 673.2h1.6M1439.1 661.2h1.6M1430.7 668.0h1.6M1433.1 665.3h1.6M1436.7 663.2h1.6M1446.6 671.5h1.6" stroke="#7c77c6" stroke-width="1.6" opacity="0.82" fill="none"/><path d="M1477.4 673.5h1.6M1462.4 672.2h1.6M1465.8 679.2h1.6M1465.4 671.7h1.6M1458.0 671.2h1.6M1471.5 677.1h1.6M1478.2 674.6h1.6M1473.8 677.9h1.6M1461.2 668.4h1.6M1473.2 668.3h1.6M1467.9 676.9h1.6M1477.9 680.7h1.6M1480.2 672.8h1.6M1480.3 672.4h1.6M1456.6 676.1h1.6M1471.0 674.7h1.6M1475.2 670.8h1.6M1461.6 672.1h1.6M1479.7 680.1h1.6M1465.2 670.0h1.6M1482.0 677.0h1.6M1462.0 667.3h1.6M1460.8 671.4h1.6M1479.3 677.7h1.6M1470.0 670.1h1.6M1465.0 675.7h1.6M1461.1 675.4h1.6M1461.0 678.1h1.6M1474.5 676.0h1.6M1457.5 669.5h1.6M1458.8 669.2h1.6M1481.9 676.9h1.6M1459.3 674.1h1.6M1473.6 674.4h1.6M1467.5 676.5h1.6M1458.4 671.1h1.6M1464.7 668.6h1.6M1474.4 671.4h1.6M1472.2 671.1h1.6M1466.6 677.2h1.6M1473.4 677.5h1.6M1468.1 671.1h1.6M1477.5 673.3h1.6M1467.7 672.1h1.6M1472.6 675.4h1.6M1463.1 672.2h1.6M1463.3 677.5h1.6M1476.6 671.8h1.6M1474.6 672.5h1.6M1481.5 672.1h1.6M1458.4 667.7h1.6M1479.9 678.1h1.6M1479.3 674.1h1.6M1479.6 669.8h1.6M1469.2 671.9h1.6M1469.4 673.0h1.6M1482.1 677.1h1.6M1482.7 676.7h1.6M1474.2 674.2h1.6M1479.9 674.2h1.6M1466.9 670.1h1.6M1474.5 675.6h1.6M1470.7 672.3h1.6M1458.2 671.3h1.6M1483.5 674.6h1.6M1462.6 673.2h1.6M1480.0 674.6h1.6M1458.9 673.3h1.6M1460.5 675.1h1.6M1460.8 666.1h1.6M1475.1 668.9h1.6M1467.0 671.7h1.6M1458.0 671.1h1.6M1458.1 669.3h1.6M1482.1 671.9h1.6M1479.7 679.5h1.6M1464.3 670.7h1.6M1478.2 676.2h1.6M1460.2 672.8h1.6M1473.3 673.9h1.6M1462.1 675.7h1.6M1481.7 673.1h1.6M1457.7 675.6h1.6M1480.8 674.1h1.6M1474.3 670.3h1.6M1464.4 676.4h1.6M1461.3 672.2h1.6M1462.8 670.0h1.6M1483.0 674.8h1.6M1457.8 670.2h1.6M1460.2 671.2h1.6M1479.9 675.5h1.6M1463.6 668.8h1.6M1459.8 671.3h1.6M1471.5 671.8h1.6M1460.6 673.8h1.6M1459.6 675.9h1.6M1463.7 668.2h1.6M1484.1 672.6h1.6M1481.7 679.8h1.6M1475.4 671.2h1.6M1473.9 677.0h1.6M1460.9 669.6h1.6M1466.5 668.5h1.6M1460.6 673.5h1.6" stroke="#6a62cf" stroke-width="1.6" opacity="0.82" fill="none"/><path d="M1504.6 684.1h1.6M1487.1 676.9h1.6M1508.3 683.4h1.6M1492.2 679.6h1.6M1496.1 674.9h1.6M1501.3 678.7h1.6M1500.4 681.9h1.6M1494.5 679.6h1.6M1506.7 682.3h1.6M1493.4 677.1h1.6M1492.0 673.8h1.6M1495.1 680.9h1.6M1491.8 675.5h1.6M1487.2 676.6h1.6M1506.5 678.2h1.6M1507.0 680.7h1.6M1488.4 682.4h1.6M1500.9 686.2h1.6M1492.9 678.3h1.6M1489.8 678.0h1.6M1505.9 678.1h1.6M1499.5 685.0h1.6M1502.5 685.1h1.6M1494.6 674.8h1.6M1509.0 682.8h1.6M1485.7 680.6h1.6M1485.2 673.7h1.6M1504.7 687.0h1.6M1508.2 682.6h1.6M1503.5 677.3h1.6M1503.4 679.9h1.6M1492.9 679.3h1.6M1483.4 677.3h1.6M1488.6 677.4h1.6M1505.2 684.2h1.6M1506.2 679.6h1.6M1504.7 681.8h1.6M1491.2 682.9h1.6M1485.8 679.2h1.6M1483.1 677.2h1.6M1496.5 681.1h1.6M1507.1 685.5h1.6M1498.0 676.5h1.6M1495.3 680.6h1.6M1492.3 675.7h1.6M1494.1 673.5h1.6M1487.4 678.7h1.6M1503.7 676.5h1.6M1491.4 678.3h1.6M1486.4 669.6h1.6M1493.1 677.7h1.6M1492.8 677.8h1.6M1493.4 677.3h1.6M1487.2 678.2h1.6M1498.7 678.6h1.6M1490.4 682.3h1.6M1483.8 676.6h1.6M1490.8 677.9h1.6M1488.5 682.4h1.6M1491.8 676.6h1.6M1495.1 687.3h1.6M1509.7 680.7h1.6M1508.0 679.4h1.6M1505.7 684.3h1.6M1494.5 683.8h1.6M1485.7 674.0h1.6M1495.4 676.1h1.6M1502.8 677.0h1.6M1493.0 682.1h1.6M1490.4 680.7h1.6M1483.8 676.3h1.6M1507.7 675.4h1.6M1495.1 683.0h1.6M1491.9 679.8h1.6M1505.3 677.5h1.6M1487.8 670.6h1.6M1489.2 676.7h1.6M1491.2 674.8h1.6M1496.2 675.5h1.6M1499.0 682.4h1.6M1505.4 684.9h1.6M1485.8 677.4h1.6M1485.1 672.6h1.6M1494.3 681.0h1.6M1502.2 680.6h1.6M1495.6 686.3h1.6M1503.2 682.6h1.6M1505.1 681.5h1.6M1507.0 676.8h1.6M1487.3 677.4h1.6M1506.5 683.1h1.6M1493.1 673.6h1.6M1498.6 679.5h1.6M1490.3 674.8h1.6M1491.2 677.6h1.6M1493.3 678.2h1.6M1505.8 675.9h1.6M1506.0 681.7h1.6M1487.8 677.8h1.6M1492.8 675.3h1.6M1503.2 685.1h1.6M1493.5 681.4h1.6M1496.2 683.2h1.6M1495.6 678.3h1.6M1501.3 681.8h1.6M1489.6 683.1h1.6M1499.9 684.4h1.6M1484.5 671.3h1.6M1495.5 681.5h1.6M1491.6 679.8h1.6M1503.1 683.3h1.6M1500.4 676.7h1.6M1504.0 685.5h1.6M1488.6 680.5h1.6M1492.6 680.4h1.6M1508.0 683.6h1.6M1507.7 683.8h1.6M1503.7 679.2h1.6M1489.9 683.1h1.6M1508.4 687.3h1.6M1499.8 684.4h1.6M1490.4 682.6h1.6M1489.8 681.7h1.6M1497.3 675.8h1.6M1503.4 680.3h1.6M1508.0 685.8h1.6M1485.3 675.6h1.6M1508.9 678.7h1.6M1493.8 677.7h1.6M1503.0 685.0h1.6M1508.4 683.0h1.6M1493.2 679.0h1.6M1500.3 680.7h1.6M1494.9 680.9h1.6M1499.5 680.7h1.6M1484.6 678.0h1.6M1506.2 675.7h1.6M1508.5 686.6h1.6M1497.4 681.9h1.6M1489.3 677.3h1.6M1508.2 683.2h1.6M1493.5 683.6h1.6M1499.0 671.4h1.6M1498.8 682.8h1.6M1503.0 680.4h1.6M1507.6 678.1h1.6M1502.8 682.3h1.6M1508.2 681.3h1.6M1500.5 682.4h1.6M1490.1 677.7h1.6M1492.6 679.2h1.6M1489.7 680.3h1.6" stroke="#584ed7" stroke-width="1.6" opacity="0.82" fill="none"/><path d="M1532.4 686.1h1.6M1510.1 689.9h1.6M1519.8 687.4h1.6M1514.2 689.9h1.6M1531.3 680.0h1.6M1510.4 681.5h1.6M1532.8 692.8h1.6M1532.6 687.6h1.6M1533.3 686.5h1.6M1516.7 679.2h1.6M1514.0 685.5h1.6M1529.6 680.1h1.6M1526.9 683.5h1.6M1514.8 679.5h1.6M1528.5 684.8h1.6M1535.3 685.2h1.6M1531.0 685.5h1.6M1532.9 686.4h1.6M1524.9 678.8h1.6M1525.4 682.9h1.6M1529.8 678.6h1.6M1524.1 685.8h1.6M1523.3 685.5h1.6M1522.1 686.3h1.6M1519.8 684.7h1.6M1536.8 684.3h1.6M1517.4 683.8h1.6M1533.2 679.7h1.6M1516.7 683.2h1.6M1518.5 678.9h1.6M1521.6 677.4h1.6M1523.7 692.2h1.6M1525.0 689.8h1.6M1533.1 690.6h1.6M1536.7 686.3h1.6M1529.3 685.7h1.6M1509.8 686.7h1.6M1518.6 684.2h1.6M1518.6 681.5h1.6M1513.6 677.9h1.6M1535.5 686.7h1.6M1531.9 687.6h1.6M1534.6 684.2h1.6M1530.5 685.4h1.6M1530.0 688.4h1.6M1526.0 682.5h1.6M1518.8 683.5h1.6M1528.7 689.7h1.6M1533.0 693.5h1.6M1513.5 678.3h1.6M1526.7 688.8h1.6M1530.5 686.9h1.6M1530.9 691.9h1.6M1535.5 690.3h1.6M1517.6 684.7h1.6M1511.3 682.8h1.6M1513.8 679.3h1.6M1525.0 688.6h1.6M1511.6 688.1h1.6M1526.8 686.4h1.6M1524.9 685.5h1.6M1523.4 689.2h1.6M1520.7 687.6h1.6M1512.1 679.3h1.6M1514.2 681.9h1.6M1524.2 680.1h1.6M1525.3 689.9h1.6M1527.8 689.7h1.6M1517.2 677.2h1.6M1515.0 686.4h1.6M1526.9 689.5h1.6M1526.1 683.1h1.6M1534.3 687.8h1.6M1525.3 682.8h1.6M1510.4 682.9h1.6M1535.2 686.2h1.6M1529.8 692.3h1.6M1520.2 683.1h1.6M1532.9 687.3h1.6M1522.0 688.8h1.6M1522.9 686.2h1.6M1534.1 694.4h1.6M1518.8 686.5h1.6M1536.4 687.0h1.6M1523.8 686.6h1.6M1515.1 687.9h1.6M1534.3 686.6h1.6M1510.2 682.6h1.6M1533.7 693.7h1.6M1515.5 675.8h1.6M1528.9 686.9h1.6M1513.5 691.6h1.6M1531.2 682.0h1.6M1524.7 686.5h1.6M1535.0 689.1h1.6M1530.7 689.3h1.6M1531.5 689.6h1.6M1517.1 679.1h1.6M1510.4 685.9h1.6M1532.4 688.4h1.6M1535.3 686.1h1.6M1525.4 684.8h1.6M1523.7 684.4h1.6M1519.4 679.8h1.6M1522.6 681.0h1.6M1524.8 683.6h1.6M1525.9 685.9h1.6M1524.3 685.6h1.6M1513.3 680.1h1.6M1526.9 689.6h1.6M1521.8 679.8h1.6M1517.1 684.5h1.6M1512.0 680.6h1.6M1528.1 687.7h1.6M1523.9 687.3h1.6M1515.0 676.4h1.6M1531.7 687.8h1.6M1525.6 682.4h1.6M1521.6 686.6h1.6M1527.8 681.6h1.6M1529.6 690.3h1.6M1526.0 689.9h1.6M1515.6 687.9h1.6M1520.3 684.2h1.6M1516.5 687.4h1.6M1536.6 686.8h1.6M1519.1 685.6h1.6M1517.8 685.5h1.6M1536.1 690.0h1.6M1536.4 687.8h1.6M1509.6 690.8h1.6M1515.7 682.8h1.6M1528.9 687.7h1.6M1514.3 683.3h1.6M1528.7 686.6h1.6M1518.2 685.4h1.6M1513.3 681.9h1.6M1533.9 693.8h1.6M1533.5 693.6h1.6M1518.0 677.1h1.6M1516.7 686.1h1.6M1532.6 682.3h1.6M1518.4 678.5h1.6M1520.5 677.6h1.6M1523.9 688.5h1.6M1513.9 685.2h1.6M1516.8 686.4h1.6M1517.6 677.1h1.6M1522.0 686.0h1.6M1516.2 681.0h1.6" stroke="#4639e0" stroke-width="1.6" opacity="0.82" fill="none"/><path d="M1541.4 689.6h1.6M1548.3 692.9h1.6M1544.5 688.5h1.6M1547.7 694.5h1.6M1548.8 692.0h1.6M1537.0 687.4h1.6M1544.3 689.6h1.6M1548.6 694.0h1.6M1556.9 691.8h1.6M1559.5 690.7h1.6M1556.4 690.1h1.6M1554.6 691.8h1.6M1546.3 691.7h1.6M1548.9 694.2h1.6M1543.6 684.0h1.6M1545.4 690.9h1.6M1553.1 687.0h1.6M1556.0 692.5h1.6M1554.7 689.9h1.6M1561.0 692.3h1.6M1558.4 691.9h1.6M1557.3 695.1h1.6M1547.4 698.0h1.6M1561.4 693.0h1.6M1543.7 689.6h1.6M1562.0 691.9h1.6M1547.3 686.8h1.6M1554.4 686.0h1.6M1550.7 696.4h1.6M1549.9 693.1h1.6M1561.9 692.0h1.6M1541.4 686.5h1.6M1546.3 689.4h1.6M1561.7 696.6h1.6M1553.9 691.5h1.6M1538.7 686.0h1.6M1536.8 693.5h1.6M1538.9 690.5h1.6M1558.7 695.7h1.6M1558.5 697.9h1.6M1563.4 689.2h1.6M1544.2 686.3h1.6M1545.4 689.0h1.6M1545.4 685.5h1.6M1556.9 690.3h1.6M1553.8 694.9h1.6M1543.3 694.6h1.6M1562.1 695.5h1.6M1550.4 693.9h1.6M1539.5 683.5h1.6M1538.0 688.5h1.6M1561.8 699.7h1.6M1552.9 693.2h1.6M1537.4 685.6h1.6M1540.1 691.9h1.6M1559.0 687.6h1.6M1553.8 699.2h1.6M1546.6 686.1h1.6M1541.8 682.0h1.6M1559.1 688.4h1.6M1541.6 691.0h1.6M1552.7 692.4h1.6M1556.2 697.5h1.6M1541.3 693.5h1.6M1548.6 684.5h1.6M1550.9 689.4h1.6M1553.5 686.9h1.6M1552.8 693.8h1.6M1556.0 692.9h1.6M1554.2 690.3h1.6M1549.3 687.6h1.6M1541.8 691.5h1.6M1537.4 686.6h1.6M1560.5 691.8h1.6M1539.0 697.1h1.6M1555.9 691.6h1.6M1558.4 696.5h1.6M1538.8 683.8h1.6M1537.4 690.4h1.6M1560.0 691.9h1.6M1549.6 697.0h1.6M1537.7 689.0h1.6M1546.1 694.4h1.6M1544.5 692.9h1.6M1556.0 700.0h1.6M1562.9 689.9h1.6M1547.0 692.5h1.6M1545.9 685.8h1.6M1560.3 697.5h1.6M1544.7 691.2h1.6M1549.8 687.4h1.6M1552.6 692.0h1.6M1563.7 689.1h1.6M1541.6 685.4h1.6M1541.7 682.1h1.6M1553.2 690.0h1.6M1549.0 687.7h1.6M1550.5 690.7h1.6M1537.3 687.7h1.6M1553.2 691.3h1.6M1558.6 695.4h1.6M1544.9 695.3h1.6M1539.6 692.9h1.6M1542.3 686.5h1.6M1538.8 684.7h1.6M1546.9 691.4h1.6M1556.0 691.8h1.6M1547.1 692.9h1.6M1560.0 688.0h1.6M1549.8 689.8h1.6M1558.6 696.2h1.6M1549.8 693.5h1.6M1554.3 689.1h1.6M1560.2 699.2h1.6M1540.9 689.6h1.6M1547.8 693.7h1.6M1541.3 694.8h1.6M1551.6 692.1h1.6M1538.2 691.9h1.6M1540.6 688.6h1.6M1539.8 694.3h1.6M1551.7 691.9h1.6M1547.4 688.0h1.6M1545.2 684.1h1.6M1552.7 693.2h1.6M1545.8 693.5h1.6M1540.1 689.5h1.6M1544.3 696.6h1.6M1558.8 697.5h1.6M1540.8 693.4h1.6M1553.3 698.2h1.6M1545.0 689.9h1.6M1543.6 685.9h1.6M1539.7 693.2h1.6M1540.2 692.0h1.6M1540.4 696.2h1.6M1548.1 688.1h1.6M1548.2 689.9h1.6M1541.1 685.9h1.6M1562.7 694.4h1.6M1538.3 684.2h1.6M1559.5 685.4h1.6M1551.6 690.2h1.6M1551.1 691.6h1.6M1552.6 693.9h1.6M1536.9 687.8h1.6M1560.2 694.3h1.6M1545.8 687.0h1.6M1550.1 692.0h1.6M1540.2 689.0h1.6M1558.5 695.6h1.6M1550.4 690.6h1.6M1562.0 695.0h1.6M1543.2 692.0h1.6M1536.7 687.7h1.6M1558.3 701.5h1.6M1557.4 692.5h1.6M1535.8 692.8h1.6M1543.3 689.6h1.6M1538.1 692.8h1.6M1543.3 686.1h1.6M1553.3 686.1h1.6M1561.3 691.5h1.6M1554.0 698.5h1.6M1544.1 690.7h1.6M1537.5 684.6h1.6M1551.0 699.7h1.6M1556.9 686.4h1.6M1555.7 700.2h1.6M1549.4 690.7h1.6M1560.8 686.3h1.6M1543.8 688.9h1.6M1541.1 687.1h1.6M1546.4 687.7h1.6M1543.3 691.8h1.6M1539.6 689.4h1.6M1553.8 693.1h1.6M1541.8 691.7h1.6M1539.0 687.5h1.6M1561.8 688.5h1.6M1538.3 682.9h1.6M1537.6 691.0h1.6M1557.6 689.9h1.6M1538.3 692.2h1.6M1537.2 688.8h1.6M1554.5 697.9h1.6M1539.0 684.2h1.6M1549.3 691.6h1.6M1562.7 696.1h1.6M1562.1 697.2h1.6M1552.1 691.7h1.6M1548.3 689.6h1.6M1552.5 693.7h1.6M1559.1 697.5h1.6M1544.6 688.3h1.6M1562.0 697.4h1.6M1540.2 692.8h1.6" stroke="#3524e8" stroke-width="1.6" opacity="0.82" fill="none"/><path d="M1569.9 701.9h1.6M1582.4 694.6h1.6M1587.6 700.4h1.6M1567.0 699.4h1.6M1570.0 701.0h1.6M1584.9 696.7h1.6M1583.9 695.4h1.6M1579.3 699.4h1.6M1584.6 700.5h1.6M1576.6 700.2h1.6M1568.9 700.1h1.6M1588.6 698.7h1.6M1572.9 703.7h1.6M1576.1 698.7h1.6M1567.1 699.8h1.6M1577.2 699.7h1.6M1579.2 689.4h1.6M1573.3 698.0h1.6M1566.2 688.2h1.6M1571.4 697.4h1.6M1585.9 703.4h1.6M1567.3 696.0h1.6M1571.8 694.3h1.6M1587.1 699.1h1.6M1579.2 698.8h1.6M1567.2 696.6h1.6M1580.4 702.3h1.6M1570.2 695.2h1.6M1579.3 692.9h1.6M1583.7 702.5h1.6M1577.7 698.3h1.6M1584.5 705.8h1.6M1586.4 699.2h1.6M1588.5 696.9h1.6M1571.2 702.4h1.6M1575.0 696.2h1.6M1576.7 699.3h1.6M1575.3 698.8h1.6M1582.7 699.6h1.6M1566.6 689.0h1.6M1581.7 704.2h1.6M1585.0 698.3h1.6M1572.9 698.3h1.6M1587.4 700.3h1.6M1579.4 695.4h1.6M1562.4 697.7h1.6M1587.3 698.1h1.6M1574.9 693.7h1.6M1587.7 694.2h1.6M1588.0 707.6h1.6M1585.6 698.3h1.6M1572.2 690.3h1.6M1586.2 700.9h1.6M1575.1 693.3h1.6M1581.5 701.9h1.6M1568.5 697.6h1.6M1570.3 692.6h1.6M1570.3 691.1h1.6M1582.2 697.4h1.6M1564.5 695.6h1.6M1573.2 697.2h1.6M1587.8 703.9h1.6M1564.3 699.4h1.6M1581.4 704.8h1.6M1583.2 699.4h1.6M1585.3 693.9h1.6M1572.0 694.2h1.6M1564.9 694.9h1.6M1587.7 702.3h1.6M1563.5 699.2h1.6M1570.4 694.5h1.6M1566.5 699.8h1.6M1581.5 700.4h1.6M1564.0 694.2h1.6M1565.4 693.6h1.6M1578.6 696.1h1.6M1587.3 694.3h1.6M1566.3 699.9h1.6M1584.1 702.1h1.6M1576.7 692.1h1.6M1573.3 697.7h1.6M1574.6 699.2h1.6M1565.3 699.2h1.6M1569.8 694.0h1.6M1569.9 689.2h1.6M1588.5 697.2h1.6M1573.2 698.4h1.6M1563.0 702.9h1.6M1564.4 701.9h1.6M1570.2 698.1h1.6M1568.2 701.7h1.6M1581.6 700.8h1.6M1569.7 692.3h1.6M1569.7 691.3h1.6M1571.6 692.0h1.6M1581.0 701.7h1.6M1575.8 700.2h1.6M1572.5 699.9h1.6M1572.9 696.1h1.6M1579.2 697.7h1.6M1567.2 694.5h1.6M1582.5 695.5h1.6M1581.3 704.6h1.6M1570.6 700.9h1.6M1587.5 701.5h1.6M1577.3 699.3h1.6M1587.2 700.6h1.6M1587.6 698.0h1.6M1569.3 695.5h1.6M1569.3 693.7h1.6M1586.3 696.4h1.6M1580.1 697.3h1.6M1569.2 701.9h1.6M1586.1 696.5h1.6M1583.9 699.7h1.6M1588.8 697.2h1.6M1566.5 696.7h1.6M1568.0 695.0h1.6M1585.0 700.1h1.6M1571.5 699.7h1.6M1582.8 697.2h1.6M1569.9 696.3h1.6M1581.1 696.2h1.6M1572.9 690.8h1.6M1566.5 687.5h1.6M1578.4 704.5h1.6M1585.5 701.6h1.6M1584.5 705.5h1.6M1582.3 697.7h1.6M1575.8 699.2h1.6M1582.3 698.1h1.6M1574.9 698.0h1.6M1565.2 691.4h1.6M1582.1 702.2h1.6M1580.2 695.2h1.6M1584.6 699.8h1.6M1564.6 695.7h1.6M1580.1 701.6h1.6M1572.9 697.4h1.6M1567.6 693.6h1.6M1587.3 697.8h1.6M1574.3 692.5h1.6M1584.9 695.8h1.6M1576.4 704.1h1.6M1579.8 690.7h1.6M1583.8 702.8h1.6M1570.1 696.6h1.6M1573.4 699.3h1.6M1585.7 700.4h1.6M1571.1 698.0h1.6M1589.4 699.1h1.6M1580.5 698.2h1.6M1589.3 696.3h1.6M1578.9 700.1h1.6M1578.5 699.6h1.6M1580.0 696.6h1.6M1570.0 695.4h1.6M1574.6 699.6h1.6M1570.6 700.3h1.6M1569.7 694.3h1.6M1580.0 701.6h1.6M1585.5 696.6h1.6M1574.8 698.1h1.6M1570.0 693.0h1.6M1579.8 699.2h1.6M1565.2 695.9h1.6M1576.8 696.0h1.6M1563.1 694.9h1.6M1573.3 689.8h1.6M1582.9 694.2h1.6M1578.1 696.9h1.6M1578.5 692.7h1.6M1588.3 697.8h1.6M1566.8 700.5h1.6M1582.5 695.0h1.6M1577.9 697.1h1.6M1567.3 698.8h1.6M1583.1 704.0h1.6M1574.6 702.5h1.6M1575.2 697.0h1.6M1567.8 699.8h1.6M1563.9 691.5h1.6M1576.8 695.7h1.6M1577.6 701.5h1.6M1580.9 693.7h1.6M1571.2 694.2h1.6M1579.8 701.3h1.6M1564.5 698.3h1.6" stroke="#2c1aec" stroke-width="1.6" opacity="0.82" fill="none"/><path d="M1600.5 700.6h1.6M1612.7 699.1h1.6M1606.6 703.7h1.6M1610.8 704.8h1.6M1598.8 705.8h1.6M1601.7 703.2h1.6M1615.3 706.8h1.6M1594.0 697.6h1.6M1591.8 699.2h1.6M1593.7 696.3h1.6M1610.6 704.7h1.6M1600.6 696.2h1.6M1595.8 700.0h1.6M1602.8 706.1h1.6M1611.9 703.3h1.6M1610.2 705.1h1.6M1607.8 700.8h1.6M1609.3 702.8h1.6M1590.2 702.5h1.6M1616.2 705.1h1.6M1612.9 701.6h1.6M1593.0 705.1h1.6M1595.3 699.1h1.6M1598.0 709.1h1.6M1614.0 707.3h1.6M1606.6 709.1h1.6M1597.8 700.1h1.6M1606.4 704.3h1.6M1610.0 708.2h1.6M1604.6 704.2h1.6M1591.6 703.2h1.6M1613.4 704.6h1.6M1602.6 703.2h1.6M1594.3 699.3h1.6M1596.5 699.5h1.6M1612.7 711.0h1.6M1605.9 704.6h1.6M1612.3 700.2h1.6M1599.2 708.2h1.6M1591.0 702.6h1.6M1597.5 700.1h1.6M1613.6 705.3h1.6M1593.2 700.9h1.6M1597.3 700.9h1.6M1596.8 700.0h1.6M1590.8 698.8h1.6M1606.6 707.3h1.6M1614.1 707.7h1.6M1611.9 699.3h1.6M1607.2 707.6h1.6M1612.2 704.9h1.6M1610.5 709.5h1.6M1611.5 703.5h1.6M1601.4 702.5h1.6M1614.0 704.0h1.6M1596.1 705.2h1.6M1603.7 711.1h1.6M1614.9 702.8h1.6M1606.1 702.8h1.6M1611.6 708.9h1.6M1596.6 703.8h1.6M1615.3 707.7h1.6M1595.4 704.9h1.6M1600.7 707.5h1.6M1589.5 705.4h1.6M1594.5 694.4h1.6M1595.7 702.3h1.6M1604.8 707.5h1.6M1592.6 701.9h1.6M1602.4 705.4h1.6M1606.4 700.7h1.6M1599.5 698.8h1.6M1606.6 707.6h1.6M1612.4 713.2h1.6M1598.2 700.1h1.6M1595.6 699.4h1.6M1591.3 706.7h1.6M1593.1 702.8h1.6M1598.3 704.0h1.6M1599.9 699.6h1.6M1604.0 696.4h1.6M1611.9 706.2h1.6M1610.7 703.2h1.6M1607.1 702.1h1.6M1608.9 706.9h1.6M1601.2 704.2h1.6M1602.1 702.5h1.6M1591.5 699.0h1.6M1596.8 699.2h1.6M1609.5 703.6h1.6M1610.6 703.6h1.6M1599.7 703.4h1.6M1609.6 705.3h1.6M1605.8 705.2h1.6M1597.7 698.9h1.6M1611.7 698.1h1.6M1608.1 706.3h1.6M1593.6 699.4h1.6M1613.0 705.4h1.6M1597.6 706.0h1.6M1598.0 705.7h1.6M1591.8 702.2h1.6M1590.3 700.1h1.6M1607.1 708.0h1.6M1607.5 702.1h1.6M1592.8 704.7h1.6M1597.5 695.4h1.6M1592.3 696.3h1.6M1602.9 705.1h1.6M1612.6 702.4h1.6M1590.6 701.6h1.6M1598.5 701.8h1.6M1599.3 703.9h1.6M1608.5 707.3h1.6M1607.0 700.7h1.6M1596.9 703.8h1.6M1596.4 700.6h1.6M1597.6 701.2h1.6M1610.6 704.8h1.6M1602.3 705.7h1.6M1603.1 705.2h1.6M1595.6 698.2h1.6M1609.5 705.2h1.6M1610.5 709.4h1.6M1594.8 697.6h1.6M1603.0 696.2h1.6M1593.4 706.4h1.6M1599.3 702.8h1.6M1603.3 704.5h1.6M1590.1 701.5h1.6M1599.5 704.5h1.6M1597.6 696.7h1.6M1600.9 696.6h1.6M1601.6 706.9h1.6M1594.7 698.7h1.6M1594.0 703.2h1.6M1612.3 704.4h1.6M1606.2 706.2h1.6M1609.8 707.4h1.6M1614.6 708.7h1.6M1612.4 708.0h1.6M1595.7 697.9h1.6M1595.2 700.0h1.6M1605.5 701.5h1.6M1603.3 701.0h1.6M1590.7 699.6h1.6M1610.0 704.4h1.6M1597.2 705.9h1.6M1615.9 706.7h1.6M1606.3 701.4h1.6M1611.4 701.0h1.6M1602.9 711.1h1.6M1593.4 700.5h1.6M1614.2 702.9h1.6M1612.2 705.6h1.6M1605.5 701.9h1.6M1594.9 702.2h1.6M1593.1 701.6h1.6M1601.2 705.8h1.6M1605.3 706.5h1.6M1593.7 703.9h1.6M1615.3 708.1h1.6M1602.4 708.5h1.6M1598.3 698.5h1.6M1609.3 706.6h1.6M1611.2 703.2h1.6M1612.8 706.9h1.6M1610.4 700.3h1.6M1593.2 702.8h1.6M1606.5 711.0h1.6M1591.6 695.5h1.6M1597.1 709.3h1.6M1601.0 706.0h1.6M1614.3 703.7h1.6M1614.1 711.7h1.6M1611.6 698.2h1.6M1606.9 699.2h1.6M1594.3 701.5h1.6M1594.4 699.5h1.6M1607.1 701.7h1.6M1605.6 707.2h1.6M1595.3 698.5h1.6M1611.2 712.0h1.6M1606.2 702.8h1.6M1613.5 704.2h1.6M1592.3 705.5h1.6M1605.4 704.6h1.6M1605.9 708.8h1.6M1601.0 698.0h1.6M1614.8 709.3h1.6M1595.2 696.0h1.6M1611.0 705.2h1.6M1601.2 698.1h1.6M1607.0 708.7h1.6M1590.6 701.5h1.6M1610.9 708.3h1.6M1612.9 707.4h1.6M1613.3 706.4h1.6M1595.1 700.9h1.6M1590.4 704.3h1.6M1608.6 706.3h1.6M1614.2 704.1h1.6M1601.2 697.6h1.6M1612.5 701.8h1.6M1599.0 707.3h1.6M1595.0 704.7h1.6M1612.2 705.3h1.6M1590.3 706.2h1.6M1605.8 699.7h1.6M1614.6 709.0h1.6M1596.5 697.7h1.6M1612.8 706.2h1.6M1604.0 700.8h1.6M1600.4 708.0h1.6M1591.9 701.7h1.6M1599.0 710.6h1.6M1595.3 698.5h1.6M1599.7 696.7h1.6M1594.7 704.0h1.6M1602.3 707.5h1.6M1604.1 699.7h1.6M1592.6 698.5h1.6M1608.1 703.1h1.6M1605.6 705.2h1.6M1604.8 697.8h1.6M1593.0 701.0h1.6" stroke="#2c1aec" stroke-width="1.6" opacity="0.82" fill="none"/><path d="M1387.6 659.9h1.7M1384.0 645.0h1.7M1386.3 659.5h1.7M1386.5 657.3h1.7M1384.1 661.8h1.7M1391.0 660.2h1.7M1387.7 661.3h1.7M1389.3 653.3h1.7M1386.1 655.7h1.7M1384.9 650.1h1.7M1389.6 658.7h1.7M1387.7 659.3h1.7M1396.2 649.8h1.7M1390.2 651.1h1.7M1386.1 656.3h1.7M1378.3 658.2h1.7M1392.8 657.9h1.7M1391.9 663.7h1.7M1387.3 660.4h1.7M1395.5 657.7h1.7M1380.9 654.8h1.7M1387.7 648.2h1.7M1388.7 658.9h1.7M1387.8 654.7h1.7M1395.6 652.7h1.7M1384.7 655.7h1.7M1394.1 658.2h1.7M1389.3 653.3h1.7M1394.6 659.5h1.7M1381.2 657.0h1.7M1378.1 662.2h1.7M1391.8 652.7h1.7M1383.2 654.1h1.7M1381.1 658.0h1.7M1386.7 647.5h1.7M1388.9 660.8h1.7M1383.3 653.9h1.7M1397.2 656.3h1.7M1386.5 656.3h1.7M1392.5 651.0h1.7M1388.6 648.1h1.7M1381.8 648.6h1.7M1392.8 656.9h1.7M1392.3 661.0h1.7M1389.2 656.6h1.7M1390.8 657.6h1.7M1384.2 654.3h1.7M1388.3 655.7h1.7M1385.6 654.9h1.7M1390.3 656.3h1.7M1391.7 659.2h1.7M1391.5 659.9h1.7M1392.8 661.8h1.7M1391.8 652.7h1.7M1399.5 660.6h1.7M1394.6 658.8h1.7M1389.2 650.3h1.7M1391.0 653.9h1.7M1387.2 645.9h1.7M1396.0 650.2h1.7M1384.0 657.6h1.7M1391.6 651.9h1.7M1389.0 656.6h1.7M1389.7 657.9h1.7M1392.5 653.8h1.7M1381.7 665.3h1.7M1387.3 651.0h1.7M1392.4 658.1h1.7M1386.2 666.1h1.7M1378.4 661.3h1.7M1388.8 656.9h1.7M1390.4 654.4h1.7M1390.4 649.6h1.7M1387.2 663.8h1.7M1377.4 661.1h1.7M1378.9 651.6h1.7M1393.0 653.7h1.7M1386.4 648.7h1.7M1388.5 654.7h1.7M1386.1 648.4h1.7M1389.7 657.4h1.7M1394.1 657.8h1.7M1395.9 660.9h1.7M1376.2 663.0h1.7M1388.5 650.8h1.7M1391.0 659.8h1.7M1382.0 649.9h1.7M1392.1 653.0h1.7M1395.6 656.5h1.7M1386.5 649.5h1.7M1391.7 647.7h1.7M1383.1 649.6h1.7M1396.7 663.2h1.7M1388.0 653.8h1.7M1392.2 661.1h1.7M1385.3 665.4h1.7M1388.1 660.6h1.7M1378.3 655.3h1.7M1385.8 664.5h1.7M1388.0 649.7h1.7M1397.8 652.4h1.7M1389.0 649.8h1.7M1392.1 656.4h1.7M1387.7 653.7h1.7M1386.4 652.2h1.7M1382.6 660.9h1.7M1393.0 649.2h1.7M1383.7 657.3h1.7M1399.2 654.6h1.7M1387.6 654.4h1.7M1390.1 654.7h1.7M1393.9 659.9h1.7M1391.5 662.6h1.7M1387.9 653.0h1.7M1402.4 646.8h1.7M1381.9 644.9h1.7M1390.6 650.7h1.7M1393.8 646.0h1.7M1388.4 653.7h1.7M1384.1 660.5h1.7M1387.2 657.5h1.7M1386.6 656.2h1.7M1387.0 655.8h1.7M1388.5 652.4h1.7M1391.0 654.7h1.7M1384.6 650.8h1.7M1391.0 661.5h1.7M1383.1 653.6h1.7M1391.0 660.2h1.7M1392.2 650.1h1.7M1389.2 659.6h1.7M1390.1 654.5h1.7M1383.7 656.2h1.7M1388.7 655.6h1.7M1395.8 660.9h1.7M1385.4 656.5h1.7M1387.6 655.9h1.7M1396.4 659.6h1.7M1389.2 652.5h1.7M1388.3 657.1h1.7M1386.7 660.5h1.7M1389.1 650.2h1.7M1398.2 642.4h1.7M1387.8 654.9h1.7M1393.5 660.5h1.7M1395.6 662.5h1.7M1390.4 656.0h1.7M1393.6 655.4h1.7M1383.3 653.4h1.7M1392.0 658.3h1.7M1384.0 660.9h1.7M1390.4 648.7h1.7M1391.1 660.0h1.7M1391.4 654.1h1.7M1385.4 660.6h1.7M1390.0 655.5h1.7M1387.2 650.8h1.7M1380.5 653.9h1.7M1394.0 658.9h1.7M1385.9 662.4h1.7M1388.0 651.0h1.7M1393.4 661.7h1.7M1387.2 650.0h1.7M1388.7 644.5h1.7M1389.2 662.4h1.7M1390.2 652.2h1.7M1392.2 653.3h1.7M1394.7 653.9h1.7M1398.2 653.9h1.7M1389.9 651.3h1.7M1383.2 657.1h1.7M1390.6 651.1h1.7M1391.5 653.6h1.7M1386.5 655.2h1.7M1390.8 658.8h1.7M1394.6 657.2h1.7M1385.7 652.4h1.7M1390.7 650.1h1.7M1388.2 653.8h1.7M1388.6 656.3h1.7M1393.7 662.9h1.7M1393.0 660.1h1.7M1384.2 660.2h1.7M1394.9 649.4h1.7M1400.4 652.9h1.7M1378.2 663.5h1.7M1389.3 651.9h1.7M1386.4 660.3h1.7M1390.2 653.8h1.7M1394.2 651.3h1.7M1385.2 653.0h1.7M1385.6 658.6h1.7M1388.0 650.7h1.7M1386.9 646.5h1.7M1389.7 656.0h1.7M1391.8 654.4h1.7M1390.8 651.3h1.7M1389.1 656.2h1.7M1383.5 658.1h1.7M1389.6 655.7h1.7M1386.8 664.5h1.7M1389.0 652.0h1.7M1385.2 658.2h1.7M1388.1 651.9h1.7M1385.7 659.7h1.7M1389.4 660.2h1.7M1388.9 650.2h1.7M1392.9 656.9h1.7M1386.0 654.1h1.7M1384.6 659.2h1.7M1387.1 657.7h1.7M1390.2 654.3h1.7M1390.7 654.4h1.7M1383.7 653.6h1.7M1383.7 658.9h1.7M1391.9 652.9h1.7M1391.8 656.6h1.7M1393.4 651.3h1.7M1389.1 651.0h1.7M1385.9 661.7h1.7M1379.9 651.4h1.7M1391.2 659.0h1.7M1385.5 646.4h1.7M1381.3 657.1h1.7M1394.0 659.6h1.7M1385.7 661.6h1.7M1388.2 658.3h1.7M1388.1 662.7h1.7M1386.7 645.8h1.7M1387.6 656.4h1.7" stroke="#e0e0e6" stroke-width="1.7" opacity="0.95" fill="none"/><path d="M1392.8 651.6h1.5M1387.7 648.5h1.5M1387.7 657.6h1.5M1392.4 669.3h1.5M1370.0 660.9h1.5M1394.3 648.3h1.5M1390.7 656.9h1.5M1380.0 662.4h1.5M1409.1 662.0h1.5M1397.8 665.0h1.5M1388.7 664.3h1.5M1381.9 658.3h1.5M1397.0 666.8h1.5M1387.1 654.8h1.5M1394.7 656.4h1.5M1391.4 663.0h1.5M1382.4 663.6h1.5M1393.8 655.0h1.5M1377.5 652.3h1.5M1389.6 664.0h1.5M1370.4 662.3h1.5M1391.9 648.5h1.5M1398.5 660.0h1.5M1394.3 649.7h1.5M1379.0 663.8h1.5M1404.0 659.7h1.5M1388.1 653.6h1.5M1372.9 664.3h1.5M1389.0 666.2h1.5M1382.8 664.8h1.5M1382.9 661.4h1.5M1403.7 651.7h1.5M1399.0 656.9h1.5M1380.7 658.5h1.5M1396.4 651.7h1.5M1387.3 652.8h1.5M1382.4 655.4h1.5M1398.2 653.3h1.5M1402.4 654.2h1.5M1383.1 665.0h1.5M1404.0 652.1h1.5M1395.8 648.3h1.5M1386.0 654.2h1.5M1397.0 647.7h1.5M1384.9 651.9h1.5M1391.0 647.9h1.5M1376.7 678.0h1.5M1392.1 645.8h1.5M1398.3 647.2h1.5M1371.3 669.4h1.5M1402.4 650.8h1.5M1379.2 660.5h1.5M1410.1 661.5h1.5M1396.5 648.2h1.5M1372.4 659.9h1.5M1400.0 658.0h1.5M1389.9 667.3h1.5M1381.7 665.1h1.5M1398.2 652.4h1.5M1391.2 657.8h1.5M1395.7 649.8h1.5M1387.7 657.7h1.5M1390.3 657.2h1.5M1392.5 655.6h1.5M1385.1 664.6h1.5M1383.6 654.6h1.5M1381.3 648.5h1.5M1394.4 656.7h1.5M1388.7 660.3h1.5M1388.3 662.0h1.5M1407.8 659.6h1.5M1387.4 669.2h1.5M1397.0 644.7h1.5M1403.1 658.6h1.5M1398.4 648.5h1.5M1381.6 652.2h1.5M1395.4 648.7h1.5M1383.0 664.0h1.5M1383.7 657.9h1.5M1381.1 644.4h1.5M1389.2 656.1h1.5M1375.9 664.2h1.5M1398.1 663.5h1.5M1385.0 648.5h1.5M1389.1 658.2h1.5M1388.3 652.7h1.5M1380.2 651.6h1.5M1389.2 653.4h1.5M1406.4 655.0h1.5M1394.4 653.6h1.5M1388.2 649.8h1.5M1385.2 646.0h1.5M1369.6 666.9h1.5M1379.6 660.2h1.5M1388.8 652.8h1.5M1397.1 652.9h1.5M1394.3 654.3h1.5M1399.5 664.0h1.5M1390.6 665.1h1.5M1394.9 668.5h1.5M1388.8 645.6h1.5M1392.1 658.7h1.5M1386.4 655.5h1.5M1387.3 647.8h1.5M1406.8 651.3h1.5M1379.5 645.4h1.5M1381.7 656.7h1.5M1404.5 661.4h1.5M1382.9 647.8h1.5M1379.0 656.4h1.5" stroke="#bcbcc6" stroke-width="1.5" opacity="0.8" fill="none"/><path d="M1321.4 333.6h1.8M1324.3 345.5h1.8M1318.6 325.4h1.8M1322.3 335.5h1.8M1320.6 340.8h1.8M1314.0 336.3h1.8M1318.7 332.3h1.8M1320.7 335.4h1.8M1316.4 345.2h1.8M1318.6 344.0h1.8M1317.4 341.1h1.8M1315.0 336.7h1.8M1322.2 325.3h1.8M1320.1 334.7h1.8M1322.3 336.9h1.8M1317.7 329.7h1.8M1329.5 332.4h1.8M1316.7 332.5h1.8M1316.8 337.1h1.8M1312.8 341.2h1.8M1317.0 338.9h1.8M1309.7 333.4h1.8M1316.8 334.1h1.8M1315.4 337.5h1.8M1319.6 331.2h1.8M1310.3 339.6h1.8M1316.7 341.2h1.8M1321.4 335.5h1.8M1312.4 334.2h1.8M1315.1 342.1h1.8M1311.4 340.5h1.8M1312.0 333.2h1.8M1312.5 332.6h1.8M1316.3 337.8h1.8M1315.7 339.4h1.8M1324.8 336.8h1.8M1313.5 335.1h1.8M1317.6 334.2h1.8M1322.5 341.6h1.8M1325.8 338.6h1.8M1307.6 335.3h1.8M1320.6 332.0h1.8M1315.6 340.4h1.8M1318.5 330.5h1.8M1315.7 320.9h1.8M1318.0 330.0h1.8M1317.8 330.2h1.8M1314.4 333.5h1.8M1328.8 330.2h1.8M1313.3 333.3h1.8M1322.1 339.9h1.8M1320.7 334.4h1.8M1318.5 332.2h1.8M1317.3 332.0h1.8M1312.3 331.1h1.8M1325.5 337.9h1.8M1315.0 335.4h1.8M1316.2 342.0h1.8M1317.9 332.9h1.8M1320.6 337.5h1.8M1315.3 332.2h1.8M1318.5 328.0h1.8M1314.4 340.9h1.8M1321.3 341.4h1.8M1316.2 333.1h1.8M1316.9 333.6h1.8M1323.0 334.9h1.8M1323.2 332.5h1.8M1319.4 343.9h1.8M1315.1 332.8h1.8M1315.6 328.1h1.8M1316.8 332.8h1.8M1326.6 333.6h1.8M1309.6 340.6h1.8M1321.7 335.8h1.8M1319.1 339.5h1.8M1315.8 336.2h1.8M1318.5 344.1h1.8M1323.5 336.8h1.8M1312.7 340.3h1.8M1317.7 341.7h1.8M1318.2 336.9h1.8M1320.5 332.4h1.8M1315.4 347.2h1.8M1314.6 340.5h1.8M1320.6 340.0h1.8M1323.3 329.4h1.8M1321.7 325.9h1.8M1318.2 337.6h1.8M1322.0 341.3h1.8M1314.3 334.6h1.8M1317.3 332.6h1.8M1314.8 332.7h1.8M1322.4 342.6h1.8M1320.9 344.2h1.8M1318.3 330.7h1.8M1315.4 337.0h1.8M1322.0 341.9h1.8M1314.5 340.7h1.8M1315.9 338.9h1.8M1321.5 343.2h1.8M1315.9 337.2h1.8M1319.6 333.9h1.8M1318.3 338.9h1.8M1311.5 332.8h1.8M1326.9 338.2h1.8M1315.8 327.0h1.8M1314.2 338.5h1.8M1320.6 338.2h1.8M1320.3 333.0h1.8M1324.2 330.5h1.8M1319.9 334.7h1.8M1311.3 340.4h1.8M1316.9 339.5h1.8M1322.9 336.8h1.8M1315.4 334.9h1.8M1317.7 343.1h1.8M1321.3 343.8h1.8M1320.9 332.2h1.8M1321.6 340.7h1.8" stroke="#d01838" stroke-width="1.8" opacity="0.9" fill="none"/><path d="M1608.6 705.4h1.9M1608.5 698.8h1.9M1608.6 706.6h1.9M1609.0 695.2h1.9M1602.9 706.5h1.9M1610.7 708.4h1.9M1604.5 701.1h1.9M1603.0 699.4h1.9M1613.7 705.4h1.9M1606.0 704.2h1.9M1600.3 700.3h1.9M1599.8 695.9h1.9M1600.5 697.6h1.9M1620.7 711.7h1.9M1619.9 704.1h1.9M1615.6 700.9h1.9M1605.6 703.9h1.9M1597.6 701.9h1.9M1616.3 697.5h1.9M1591.6 698.7h1.9M1608.8 704.3h1.9M1600.8 704.1h1.9M1611.4 701.5h1.9M1622.1 707.8h1.9M1613.9 712.0h1.9M1606.3 702.3h1.9M1596.9 700.1h1.9M1611.1 713.9h1.9M1614.0 705.7h1.9M1601.0 698.6h1.9M1597.0 695.7h1.9M1610.5 705.3h1.9M1603.1 701.6h1.9M1603.3 704.8h1.9M1615.2 703.0h1.9M1607.4 698.7h1.9M1604.5 711.1h1.9M1609.0 707.1h1.9M1613.0 710.4h1.9M1608.2 700.1h1.9M1617.0 709.1h1.9M1603.9 706.8h1.9M1609.8 703.8h1.9M1623.4 709.1h1.9M1612.5 703.4h1.9M1610.5 708.2h1.9M1614.0 702.0h1.9M1613.4 704.3h1.9M1612.4 703.8h1.9M1594.7 694.2h1.9M1608.8 695.2h1.9M1596.7 708.7h1.9M1615.5 703.5h1.9M1614.2 696.3h1.9M1610.9 708.0h1.9M1612.4 699.5h1.9M1617.7 703.7h1.9M1605.4 703.7h1.9M1605.9 710.9h1.9M1607.0 711.6h1.9M1614.4 700.2h1.9M1609.8 704.2h1.9M1619.7 711.2h1.9M1629.9 706.0h1.9M1604.6 711.7h1.9M1602.8 703.7h1.9M1623.0 703.1h1.9M1607.9 700.6h1.9M1613.5 706.4h1.9M1609.0 706.3h1.9M1604.2 701.2h1.9M1611.7 712.2h1.9M1609.5 704.1h1.9M1619.8 706.6h1.9M1619.6 707.1h1.9M1618.5 706.7h1.9M1603.6 699.2h1.9M1611.5 711.6h1.9M1624.3 706.1h1.9M1629.9 704.3h1.9M1602.6 705.9h1.9M1597.5 704.6h1.9M1612.2 706.9h1.9M1600.4 703.3h1.9M1617.1 705.4h1.9M1617.7 705.9h1.9M1612.8 703.4h1.9M1599.7 701.0h1.9M1614.3 702.1h1.9M1596.3 694.8h1.9M1620.1 705.5h1.9M1603.0 707.2h1.9M1609.8 698.1h1.9M1607.3 699.9h1.9M1609.2 700.3h1.9M1610.0 705.8h1.9M1605.7 702.2h1.9M1608.0 706.7h1.9M1603.8 705.5h1.9M1619.6 705.5h1.9M1602.8 701.1h1.9M1596.8 698.8h1.9M1600.9 701.2h1.9M1606.6 705.2h1.9M1610.4 705.7h1.9M1609.3 704.9h1.9M1600.7 704.4h1.9M1618.9 710.4h1.9M1599.2 703.1h1.9M1596.8 703.9h1.9M1608.7 701.9h1.9M1604.4 701.8h1.9M1610.7 700.4h1.9M1610.1 705.0h1.9M1613.9 704.7h1.9M1607.9 712.5h1.9M1617.3 707.0h1.9M1598.7 703.8h1.9M1616.5 695.2h1.9M1608.3 705.1h1.9M1610.1 704.4h1.9M1607.5 708.8h1.9M1613.0 703.6h1.9M1606.4 711.3h1.9M1603.7 700.5h1.9M1612.3 705.1h1.9M1611.0 709.5h1.9M1618.2 707.5h1.9M1610.3 703.8h1.9M1607.3 707.3h1.9M1601.1 697.9h1.9M1607.2 699.6h1.9M1603.2 707.1h1.9M1592.1 702.1h1.9M1600.0 700.8h1.9M1606.3 699.3h1.9M1598.4 701.6h1.9M1589.0 690.9h1.9M1606.0 707.4h1.9M1624.4 706.2h1.9M1604.0 701.5h1.9M1612.7 708.3h1.9M1602.2 704.0h1.9M1608.7 708.2h1.9M1606.9 702.5h1.9M1604.5 697.6h1.9M1611.4 707.1h1.9M1618.3 707.0h1.9M1607.1 699.8h1.9M1601.6 699.2h1.9M1612.4 704.9h1.9M1592.4 699.5h1.9M1608.6 699.6h1.9M1609.3 705.9h1.9M1603.1 697.1h1.9M1607.2 704.4h1.9M1606.6 709.2h1.9M1611.9 700.5h1.9M1616.4 703.0h1.9M1615.1 705.6h1.9M1620.2 702.5h1.9M1615.1 706.8h1.9M1602.3 705.0h1.9M1627.1 709.3h1.9M1604.1 702.1h1.9M1619.7 707.2h1.9M1621.9 704.2h1.9M1621.4 700.5h1.9M1608.9 702.6h1.9M1605.1 707.6h1.9M1605.0 704.2h1.9M1623.5 710.3h1.9M1607.4 700.5h1.9M1594.1 701.8h1.9M1615.8 709.7h1.9M1610.0 712.4h1.9M1617.9 696.8h1.9M1602.4 705.4h1.9M1606.1 706.4h1.9M1630.4 705.7h1.9M1627.1 707.6h1.9M1598.5 701.7h1.9M1617.4 703.5h1.9M1622.9 703.6h1.9M1607.7 707.1h1.9M1608.8 701.5h1.9M1609.2 706.4h1.9M1622.2 712.1h1.9M1624.5 707.2h1.9M1597.1 700.9h1.9M1607.6 699.6h1.9M1606.0 702.8h1.9M1609.6 707.5h1.9M1601.9 706.6h1.9M1609.7 706.8h1.9M1620.7 701.6h1.9M1622.9 704.2h1.9M1612.1 708.7h1.9M1618.4 699.8h1.9M1610.3 708.5h1.9M1609.1 703.5h1.9M1609.1 710.2h1.9M1606.6 699.5h1.9M1601.8 700.1h1.9M1607.8 704.9h1.9M1610.8 697.5h1.9M1597.2 703.7h1.9M1616.8 700.3h1.9M1619.3 696.7h1.9M1627.5 710.3h1.9M1596.6 702.9h1.9M1610.1 702.3h1.9M1607.3 702.5h1.9M1610.0 700.5h1.9M1605.1 705.0h1.9M1615.2 700.0h1.9M1604.8 708.9h1.9M1614.1 711.4h1.9M1600.4 697.7h1.9M1594.8 692.9h1.9M1608.0 699.4h1.9M1602.1 699.5h1.9M1607.8 706.7h1.9M1615.9 698.5h1.9M1621.9 705.5h1.9M1602.2 702.1h1.9M1608.1 698.1h1.9M1622.6 704.7h1.9M1604.8 704.9h1.9M1622.6 708.8h1.9M1602.6 704.0h1.9M1618.3 707.4h1.9M1615.5 703.4h1.9M1610.9 697.6h1.9M1605.4 698.5h1.9M1608.8 709.6h1.9M1593.6 695.1h1.9M1602.8 702.0h1.9M1619.7 703.2h1.9M1602.8 707.1h1.9M1612.4 706.6h1.9M1617.1 702.8h1.9M1612.3 702.0h1.9M1604.2 703.2h1.9M1614.5 700.1h1.9M1603.5 704.9h1.9M1610.7 706.8h1.9M1608.2 700.4h1.9M1615.6 707.6h1.9M1587.1 702.1h1.9M1603.5 705.1h1.9M1622.5 705.8h1.9M1602.2 703.2h1.9M1610.2 706.3h1.9M1598.8 702.4h1.9M1616.4 708.2h1.9M1613.9 709.6h1.9M1602.5 707.1h1.9M1612.5 700.7h1.9M1607.4 704.5h1.9M1611.4 709.6h1.9M1611.9 702.4h1.9M1627.4 706.7h1.9M1602.8 706.0h1.9M1607.4 700.3h1.9M1600.7 706.5h1.9M1601.6 702.5h1.9M1606.6 702.5h1.9M1603.5 703.1h1.9M1613.8 709.0h1.9M1608.2 699.0h1.9M1598.4 701.4h1.9M1589.4 704.5h1.9M1610.1 704.5h1.9M1599.6 699.1h1.9M1603.6 705.2h1.9M1606.3 705.6h1.9M1615.7 697.8h1.9M1607.1 708.3h1.9M1605.9 703.6h1.9M1610.1 699.2h1.9M1627.2 707.5h1.9M1615.4 703.5h1.9M1620.0 710.8h1.9M1618.4 709.7h1.9M1614.3 710.4h1.9M1613.0 705.3h1.9M1617.1 702.2h1.9M1589.4 702.4h1.9M1611.8 701.7h1.9M1608.7 700.0h1.9M1603.3 703.2h1.9M1610.2 707.3h1.9M1608.7 706.2h1.9M1615.9 702.7h1.9M1597.4 698.4h1.9M1608.5 701.6h1.9M1627.9 705.5h1.9M1614.4 702.1h1.9M1616.5 700.6h1.9" stroke="#2a18e8" stroke-width="1.9" opacity="0.9" fill="none"/><path d="M1543.4 383.8h1.8M1541.4 373.8h1.8M1548.3 381.1h1.8M1552.0 370.7h1.8M1530.5 388.6h1.8M1547.2 384.6h1.8M1542.5 386.3h1.8M1538.2 381.1h1.8M1538.7 371.6h1.8M1538.6 385.3h1.8M1543.7 374.7h1.8M1543.2 383.2h1.8M1543.8 380.9h1.8M1536.2 386.3h1.8M1548.6 377.1h1.8M1533.0 384.2h1.8M1541.3 382.0h1.8M1533.4 384.7h1.8M1540.2 382.6h1.8M1542.9 379.0h1.8M1541.3 382.5h1.8M1542.0 384.5h1.8M1536.5 374.8h1.8M1535.9 386.9h1.8M1534.4 386.0h1.8M1542.2 387.9h1.8M1549.2 385.3h1.8M1538.2 388.3h1.8M1539.1 387.2h1.8M1535.9 388.5h1.8M1546.2 371.4h1.8M1544.9 382.1h1.8M1537.1 377.8h1.8M1535.9 386.8h1.8M1541.5 381.3h1.8M1542.2 376.2h1.8M1538.5 377.3h1.8M1542.0 374.3h1.8M1535.8 385.7h1.8M1541.8 381.9h1.8M1542.0 380.4h1.8M1532.9 383.6h1.8M1547.9 388.1h1.8M1536.6 395.7h1.8M1533.7 381.6h1.8M1539.3 378.9h1.8M1533.4 377.5h1.8M1545.6 373.2h1.8M1540.3 378.0h1.8M1534.3 382.6h1.8M1545.6 386.5h1.8M1542.3 387.2h1.8M1538.2 384.1h1.8M1546.5 381.3h1.8M1542.8 373.3h1.8M1534.4 373.1h1.8M1542.7 384.8h1.8M1537.7 388.7h1.8M1529.2 385.2h1.8M1538.3 385.4h1.8M1547.7 379.3h1.8M1535.4 381.6h1.8M1541.2 377.8h1.8M1541.3 376.9h1.8M1541.5 379.3h1.8M1549.6 378.7h1.8M1542.2 382.6h1.8M1548.9 378.9h1.8M1533.7 389.5h1.8M1538.2 377.8h1.8M1540.8 375.0h1.8M1541.1 391.6h1.8M1541.2 376.7h1.8M1532.8 382.1h1.8M1536.4 383.0h1.8M1531.2 374.2h1.8M1541.5 384.5h1.8M1527.5 377.2h1.8M1540.5 381.2h1.8M1539.7 378.0h1.8M1539.3 384.1h1.8M1527.0 375.0h1.8M1544.3 381.7h1.8M1547.3 378.4h1.8M1545.4 389.9h1.8M1531.4 395.1h1.8M1541.9 392.4h1.8M1535.4 378.2h1.8M1539.3 387.6h1.8M1543.5 374.2h1.8M1545.4 382.5h1.8M1542.6 380.2h1.8M1543.0 373.5h1.8M1544.3 379.0h1.8M1531.7 379.9h1.8M1537.4 386.2h1.8M1546.4 376.1h1.8M1539.2 380.7h1.8M1543.0 375.6h1.8M1537.8 386.5h1.8M1541.4 391.3h1.8M1549.4 368.9h1.8M1540.2 377.6h1.8M1524.2 383.8h1.8M1543.7 382.8h1.8M1540.2 384.4h1.8M1535.6 388.0h1.8M1545.4 389.0h1.8M1537.1 381.4h1.8M1542.2 386.8h1.8M1534.8 384.9h1.8M1541.5 385.6h1.8M1538.3 380.1h1.8M1532.2 377.3h1.8M1538.9 378.6h1.8M1539.6 378.8h1.8M1540.1 381.8h1.8M1537.8 379.2h1.8M1538.4 383.5h1.8M1542.7 380.0h1.8M1540.7 370.7h1.8M1533.8 380.9h1.8M1532.2 388.0h1.8M1540.3 378.7h1.8M1540.7 377.8h1.8M1537.2 380.2h1.8M1533.7 379.0h1.8M1541.9 376.0h1.8M1543.3 385.0h1.8M1546.1 379.5h1.8M1537.9 372.3h1.8M1538.3 367.9h1.8M1547.6 381.5h1.8M1542.1 378.6h1.8M1535.4 389.3h1.8M1535.3 372.4h1.8M1542.8 376.4h1.8M1539.6 389.3h1.8M1541.8 386.8h1.8M1536.8 386.1h1.8M1539.7 373.1h1.8M1539.5 379.2h1.8M1547.5 378.1h1.8M1546.6 379.1h1.8M1539.1 369.5h1.8M1543.5 373.2h1.8M1540.7 381.7h1.8M1543.2 369.9h1.8M1536.7 382.5h1.8M1530.9 381.4h1.8M1541.4 378.2h1.8M1539.2 384.9h1.8M1541.8 376.8h1.8M1544.9 378.9h1.8M1539.0 387.0h1.8M1541.3 392.1h1.8M1543.8 383.8h1.8M1538.7 381.7h1.8M1534.7 398.1h1.8M1544.7 377.9h1.8M1550.2 375.4h1.8M1547.3 376.1h1.8M1536.8 376.3h1.8M1542.2 373.2h1.8M1542.8 381.6h1.8M1548.0 378.1h1.8M1530.9 381.3h1.8M1536.6 385.9h1.8M1533.6 369.9h1.8M1535.5 391.7h1.8" stroke="#c020d0" stroke-width="1.8" opacity="0.9" fill="none"/><path d="M1234.5 916.5h1.8M1231.8 928.2h1.8M1244.5 924.5h1.8M1236.8 918.1h1.8M1234.4 920.2h1.8M1235.7 929.4h1.8M1245.9 929.3h1.8M1238.8 927.5h1.8M1233.1 931.1h1.8M1236.0 931.3h1.8M1235.7 928.3h1.8M1238.1 925.9h1.8M1234.0 922.2h1.8M1236.7 923.9h1.8M1235.9 922.1h1.8M1239.8 926.2h1.8M1235.9 924.1h1.8M1242.0 926.4h1.8M1243.0 925.6h1.8M1240.9 930.3h1.8M1233.3 925.3h1.8M1242.1 924.7h1.8M1234.6 925.4h1.8M1235.7 923.7h1.8M1235.5 926.0h1.8M1236.5 931.2h1.8M1229.7 933.1h1.8M1231.6 929.6h1.8M1238.0 920.4h1.8M1234.9 923.0h1.8M1243.7 921.4h1.8M1233.8 923.2h1.8M1237.9 927.7h1.8M1239.6 926.5h1.8M1233.0 928.1h1.8M1242.1 930.0h1.8M1238.1 922.8h1.8M1243.5 931.0h1.8M1241.2 921.6h1.8M1234.2 933.7h1.8M1235.7 924.0h1.8M1242.3 927.9h1.8M1235.9 932.7h1.8M1232.9 919.9h1.8M1238.4 926.9h1.8M1236.5 924.6h1.8M1235.9 926.4h1.8M1234.6 923.1h1.8M1238.8 922.3h1.8M1241.5 919.4h1.8M1238.7 926.1h1.8M1229.1 926.4h1.8M1227.9 928.6h1.8M1231.1 927.0h1.8M1233.0 929.7h1.8M1233.4 927.6h1.8M1238.0 918.7h1.8M1236.7 927.3h1.8M1234.7 930.9h1.8M1235.6 919.1h1.8M1238.2 923.5h1.8M1235.6 924.8h1.8M1230.9 926.5h1.8M1232.4 930.1h1.8M1235.1 928.8h1.8M1236.0 922.4h1.8M1235.5 921.2h1.8M1237.5 926.4h1.8M1234.5 918.0h1.8M1235.8 917.6h1.8M1235.2 918.5h1.8M1240.8 923.1h1.8M1233.9 923.3h1.8M1235.4 926.4h1.8M1237.9 928.7h1.8M1232.5 928.0h1.8M1238.7 923.7h1.8M1243.9 924.8h1.8M1235.7 929.9h1.8M1235.9 926.3h1.8M1235.3 927.3h1.8M1236.9 925.5h1.8M1242.0 920.9h1.8M1237.5 924.7h1.8M1243.1 930.3h1.8M1232.3 925.5h1.8M1236.6 920.6h1.8M1234.1 925.9h1.8M1238.8 930.8h1.8M1237.2 925.0h1.8M1234.7 929.1h1.8M1233.5 928.2h1.8M1233.0 923.2h1.8M1237.8 928.9h1.8M1237.7 923.9h1.8M1229.8 919.7h1.8M1233.4 921.9h1.8M1243.4 926.2h1.8M1239.3 926.8h1.8M1231.6 922.9h1.8M1241.0 923.1h1.8M1232.2 921.3h1.8M1239.9 924.8h1.8M1236.8 927.3h1.8M1235.3 926.4h1.8M1241.2 927.3h1.8M1239.1 922.5h1.8M1233.4 923.1h1.8M1240.3 924.8h1.8M1229.1 924.7h1.8M1249.6 922.6h1.8M1231.7 923.0h1.8M1239.5 923.3h1.8M1235.4 929.1h1.8M1233.7 926.6h1.8M1238.1 922.5h1.8M1234.7 921.8h1.8M1239.1 931.4h1.8M1239.6 920.9h1.8M1234.8 922.7h1.8" stroke="#38e048" stroke-width="1.8" opacity="0.95" fill="none"/><path d="M1457.4 977.9h1.8M1465.0 974.1h1.8M1462.5 976.7h1.8M1470.4 980.0h1.8M1466.7 978.3h1.8M1459.6 980.7h1.8M1461.7 972.3h1.8M1466.5 977.0h1.8M1464.0 979.5h1.8M1463.2 979.2h1.8M1468.4 977.1h1.8M1462.8 978.1h1.8M1466.2 976.8h1.8M1464.3 976.0h1.8M1463.8 979.6h1.8M1461.2 977.5h1.8M1459.0 975.9h1.8M1464.3 979.6h1.8M1460.5 977.7h1.8M1460.8 978.9h1.8M1464.9 979.3h1.8M1463.3 973.8h1.8M1462.1 974.0h1.8M1461.7 977.8h1.8M1467.7 976.1h1.8M1461.4 978.6h1.8M1457.0 983.9h1.8M1458.7 981.0h1.8M1467.4 980.9h1.8M1463.7 980.2h1.8M1462.8 980.8h1.8M1461.8 975.6h1.8M1465.3 976.7h1.8M1466.3 975.5h1.8M1464.9 975.1h1.8M1463.7 984.4h1.8M1460.3 974.4h1.8M1458.5 977.3h1.8M1469.5 976.7h1.8M1467.2 977.5h1.8M1461.8 983.9h1.8M1467.7 972.6h1.8M1460.7 979.2h1.8M1466.2 977.3h1.8M1465.1 979.6h1.8M1462.8 981.0h1.8M1461.1 980.2h1.8M1467.1 978.6h1.8M1462.8 977.9h1.8M1456.5 978.8h1.8M1459.2 972.1h1.8M1466.6 975.3h1.8M1465.2 978.1h1.8M1458.0 975.3h1.8M1463.1 979.4h1.8M1464.2 974.3h1.8M1462.2 978.3h1.8M1459.7 976.7h1.8M1462.1 971.7h1.8M1469.9 980.6h1.8" stroke="#40e8d0" stroke-width="1.8" opacity="0.95" fill="none"/><path d="M1234.5 470.7h1.5M1232.1 472.7h1.5M1235.7 467.3h1.5M1235.2 466.9h1.5M1238.0 467.4h1.5M1233.7 469.6h1.5M1238.7 467.5h1.5M1241.0 464.7h1.5M1241.0 467.4h1.5M1242.1 466.3h1.5M1236.0 467.7h1.5M1238.6 474.0h1.5M1236.5 463.5h1.5M1237.9 472.9h1.5M1239.5 466.2h1.5M1240.8 467.9h1.5M1236.8 469.8h1.5M1237.9 456.9h1.5M1236.8 470.2h1.5M1237.7 469.7h1.5M1236.3 471.6h1.5M1235.6 473.5h1.5M1236.2 470.5h1.5M1235.0 467.9h1.5M1238.1 467.9h1.5M1241.6 468.4h1.5M1240.0 469.4h1.5M1241.3 464.0h1.5M1234.8 470.8h1.5M1234.1 468.0h1.5M1238.5 468.3h1.5M1237.7 469.7h1.5M1235.8 468.6h1.5M1236.0 464.7h1.5M1232.4 465.3h1.5M1231.9 465.8h1.5M1238.9 462.5h1.5M1236.9 468.3h1.5M1237.0 462.8h1.5M1236.2 468.7h1.5M1237.6 476.0h1.5M1230.7 466.9h1.5M1239.0 464.6h1.5M1235.6 476.2h1.5M1235.8 472.9h1.5M1240.7 466.0h1.5M1228.8 470.1h1.5M1243.6 460.7h1.5M1237.2 463.9h1.5M1237.5 467.4h1.5M1241.1 465.4h1.5M1244.7 461.2h1.5M1234.6 478.7h1.5M1236.0 469.6h1.5M1231.8 480.8h1.5M1240.1 466.2h1.5M1231.0 466.4h1.5M1241.5 458.8h1.5M1234.9 469.0h1.5M1230.0 464.3h1.5M1233.8 460.0h1.5M1236.9 472.2h1.5M1241.2 465.1h1.5M1240.6 459.8h1.5M1231.9 468.2h1.5M1237.0 462.3h1.5M1231.7 464.5h1.5M1246.0 460.1h1.5M1232.6 471.0h1.5M1232.0 462.8h1.5M1235.9 471.9h1.5M1234.7 474.8h1.5M1237.0 466.5h1.5M1237.9 468.9h1.5M1233.6 461.7h1.5" stroke="#f08028" stroke-width="1.5" opacity="0.95" fill="none"/><path d="M1425.7 356.1h1.6M1421.6 351.2h1.6M1423.2 355.7h1.6M1424.5 357.0h1.6M1429.5 351.8h1.6M1426.4 349.9h1.6M1427.0 358.3h1.6M1423.5 347.3h1.6M1429.7 354.3h1.6M1426.6 356.8h1.6M1428.2 358.9h1.6M1426.3 346.0h1.6M1424.9 353.4h1.6M1424.8 356.2h1.6M1424.9 359.9h1.6M1424.0 354.4h1.6M1423.8 363.0h1.6M1423.1 350.3h1.6M1424.7 357.7h1.6M1427.2 354.3h1.6M1421.4 345.7h1.6M1426.1 353.9h1.6M1435.2 357.9h1.6M1428.4 359.1h1.6M1423.6 349.4h1.6M1424.2 360.5h1.6M1432.1 353.6h1.6M1420.4 357.6h1.6M1433.0 351.6h1.6M1435.2 353.3h1.6M1430.7 354.8h1.6M1425.9 352.3h1.6M1429.9 358.0h1.6M1431.1 354.6h1.6M1421.5 362.7h1.6M1435.4 355.7h1.6M1420.5 359.9h1.6M1427.6 355.3h1.6M1430.9 357.1h1.6M1426.2 362.9h1.6M1417.5 355.9h1.6M1422.2 354.5h1.6M1426.0 355.9h1.6M1414.9 355.7h1.6M1438.5 355.4h1.6M1430.9 358.2h1.6M1428.8 353.3h1.6M1429.9 356.6h1.6M1433.4 359.5h1.6M1425.6 343.0h1.6M1433.9 358.2h1.6M1428.3 352.8h1.6M1438.2 362.4h1.6M1427.7 353.6h1.6M1428.8 360.8h1.6M1428.9 359.1h1.6M1428.0 356.6h1.6M1420.8 354.4h1.6M1427.3 354.8h1.6M1425.6 356.0h1.6M1424.3 353.7h1.6M1419.1 363.0h1.6M1423.5 349.5h1.6M1424.7 352.9h1.6M1423.5 344.5h1.6M1434.3 360.4h1.6M1424.8 356.9h1.6M1422.7 347.7h1.6M1428.2 357.6h1.6M1423.7 354.4h1.6M1412.2 351.9h1.6M1432.0 356.6h1.6M1427.5 357.4h1.6M1417.7 348.2h1.6M1420.6 354.9h1.6M1425.3 347.1h1.6M1431.5 355.0h1.6M1430.5 363.7h1.6M1419.8 348.6h1.6M1431.3 361.5h1.6M1428.7 356.8h1.6M1429.9 358.2h1.6M1420.3 356.8h1.6M1432.1 354.3h1.6M1422.9 352.3h1.6M1423.8 356.6h1.6M1430.8 355.8h1.6M1426.7 347.8h1.6M1425.6 350.7h1.6M1424.1 355.9h1.6M1425.4 368.9h1.6M1423.1 352.2h1.6M1421.6 353.0h1.6M1424.9 358.7h1.6M1416.8 356.9h1.6M1430.5 353.5h1.6M1423.5 355.2h1.6M1429.7 354.8h1.6M1426.2 354.9h1.6M1421.5 355.1h1.6M1429.8 355.7h1.6M1421.4 354.0h1.6M1426.2 356.1h1.6M1424.4 357.9h1.6M1431.7 359.2h1.6M1427.3 360.0h1.6M1426.9 354.3h1.6M1420.0 353.8h1.6M1433.6 352.3h1.6M1431.7 350.7h1.6M1427.2 362.4h1.6M1428.0 350.5h1.6M1428.5 354.7h1.6M1431.2 353.7h1.6M1418.8 351.7h1.6M1429.2 359.5h1.6M1428.3 355.3h1.6M1430.5 354.8h1.6M1424.6 355.5h1.6M1432.7 354.0h1.6M1429.8 352.9h1.6M1423.3 355.0h1.6M1421.1 350.6h1.6M1421.6 351.6h1.6M1420.9 363.2h1.6M1429.9 355.8h1.6M1422.1 344.7h1.6M1429.6 353.0h1.6M1432.4 354.4h1.6M1421.0 351.4h1.6" stroke="#e01890" stroke-width="1.6" opacity="0.95" fill="none"/><path d="M1575.9 537.9h1.8M1581.8 542.4h1.8M1581.7 542.2h1.8M1579.8 542.7h1.8M1579.0 542.2h1.8M1584.1 545.0h1.8M1579.1 557.5h1.8M1585.2 552.4h1.8M1580.6 545.1h1.8M1580.1 547.0h1.8M1582.0 545.8h1.8M1578.0 540.4h1.8M1586.8 555.8h1.8M1577.5 542.6h1.8M1581.7 549.7h1.8M1581.1 547.6h1.8M1583.3 552.9h1.8M1579.6 553.4h1.8M1582.6 549.2h1.8M1577.5 545.3h1.8M1581.3 550.1h1.8M1583.4 550.0h1.8M1579.9 554.4h1.8M1582.4 551.8h1.8M1580.0 541.7h1.8M1587.5 548.9h1.8M1582.0 542.8h1.8M1582.0 553.0h1.8M1584.2 556.6h1.8M1582.1 538.8h1.8M1579.2 553.9h1.8M1581.9 544.2h1.8M1579.6 542.7h1.8M1584.6 544.2h1.8M1579.2 552.3h1.8M1581.3 548.3h1.8M1580.1 546.0h1.8M1577.6 550.2h1.8M1579.0 544.0h1.8M1583.3 553.8h1.8M1576.2 546.2h1.8M1583.5 552.0h1.8M1579.4 548.4h1.8M1583.0 551.6h1.8M1579.4 545.2h1.8M1581.4 553.3h1.8M1582.7 542.8h1.8M1581.0 547.5h1.8M1578.9 545.8h1.8M1583.8 550.4h1.8M1578.7 542.4h1.8M1578.8 537.1h1.8M1581.8 546.6h1.8M1577.8 545.2h1.8M1579.2 544.7h1.8M1580.9 554.8h1.8M1579.9 551.2h1.8M1583.3 554.8h1.8M1580.9 546.1h1.8M1578.7 534.5h1.8M1585.9 543.7h1.8M1578.8 539.3h1.8M1582.8 555.9h1.8M1579.9 549.1h1.8M1584.4 551.4h1.8M1577.9 535.6h1.8M1582.6 549.3h1.8M1579.7 543.6h1.8M1582.7 535.7h1.8M1579.1 542.6h1.8M1576.7 542.6h1.8M1580.9 554.0h1.8M1575.5 538.5h1.8M1579.5 536.6h1.8M1575.9 543.2h1.8M1577.1 540.7h1.8M1581.2 548.9h1.8M1579.2 544.7h1.8M1582.3 544.8h1.8M1581.8 542.2h1.8M1583.7 553.6h1.8M1581.9 564.8h1.8M1579.8 544.2h1.8M1581.2 549.0h1.8M1578.4 546.9h1.8M1581.6 555.0h1.8M1578.1 550.8h1.8M1579.3 541.7h1.8M1581.0 544.6h1.8M1581.4 547.5h1.8M1583.0 543.1h1.8M1581.1 529.0h1.8M1586.5 552.6h1.8M1584.6 546.6h1.8M1580.3 539.8h1.8M1582.4 538.5h1.8M1579.3 546.4h1.8M1581.9 548.0h1.8M1578.0 544.5h1.8M1583.5 553.0h1.8M1583.2 548.2h1.8M1579.7 542.9h1.8M1579.8 545.8h1.8M1581.5 542.8h1.8M1584.1 539.1h1.8M1582.5 544.5h1.8M1580.2 543.9h1.8M1583.9 543.6h1.8M1582.3 546.6h1.8M1583.3 549.3h1.8M1583.6 540.9h1.8M1581.4 556.7h1.8M1583.8 546.0h1.8M1580.7 547.8h1.8M1582.8 540.9h1.8M1584.0 545.1h1.8M1579.7 543.9h1.8M1576.9 549.0h1.8M1577.4 543.3h1.8M1579.4 547.9h1.8M1582.6 546.0h1.8M1581.9 548.5h1.8M1585.2 548.8h1.8M1584.3 545.0h1.8M1580.9 542.0h1.8M1581.2 540.7h1.8M1581.2 542.1h1.8M1581.8 553.6h1.8M1582.3 550.8h1.8M1578.1 535.0h1.8M1583.9 544.4h1.8M1580.8 552.1h1.8M1577.6 542.2h1.8M1582.6 541.4h1.8M1583.0 543.8h1.8M1580.6 546.6h1.8M1581.3 552.8h1.8M1583.4 546.0h1.8M1583.0 549.1h1.8M1582.6 535.8h1.8M1584.3 551.1h1.8M1580.3 546.3h1.8M1581.8 553.7h1.8M1579.3 550.3h1.8M1584.5 549.0h1.8M1579.4 543.6h1.8M1575.1 540.9h1.8M1582.1 539.9h1.8M1577.2 545.4h1.8M1578.4 549.5h1.8M1580.3 552.2h1.8M1578.9 537.7h1.8M1578.5 542.6h1.8M1580.7 553.9h1.8M1579.3 548.7h1.8M1580.5 549.9h1.8M1575.9 537.4h1.8M1583.9 554.4h1.8M1577.6 544.9h1.8M1578.7 540.7h1.8M1583.1 546.0h1.8M1577.7 545.5h1.8M1582.9 541.3h1.8M1578.8 541.4h1.8M1580.6 542.7h1.8M1581.8 540.7h1.8M1578.4 549.5h1.8M1573.0 541.9h1.8M1581.9 547.5h1.8M1579.2 543.7h1.8M1586.8 568.2h1.8M1579.0 545.4h1.8M1580.7 549.6h1.8M1581.7 549.4h1.8M1584.1 543.7h1.8M1580.8 548.5h1.8M1585.0 543.0h1.8M1586.1 552.4h1.8M1573.8 541.4h1.8M1579.4 548.9h1.8M1583.9 545.8h1.8M1584.1 559.0h1.8M1584.5 558.8h1.8M1581.2 556.4h1.8M1576.8 531.8h1.8M1578.6 543.7h1.8M1581.9 550.7h1.8M1583.1 548.9h1.8M1581.7 557.1h1.8M1583.6 545.8h1.8M1579.7 546.1h1.8M1579.6 542.0h1.8M1580.1 542.1h1.8M1581.5 541.9h1.8M1582.4 547.8h1.8M1582.0 549.2h1.8M1582.1 562.0h1.8M1580.4 550.8h1.8M1580.5 543.5h1.8M1586.1 551.9h1.8" stroke="#7a1cf0" stroke-width="1.8" opacity="0.95" fill="none"/><path d="M1541.9 844.9h1.6M1543.5 850.4h1.6M1545.6 841.6h1.6M1543.2 836.0h1.6M1543.0 846.6h1.6M1541.5 845.4h1.6M1543.6 839.8h1.6M1539.1 847.4h1.6M1548.8 845.8h1.6M1541.0 836.4h1.6M1543.1 845.5h1.6M1548.5 830.2h1.6M1547.4 843.6h1.6M1543.0 844.1h1.6M1542.3 840.5h1.6M1546.8 833.5h1.6M1542.3 844.9h1.6M1539.0 840.7h1.6M1546.5 844.5h1.6M1544.2 846.0h1.6M1543.2 844.0h1.6M1541.1 840.7h1.6M1548.4 836.4h1.6M1543.5 835.5h1.6M1542.2 837.9h1.6M1539.8 842.9h1.6M1540.2 844.5h1.6M1549.3 829.5h1.6M1544.1 831.2h1.6M1542.4 844.0h1.6M1542.6 848.4h1.6M1544.6 833.2h1.6M1547.4 837.7h1.6M1542.5 843.7h1.6M1540.7 842.2h1.6M1547.9 833.9h1.6M1539.2 839.2h1.6M1543.5 835.4h1.6M1536.6 846.0h1.6M1544.9 835.4h1.6M1544.4 841.9h1.6M1544.3 835.2h1.6M1542.1 844.5h1.6M1539.4 836.0h1.6M1543.9 852.7h1.6M1544.7 841.9h1.6M1540.6 839.6h1.6M1542.0 844.3h1.6M1540.5 854.8h1.6M1547.9 831.2h1.6M1540.1 841.6h1.6M1545.1 844.5h1.6M1537.4 832.6h1.6M1545.9 845.6h1.6M1548.7 847.1h1.6M1543.0 850.2h1.6M1542.3 839.1h1.6M1540.3 843.0h1.6M1543.4 847.1h1.6M1546.1 845.8h1.6M1546.2 841.2h1.6M1540.1 845.5h1.6M1544.5 849.4h1.6M1542.9 839.6h1.6M1541.8 843.8h1.6M1543.0 841.1h1.6M1543.8 840.6h1.6M1544.3 839.1h1.6M1539.4 839.9h1.6M1548.3 838.5h1.6M1544.3 849.4h1.6M1541.4 843.2h1.6M1536.9 844.2h1.6M1546.7 843.6h1.6M1538.5 838.3h1.6M1541.1 842.4h1.6M1544.0 840.0h1.6M1542.8 837.7h1.6M1544.3 843.3h1.6M1544.2 839.5h1.6M1544.4 840.7h1.6M1543.8 841.3h1.6M1542.1 836.1h1.6M1539.4 834.3h1.6M1541.7 859.2h1.6M1539.5 837.2h1.6M1540.3 860.7h1.6M1543.3 835.9h1.6M1542.5 853.1h1.6M1536.9 835.0h1.6" stroke="#2878e8" stroke-width="1.6" opacity="0.95" fill="none"/><path d="M1359.6 943.5h1.6M1353.5 946.0h1.6M1357.4 942.1h1.6M1355.4 950.1h1.6M1356.5 951.1h1.6M1354.7 940.5h1.6M1352.5 944.5h1.6M1356.4 947.9h1.6M1354.7 954.3h1.6M1353.5 957.1h1.6M1357.8 941.9h1.6M1351.4 954.9h1.6M1351.7 954.8h1.6M1351.5 948.4h1.6M1358.6 941.4h1.6M1354.3 946.8h1.6M1354.8 957.3h1.6M1356.2 942.5h1.6M1358.3 946.8h1.6M1354.7 954.6h1.6M1352.6 953.6h1.6M1354.8 944.7h1.6M1352.6 942.5h1.6M1359.3 949.8h1.6M1358.4 943.6h1.6M1357.8 943.3h1.6M1355.3 949.0h1.6M1351.3 950.5h1.6M1354.2 944.8h1.6M1350.6 942.7h1.6M1360.2 949.7h1.6M1352.4 952.4h1.6M1350.1 943.4h1.6M1355.6 956.7h1.6M1355.4 949.8h1.6M1361.9 941.5h1.6M1367.8 943.7h1.6M1353.7 942.5h1.6M1348.5 947.9h1.6M1365.0 944.5h1.6M1351.2 950.3h1.6M1349.4 947.8h1.6M1357.7 938.5h1.6M1352.6 947.6h1.6M1351.7 948.4h1.6M1345.9 946.9h1.6M1351.7 944.0h1.6M1359.7 958.7h1.6M1357.6 944.8h1.6M1360.4 951.4h1.6M1350.3 951.9h1.6M1351.4 951.8h1.6M1358.1 954.6h1.6M1349.3 948.4h1.6M1354.0 943.1h1.6M1355.9 952.4h1.6M1347.8 946.3h1.6M1349.0 942.8h1.6M1349.2 955.7h1.6M1351.0 947.1h1.6M1358.5 954.0h1.6M1360.3 938.9h1.6M1357.4 940.5h1.6M1351.1 947.0h1.6M1351.4 958.5h1.6M1353.2 954.7h1.6M1353.2 948.7h1.6M1356.3 951.1h1.6M1356.3 940.6h1.6M1356.3 950.6h1.6M1356.7 948.7h1.6M1355.8 942.7h1.6M1359.1 943.1h1.6M1360.3 953.9h1.6M1353.7 947.6h1.6M1357.5 947.5h1.6M1348.6 950.4h1.6M1348.5 946.8h1.6M1362.1 952.9h1.6M1352.0 948.7h1.6M1351.1 948.9h1.6M1347.5 952.3h1.6M1354.1 946.0h1.6M1351.2 961.8h1.6M1352.0 946.7h1.6M1351.4 946.6h1.6M1359.9 952.3h1.6M1355.9 950.8h1.6M1348.9 937.3h1.6M1360.8 952.5h1.6M1355.0 950.4h1.6M1354.9 949.1h1.6M1352.8 938.2h1.6M1356.6 949.2h1.6M1358.4 950.5h1.6M1352.7 951.9h1.6M1354.8 946.8h1.6M1352.3 946.9h1.6M1352.7 946.8h1.6M1358.4 963.2h1.6M1353.5 954.4h1.6M1345.1 933.3h1.6M1351.9 948.2h1.6M1350.7 942.4h1.6M1350.2 946.5h1.6M1354.7 947.4h1.6M1348.6 947.2h1.6M1360.8 944.7h1.6M1354.3 953.9h1.6M1350.4 946.2h1.6M1367.0 955.0h1.6M1351.6 949.8h1.6M1354.5 949.7h1.6M1356.1 947.5h1.6M1344.0 944.3h1.6M1354.7 942.4h1.6M1352.5 956.3h1.6M1355.1 945.8h1.6M1354.6 954.1h1.6M1346.3 942.9h1.6M1351.0 946.9h1.6M1353.6 946.2h1.6M1354.5 949.4h1.6M1348.8 946.0h1.6M1348.4 950.4h1.6M1355.2 952.2h1.6M1350.1 946.4h1.6M1344.0 949.1h1.6M1346.7 950.7h1.6M1358.9 951.2h1.6M1356.8 950.1h1.6M1355.7 953.6h1.6M1359.7 958.8h1.6M1352.8 953.0h1.6M1357.9 951.1h1.6M1355.2 942.9h1.6M1358.9 944.7h1.6M1351.1 944.9h1.6M1356.5 944.3h1.6M1356.1 951.7h1.6M1354.5 947.3h1.6M1356.7 955.4h1.6M1351.9 943.9h1.6M1351.3 944.7h1.6M1352.9 948.2h1.6M1343.7 956.1h1.6M1350.3 946.9h1.6M1345.2 939.4h1.6M1349.4 950.1h1.6M1357.8 940.2h1.6" stroke="#30e060" stroke-width="1.6" opacity="0.95" fill="none"/><path d="M1356.4 945.9h1.5M1355.4 943.6h1.5M1356.6 936.4h1.5M1358.0 937.6h1.5M1356.7 938.4h1.5M1355.6 940.6h1.5M1358.6 933.5h1.5M1353.8 940.4h1.5M1357.9 939.3h1.5M1355.6 942.0h1.5M1359.1 936.5h1.5M1352.8 938.9h1.5M1357.5 934.9h1.5M1358.2 943.6h1.5M1357.6 936.7h1.5M1353.4 942.5h1.5M1356.5 942.7h1.5M1353.3 928.5h1.5M1358.2 943.9h1.5M1355.4 940.0h1.5M1356.9 942.9h1.5M1355.6 938.0h1.5M1354.1 944.0h1.5M1356.2 926.8h1.5M1356.7 937.8h1.5M1353.5 938.0h1.5M1353.4 938.3h1.5M1354.9 942.0h1.5M1354.0 932.9h1.5M1354.8 934.7h1.5" stroke="#30e060" stroke-width="1.5" opacity="0.9" fill="none"/><path d="M1359.500 825.500V850.500L1365 845.500L1369.500 855L1373.500 853L1369 844L1377 843.500z" fill="#ffffff" stroke="#111" stroke-width="1"/></svg>
</div></body></html>
